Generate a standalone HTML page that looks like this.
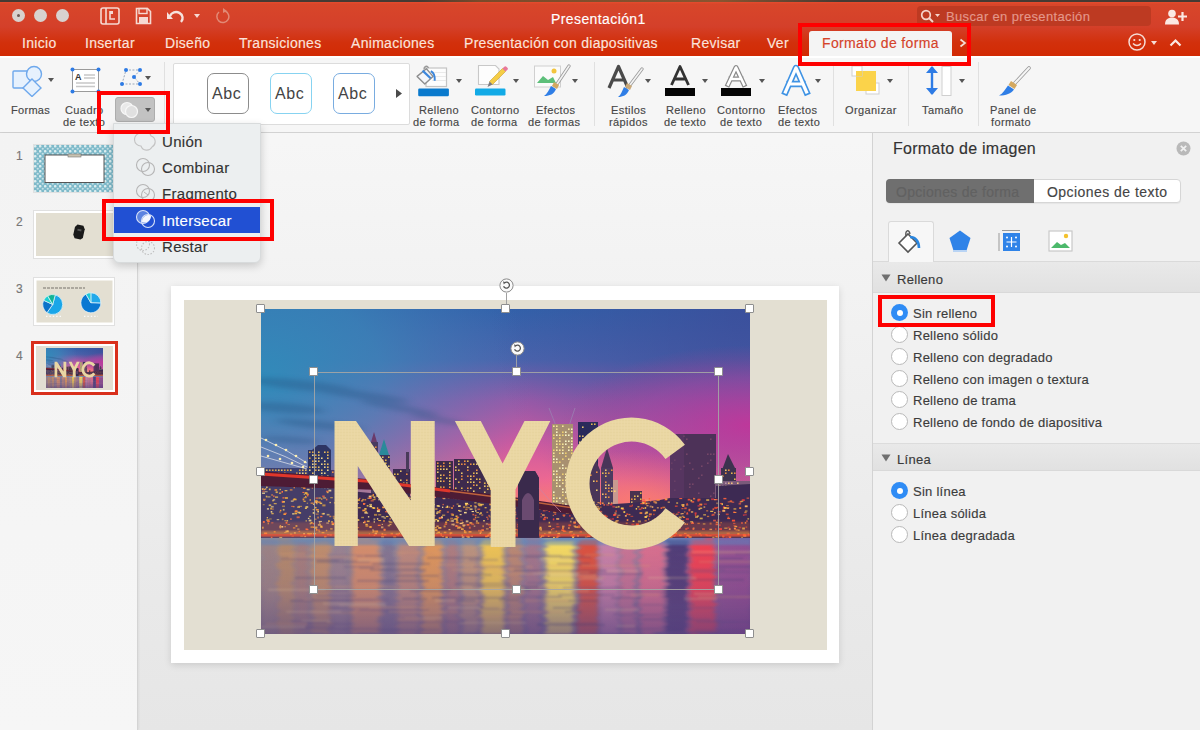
<!DOCTYPE html>
<html><head><meta charset="utf-8">
<style>
*{margin:0;padding:0;box-sizing:border-box}
html,body{width:1200px;height:730px;overflow:hidden;background:linear-gradient(180deg,#f7f7f7 0,#f6f6f6 140px,#f1f1f1 330px,#e9e9e9 600px,#e6e6e6 730px);font-family:"Liberation Sans",sans-serif;color:#333}
.a{position:absolute}
.t{position:absolute;white-space:nowrap;line-height:1;-webkit-text-stroke:0.15px currentColor}
#topstrip{left:0;top:0;width:1200px;height:2px;background:linear-gradient(90deg,#453a33 0,#453a33 35%,#7a4a2a 40%,#8a5430 60%,#453a33 70%,#453a33 100%)}
#title{left:0;top:2px;width:1200px;height:54px;background:linear-gradient(180deg,#e64c2e 0,#d8462a 4%,#d4402a 45%,#d2300c 75%,#d22a04 100%)}
.tab{color:#fbe3dc;font-size:14px;letter-spacing:0.3px;top:36px}
#ribbon{left:0;top:56px;width:1200px;height:77px;background:#f6f6f6;border-top:2px solid #fff;border-bottom:1px solid #d2d2d2}
.rl{font-size:11px;color:#464646;letter-spacing:0.4px;text-align:center}
.sep{position:absolute;top:62px;width:1px;height:64px;background:#e0e0e0}
.arr{position:absolute;width:0;height:0;border-left:3px solid transparent;border-right:3px solid transparent;border-top:4px solid #555}
#left{left:0;top:133px;width:138px;height:597px;background:linear-gradient(180deg,#f3f3f3,#f6f6f6);border-right:1px solid #d4d4d4;box-shadow:1px 0 2px rgba(0,0,0,0.05)}
#right{left:872px;top:133px;width:328px;height:597px;background:#f1f1f1;border-left:1px solid #d3d3d3}
.rad{position:absolute;width:17px;height:17px;border-radius:50%;background:#fff;border:1px solid #b9b9b9}
.rad.on{background:#2f8cf5;border:none}
.rad.on:after{content:"";position:absolute;left:5.5px;top:5.5px;width:6px;height:6px;border-radius:50%;background:#fff}
.rt{font-size:13px;color:#3c3c3c;letter-spacing:0.25px}
.redbox{position:absolute;border:4px solid #fe0000}
.mi{font-size:15px;color:#333;letter-spacing:0.3px}
.h{position:absolute;width:9px;height:9px;background:#fff;border:1px solid #8f8f8f;border-radius:1px}
</style></head><body>
<div id="topstrip" class="a"></div>
<div id="title" class="a"></div>
<!-- traffic lights -->
<div class="a" style="left:12px;top:9px;width:13px;height:13px;border-radius:50%;background:#d8d2cf"></div>
<div class="a" style="left:17px;top:14px;width:3px;height:3px;border-radius:50%;background:#6a5a55"></div>
<div class="a" style="left:34px;top:9px;width:13px;height:13px;border-radius:50%;background:#d8d2cf"></div>
<div class="a" style="left:56px;top:9px;width:13px;height:13px;border-radius:50%;background:#d8d2cf"></div>
<div class="t" style="left:551px;top:12px;font-size:14px;color:#fff;letter-spacing:0.4px">Presentación1</div>

<div class="t tab" style="left:22px">Inicio</div>
<div class="t tab" style="left:85px">Insertar</div>
<div class="t tab" style="left:165px">Diseño</div>
<div class="t tab" style="left:239px">Transiciones</div>
<div class="t tab" style="left:351px">Animaciones</div>
<div class="t tab" style="left:464px">Presentación con diapositivas</div>
<div class="t tab" style="left:691px">Revisar</div>
<div class="t tab" style="left:767px">Ver</div>
<div class="a" style="left:809px;top:31px;width:143px;height:25px;background:#f4f4f4;border-radius:3px 3px 0 0"></div>
<div class="t" style="left:822px;top:36px;font-size:14px;color:#d5432a;letter-spacing:0.35px">Formato de forma</div>


<!-- title icons -->
<svg class="a" style="left:100px;top:7px" width="20" height="18" viewBox="0 0 20 18"><rect x="1" y="1" width="18" height="16" rx="2" fill="none" stroke="#f6d9d2" stroke-width="1.6"/><line x1="6" y1="1" x2="6" y2="17" stroke="#f6d9d2" stroke-width="1.6"/><path d="M10 4v8h5" fill="none" stroke="#f6d9d2" stroke-width="1.6"/><rect x="10" y="4" width="3" height="3" fill="#f6d9d2"/></svg>
<svg class="a" style="left:135px;top:7px" width="17" height="18" viewBox="0 0 17 18"><path d="M1.5 1.5h11l3 3v12h-14z" fill="none" stroke="#f6d9d2" stroke-width="1.6"/><rect x="4" y="1.5" width="8" height="5" fill="none" stroke="#f6d9d2" stroke-width="1.4"/><rect x="4" y="10" width="9" height="6" fill="#f6d9d2"/></svg>
<svg class="a" style="left:167px;top:9px" width="20" height="15" viewBox="0 0 20 15"><path d="M3 7 A6.5 6 0 1 1 14 13" fill="none" stroke="#f6e3de" stroke-width="2.4"/><path d="M0 3l6 7H0z" fill="#f6e3de"/></svg>
<div class="arr" style="left:194px;top:14px;border-top-color:#f6d9d2"></div>
<svg class="a" style="left:215px;top:8px" width="15" height="16" viewBox="0 0 15 16"><path d="M4 4 A6 6 0 1 0 10 3" fill="none" stroke="#e28a76" stroke-width="1.5"/><path d="M8 0l4 3-4 2z" fill="#e28a76"/></svg>
<!-- search -->
<div class="a" style="left:917px;top:6px;width:234px;height:20px;background:#bd3a22;border-radius:4px"></div>
<svg class="a" style="left:920px;top:9px" width="22" height="14" viewBox="0 0 22 14"><circle cx="6" cy="6" r="4.3" fill="none" stroke="#f5d5cc" stroke-width="1.7"/><line x1="9" y1="9" x2="13" y2="13" stroke="#f5d5cc" stroke-width="1.9"/><path d="M15 5h5l-2.5 3z" fill="#f5d5cc"/></svg>
<div class="t" style="left:946px;top:10px;font-size:13px;color:#e4978a;letter-spacing:0.35px">Buscar en presentación</div>
<svg class="a" style="left:1165px;top:9px" width="23" height="16" viewBox="0 0 23 16"><circle cx="7" cy="4.5" r="3.8" fill="#fbe8e3"/><path d="M0 15.5c0-5 3-7 7-7s7 2 7 7z" fill="#fbe8e3"/><path d="M17.5 3v9M13 7.5h9" stroke="#fbe8e3" stroke-width="2.2"/></svg>
<!-- smiley & collapse -->
<svg class="a" style="left:1127px;top:33px" width="22" height="18" viewBox="0 0 22 18"><circle cx="10" cy="9" r="8" fill="none" stroke="#f6dcd5" stroke-width="1.5"/><circle cx="7.3" cy="7" r="1.1" fill="#f6dcd5"/><circle cx="12.7" cy="7" r="1.1" fill="#f6dcd5"/><path d="M6 10.5q4 4 8 0" fill="none" stroke="#f6dcd5" stroke-width="1.4"/></svg>
<div class="arr" style="left:1151px;top:41px;border-top-color:#f6dcd5"></div>
<svg class="a" style="left:1169px;top:38px" width="13" height="9" viewBox="0 0 13 9"><path d="M1.5 7.5l5-5 5 5" fill="none" stroke="#fbe9e5" stroke-width="2.2"/></svg>
<svg class="a" style="left:959px;top:38px" width="13" height="10" viewBox="0 0 13 10"><path d="M1.5 1.5l4.5 3.5-4.5 3.5" fill="none" stroke="#f6dcd5" stroke-width="1.7"/><circle cx="11" cy="5" r="1" fill="#f6dcd5"/></svg>
<div id="ribbon" class="a"></div>

<!-- ribbon content -->
<svg class="a" style="left:12px;top:65px" width="32" height="32" viewBox="0 0 32 32"><rect x="1" y="6" width="17" height="17" rx="1" fill="#e6f1fd" stroke="#6ea8ec" stroke-width="1.4"/><circle cx="22" cy="9" r="7.5" fill="#e6f1fd" stroke="#6ea8ec" stroke-width="1.4"/><path d="M20 14l9 9-9 8.5-9-8.5z" fill="#e6f1fd" stroke="#6ea8ec" stroke-width="1.4"/></svg>
<div class="arr" style="left:48px;top:78px"></div>
<div class="t rl" style="left:11px;top:105px;letter-spacing:0.3px">Formas</div>
<svg class="a" style="left:70px;top:67px" width="32" height="27" viewBox="0 0 32 27"><rect x="2.5" y="2.5" width="26" height="22" fill="#fff" stroke="#9a9a9a" stroke-width="1"/><text x="5" y="13" font-family="Liberation Sans" font-size="9" font-weight="bold" fill="#333">A</text><path d="M14 8h11M14 11h11M6 16h19M6 19.5h19" stroke="#c8c8c8" stroke-width="1.3"/><circle cx="2.5" cy="2.5" r="2" fill="#2d7be5"/><circle cx="28.5" cy="2.5" r="2" fill="#2d7be5"/><circle cx="2.5" cy="24.5" r="2" fill="#2d7be5"/><circle cx="28.5" cy="24.5" r="2" fill="#2d7be5"/></svg>
<div class="t rl" style="left:65px;top:105px">Cuadro</div>
<div class="t rl" style="left:63px;top:117px">de texto</div>
<svg class="a" style="left:118px;top:67px" width="26" height="20" viewBox="0 0 26 20"><path d="M4 17h18M4 17l4-14h14M22 3l-6 7 6 7" fill="none" stroke="#9aa8bb" stroke-width="1" stroke-dasharray="2 1.5"/><circle cx="4" cy="17" r="2" fill="#2d7be5"/><circle cx="8" cy="3" r="2" fill="#2d7be5"/><circle cx="22" cy="3" r="2" fill="#2d7be5"/><circle cx="16" cy="10" r="2" fill="#2d7be5"/><circle cx="22" cy="17" r="2" fill="#2d7be5"/></svg>
<div class="arr" style="left:145px;top:76px"></div>
<!-- merge button -->
<div class="a" style="left:115px;top:97px;width:40px;height:25px;background:#c2c2c2;border:1px solid #adadad;border-radius:3px"></div>
<svg class="a" style="left:119px;top:101px" width="22" height="18" viewBox="0 0 22 18"><circle cx="8" cy="7.5" r="6" fill="#e9e9e9" stroke="#f7f7f7" stroke-width="1.2"/><circle cx="12.5" cy="10.5" r="6" fill="#e0e0e0" stroke="#f7f7f7" stroke-width="1.2"/></svg>
<div class="arr" style="left:145px;top:108px"></div>
<div class="sep" style="left:164px"></div>
<!-- gallery -->
<div class="a" style="left:173px;top:63px;width:237px;height:62px;background:#fff;border:1px solid #dcdcdc;border-radius:2px"></div>
<div class="a" style="left:207px;top:73px;width:42px;height:41px;border:1.3px solid #8c8c8c;border-radius:7px"></div>
<div class="a" style="left:270px;top:73px;width:42px;height:41px;border:1.3px solid #87d3f1;border-radius:7px"></div>
<div class="a" style="left:333px;top:73px;width:42px;height:41px;border:1.3px solid #79ace0;border-radius:7px"></div>
<div class="t" style="left:212px;top:86px;font-size:16px;color:#444;letter-spacing:0.6px;-webkit-text-stroke:0">Abc</div>
<div class="t" style="left:275px;top:86px;font-size:16px;color:#444;letter-spacing:0.6px;-webkit-text-stroke:0">Abc</div>
<div class="t" style="left:338px;top:86px;font-size:16px;color:#444;letter-spacing:0.6px;-webkit-text-stroke:0">Abc</div>
<svg class="a" style="left:395px;top:88px" width="8" height="11" viewBox="0 0 8 11"><path d="M1 1l6 4.5-6 4.5z" fill="#4a4a4a"/></svg>
<!-- relleno de forma -->
<svg class="a" style="left:415px;top:63px" width="34" height="34" viewBox="0 0 34 34"><rect x="11" y="5" width="20.5" height="18.5" fill="#fdfdfd" stroke="#c4c4c4" stroke-width="1.2"/><path d="M17 9.5h14M17 13.5h14M17 17.5h14" stroke="#e4e4e4" stroke-width="0.8"/><path d="M11.4 5.8L18 13.4L9.8 21L2.1 13.4Z" fill="#f4f6fa" stroke="#8e8e8e" stroke-width="1.4" stroke-linejoin="round"/><path d="M7.6 7.6L15.6 15.2" stroke="#3d87dc" stroke-width="2.2"/><path d="M9 6.5c0-3 3-4.5 4.5-1.5" fill="none" stroke="#9a9a9a" stroke-width="1.5"/><path d="M15.8 8.2c2.6 1.2 4.2 4.8 3.9 9.6" fill="none" stroke="#3d87dc" stroke-width="2"/><rect x="3.2" y="25.5" width="30.7" height="7.7" rx="1.2" fill="#0a7acd"/></svg>
<div class="arr" style="left:456px;top:79px"></div>
<div class="t rl" style="left:419px;top:105px">Relleno</div>
<div class="t rl" style="left:413px;top:117px">de forma</div>
<svg class="a" style="left:474px;top:64px" width="34" height="33" viewBox="0 0 34 33"><path d="M4.5 1.5h17l3.5 3.5v15.5h-20.5z" fill="#fdfdfd" stroke="#c8c8c8" stroke-width="1.1"/><path d="M15.5 17.5L28.5 4.5l3 3-13 13z" fill="#f5cd45" stroke="#c9a030" stroke-width="0.6"/><path d="M28.5 4.5l1.8-1.8a1.5 1.5 0 0 1 2.1 0l1 1a1.5 1.5 0 0 1 0 2.1L31.5 7.5z" fill="#e8789a"/><path d="M15.5 17.5l-2 5.5 5-2.5z" fill="#7a7a80"/><rect x="1" y="24.5" width="30.5" height="7" rx="1.2" fill="#12aae6"/></svg>
<div class="arr" style="left:513px;top:79px"></div>
<div class="t rl" style="left:471px;top:105px">Contorno</div>
<div class="t rl" style="left:471px;top:117px">de forma</div>
<svg class="a" style="left:533px;top:64px" width="38" height="34" viewBox="0 0 38 34"><rect x="1.5" y="2" width="26" height="21" fill="#fbfbfb" stroke="#d0d0d0" stroke-width="1"/><path d="M4 19l6-7 5 4 5-3 3 6z" fill="#5dbf7a"/><circle cx="21" cy="7" r="2.5" fill="#f3c53e"/><path d="M36 2l-12 18" stroke="#9a9a9a" stroke-width="3.2" stroke-linecap="round"/><path d="M36 2l-12 18" stroke="#f3f3f3" stroke-width="1.6" stroke-linecap="round"/><path d="M21 18l5 3-2 4-5-3z" fill="#d3a860"/><path d="M18 22l5 3c-2 5-6 7-12 7 3-2 5-6 7-10z" fill="#2f7ee6"/></svg>
<div class="arr" style="left:572px;top:79px"></div>
<div class="t rl" style="left:536px;top:105px">Efectos</div>
<div class="t rl" style="left:528px;top:117px">de formas</div>
<div class="sep" style="left:594px"></div>
<!-- text styles -->
<svg class="a" style="left:606px;top:64px" width="38" height="33" viewBox="0 0 38 33"><path d="M3 24L12.5 2.5L22 24M6.8 16h11.5" fill="none" stroke="#4a4a4a" stroke-width="3.2" stroke-linejoin="round"/><path d="M36 5l-12 16" stroke="#9a9a9a" stroke-width="3.2" stroke-linecap="round"/><path d="M36 5l-12 16" stroke="#f3f3f3" stroke-width="1.6" stroke-linecap="round"/><path d="M21 19l5 3-2 4-5-3z" fill="#c9a878"/><path d="M18 23l5 3c-2 5-6 7-11 7 3-2 4-6 6-10z" fill="#2f7ee6"/></svg>
<div class="arr" style="left:645px;top:79px"></div>
<div class="t rl" style="left:611px;top:105px">Estilos</div>
<div class="t rl" style="left:609px;top:117px">rápidos</div>
<svg class="a" style="left:664px;top:64px" width="32" height="33" viewBox="0 0 32 33"><path d="M7.5 21L16 2.5L24.5 21M10.5 15h11" fill="none" stroke="#333" stroke-width="2.8" stroke-linejoin="round"/><rect x="1" y="24" width="30" height="8" fill="#050505"/></svg>
<div class="arr" style="left:702px;top:79px"></div>
<div class="t rl" style="left:666px;top:105px">Relleno</div>
<div class="t rl" style="left:664px;top:117px">de texto</div>
<svg class="a" style="left:720px;top:64px" width="32" height="33" viewBox="0 0 32 33"><path d="M8 20.5L16 3.5L24 20.5M11 15h10" fill="none" stroke="#8a8a8a" stroke-width="5" stroke-linejoin="round" stroke-linecap="square"/><path d="M8 20.5L16 3.5L24 20.5M11 15h10" fill="none" stroke="#fff" stroke-width="2.6" stroke-linejoin="round" stroke-linecap="square"/><rect x="1" y="24" width="30" height="8" fill="#050505"/></svg>
<div class="arr" style="left:759px;top:79px"></div>
<div class="t rl" style="left:717px;top:105px">Contorno</div>
<div class="t rl" style="left:720px;top:117px">de texto</div>
<svg class="a" style="left:780px;top:63px" width="32" height="34" viewBox="0 0 32 34"><path d="M5.5 29L16 5L26.5 29M9.5 21h13" fill="none" stroke="#3f93e4" stroke-width="6.5" stroke-linejoin="round" stroke-linecap="square"/><path d="M5.5 29L16 5L26.5 29M9.5 21h13" fill="none" stroke="#fff" stroke-width="3.2" stroke-linejoin="round" stroke-linecap="square"/></svg>
<div class="arr" style="left:815px;top:79px"></div>
<div class="t rl" style="left:778px;top:105px">Efectos</div>
<div class="t rl" style="left:778px;top:117px">de texto</div>
<div class="sep" style="left:833px"></div>
<!-- organizar -->
<svg class="a" style="left:850px;top:64px" width="32" height="32" viewBox="0 0 32 32"><rect x="16" y="19" width="13" height="11" fill="#fff" stroke="#cfcfcf" stroke-width="1"/><rect x="6" y="7" width="20" height="20" fill="#fbd34a"/><rect x="2" y="2" width="10" height="10" fill="#fff" stroke="#cfcfcf" stroke-width="1"/><rect x="6" y="7" width="6" height="5" fill="#fbd34a"/></svg>
<div class="arr" style="left:887px;top:79px"></div>
<div class="t rl" style="left:845px;top:105px">Organizar</div>
<div class="sep" style="left:908px"></div>
<svg class="a" style="left:924px;top:65px" width="30" height="32" viewBox="0 0 30 32"><path d="M8 2v27" stroke="#2d7be5" stroke-width="2.4"/><path d="M2 8l6-7 6 7z M2 23l6 7 6-7z" fill="#2d7be5"/><rect x="18" y="1.5" width="9" height="29" fill="#fff" stroke="#cfcfcf" stroke-width="1"/></svg>
<div class="arr" style="left:959px;top:79px"></div>
<div class="t rl" style="left:922px;top:105px">Tamaño</div>
<div class="sep" style="left:978px"></div>
<svg class="a" style="left:996px;top:66px" width="36" height="30" viewBox="0 0 36 30"><path d="M33 2l-14 15" stroke="#9a9a9a" stroke-width="3.6" stroke-linecap="round"/><path d="M33 2l-14 15" stroke="#f5f5f5" stroke-width="2" stroke-linecap="round"/><path d="M15 15l6 4-2.5 4-6-4z" fill="#d3a860"/><path d="M12 19.5l6 4c-3 4-8 6-15 6 4-2 6-6 9-10z" fill="#2f7ee6"/></svg>
<div class="t rl" style="left:990px;top:105px">Panel de</div>
<div class="t rl" style="left:991px;top:117px">formato</div>
<div id="left" class="a"></div>
<div id="right" class="a"></div>



<!-- right panel -->
<div class="t" style="left:893px;top:141px;font-size:16px;color:#333;letter-spacing:0.25px">Formato de imagen</div>
<svg class="a" style="left:1176px;top:141px" width="15" height="15" viewBox="0 0 15 15"><circle cx="7.5" cy="7.5" r="7" fill="#b9b9b9"/><path d="M4.8 4.8l5.4 5.4M10.2 4.8l-5.4 5.4" stroke="#f0f0f0" stroke-width="1.7"/></svg>
<div class="a" style="left:886px;top:179px;width:295px;height:24px;background:#fff;border:1px solid #d6d6d6;border-radius:4px;box-shadow:0 1px 1px rgba(0,0,0,0.05)"></div>
<div class="a" style="left:886px;top:179px;width:148px;height:24px;background:#6f6f6f;border-radius:4px 0 0 4px"></div>
<div class="t" style="left:896px;top:185px;font-size:14px;color:#616161;letter-spacing:0.3px">Opciones de forma</div>
<div class="t" style="left:1047px;top:185px;font-size:14px;color:#444;letter-spacing:0.45px">Opciones de texto</div>
<!-- icon tabs -->
<div class="a" style="left:888px;top:221px;width:46px;height:41px;background:#f7f7f7;border:1px solid #dadada;border-bottom:none;border-radius:3px 3px 0 0"></div>
<div class="a" style="left:873px;top:261px;width:15px;height:1px;background:#dadada"></div>
<div class="a" style="left:934px;top:261px;width:266px;height:1px;background:#dadada"></div>
<svg class="a" style="left:897px;top:228px" width="26" height="26" viewBox="0 0 26 26"><path d="M2 15l9-9 9 9-9 9z" fill="#fff" stroke="#555" stroke-width="1.6"/><path d="M9 8c-1-6 3-7 4-2" fill="none" stroke="#555" stroke-width="1.4"/><path d="M13 9c5 0 9 4 9 11" fill="none" stroke="#2b86de" stroke-width="2.6"/></svg>
<svg class="a" style="left:948px;top:229px" width="24" height="24" viewBox="0 0 24 24"><path d="M12 1.5l10.5 7.5-4 12.5h-13l-4-12.5z" fill="#2f83e8"/><rect x="5" y="21" width="14" height="2" fill="#b9d4f4"/></svg>
<svg class="a" style="left:997px;top:229px" width="25" height="24" viewBox="0 0 25 24"><path d="M2 4v18" stroke="#999" stroke-width="1"/><path d="M5 1.5h18" stroke="#999" stroke-width="1"/><rect x="6" y="4" width="17" height="18" fill="#2f83e8"/><path d="M14.5 8v10M9.5 13h10" stroke="#fff" stroke-width="1.2"/><circle cx="10" cy="8.5" r="1" fill="#fff"/><circle cx="19" cy="8.5" r="1" fill="#fff"/><circle cx="10" cy="17.5" r="1" fill="#fff"/><circle cx="19" cy="17.5" r="1" fill="#fff"/></svg>
<svg class="a" style="left:1048px;top:230px" width="25" height="22" viewBox="0 0 25 22"><rect x="1" y="1" width="23" height="20" fill="#fff" stroke="#c9c9c9" stroke-width="1.2"/><path d="M3 18l6-6 4 3 4-2 5 5z" fill="#4cb96b"/><circle cx="18" cy="6" r="2.2" fill="#f4c22e"/></svg>
<!-- relleno section -->
<div class="a" style="left:873px;top:262px;width:327px;height:31px;background:linear-gradient(180deg,#e9e9e9,#e1e1e1);border-bottom:1px solid #d9d9d9"></div>
<svg class="a" style="left:881px;top:274px" width="10" height="8" viewBox="0 0 10 8"><path d="M0.5 0.5h9l-4.5 7z" fill="#707070"/></svg>
<div class="t" style="left:897px;top:273px;font-size:13px;color:#3a3a3a;letter-spacing:0.3px">Relleno</div>
<div class="rad on" style="left:891px;top:304px"></div>
<div class="rad" style="left:891px;top:326px"></div>
<div class="rad" style="left:891px;top:348px"></div>
<div class="rad" style="left:891px;top:370px"></div>
<div class="rad" style="left:891px;top:391px"></div>
<div class="rad" style="left:891px;top:413px"></div>
<div class="t rt" style="left:913px;top:307px">Sin relleno</div>
<div class="t rt" style="left:913px;top:329px">Relleno sólido</div>
<div class="t rt" style="left:913px;top:351px">Relleno con degradado</div>
<div class="t rt" style="left:913px;top:373px">Relleno con imagen o textura</div>
<div class="t rt" style="left:913px;top:394px">Relleno de trama</div>
<div class="t rt" style="left:913px;top:416px">Relleno de fondo de diapositiva</div>
<div class="a" style="left:873px;top:443px;width:327px;height:1px;background:#dcdcdc"></div>
<div class="a" style="left:873px;top:444px;width:327px;height:27px;background:linear-gradient(180deg,#e9e9e9,#e1e1e1);border-bottom:1px solid #d9d9d9"></div>
<svg class="a" style="left:881px;top:454px" width="10" height="8" viewBox="0 0 10 8"><path d="M0.5 0.5h9l-4.5 7z" fill="#707070"/></svg>
<div class="t" style="left:897px;top:453px;font-size:13px;color:#3a3a3a;letter-spacing:0.3px">Línea</div>
<div class="rad on" style="left:891px;top:482px"></div>
<div class="rad" style="left:891px;top:504px"></div>
<div class="rad" style="left:891px;top:526px"></div>
<div class="t rt" style="left:913px;top:485px">Sin línea</div>
<div class="t rt" style="left:913px;top:507px">Línea sólida</div>
<div class="t rt" style="left:913px;top:529px">Línea degradada</div>
<!-- thumbnails -->
<div class="t" style="left:16px;top:150px;font-size:12px;color:#777">1</div>
<div class="a" style="left:33px;top:144px;width:82px;height:49px;background:#fff;border:1px solid #e0e0e0"></div>
<svg class="a" style="left:34px;top:145px" width="80" height="47" viewBox="0 0 80 47"><defs><pattern id="pt" width="5" height="5" patternUnits="userSpaceOnUse"><rect width="5" height="5" fill="#7db9c9"/><circle cx="1.25" cy="1.25" r="1.3" fill="#dcedf0"/><circle cx="3.75" cy="3.75" r="1.1" fill="#c4e0e6"/></pattern></defs><rect width="80" height="47" fill="url(#pt)"/><rect x="11" y="10" width="59" height="27.5" fill="#fff" stroke="#555" stroke-width="1"/><rect x="34" y="9" width="13" height="3" fill="#c9c2b0" stroke="#777" stroke-width="0.6"/></svg>
<div class="t" style="left:16px;top:216px;font-size:12px;color:#777">2</div>
<div class="a" style="left:33px;top:210px;width:82px;height:49px;background:#fff;border:1px solid #e0e0e0"></div>
<div class="a" style="left:36px;top:213px;width:77px;height:43px;background:#e3dfd2"></div>
<svg class="a" style="left:73px;top:224px" width="12" height="16" viewBox="0 0 12 16"><path d="M3 1h6l2 3v9l-2 2H3l-2-3V4z" fill="#1a1a1a" transform="rotate(12 6 8)"/><rect x="4" y="5" width="4" height="2" fill="#555" transform="rotate(12 6 8)"/></svg>
<div class="t" style="left:16px;top:283px;font-size:12px;color:#777">3</div>
<div class="a" style="left:33px;top:277px;width:82px;height:49px;background:#fff;border:1px solid #e0e0e0"></div>
<svg class="a" style="left:36px;top:280px" width="77" height="43" viewBox="0 0 77 43"><rect x="0.5" y="0.5" width="76" height="42" fill="#e3dfd2"/><path d="M7 8h42" stroke="#6a6660" stroke-width="1.7" stroke-dasharray="3 1" opacity="0.6"/><path d="M16.70 24.50L19.29 14.84A10 10 0 1 1 10.96 32.69Z" fill="#1aa6e8" stroke="#e8f6fb" stroke-width="0.7"/><path d="M16.70 24.50L10.96 32.69A10 10 0 0 1 7.64 20.27Z" fill="#0b72c9" stroke="#e8f6fb" stroke-width="0.7"/><path d="M16.70 24.50L7.64 20.27A10 10 0 0 1 11.70 15.84Z" fill="#1ccfd0" stroke="#e8f6fb" stroke-width="0.7"/><path d="M16.70 24.50L11.70 15.84A10 10 0 0 1 19.29 14.84Z" fill="#12b496" stroke="#e8f6fb" stroke-width="0.7"/><path d="M54.90 22.80L54.90 12.80A10 10 0 0 1 64.89 23.15Z" fill="#22a9ea" stroke="#e8f6fb" stroke-width="0.7"/><path d="M54.90 22.80L64.89 23.15A10 10 0 1 1 49.90 14.14Z" fill="#0a78d2" stroke="#e8f6fb" stroke-width="0.7"/><path d="M54.90 22.80L49.90 14.14A10 10 0 0 1 54.90 12.80Z" fill="#1cc8d8" stroke="#e8f6fb" stroke-width="0.7"/><path d="M10 36.3h16M48 36.3h14" stroke="#fafafa" stroke-width="1.2" stroke-dasharray="1.4 2"/></svg>
<div class="t" style="left:16px;top:350px;font-size:12px;color:#777">4</div>
<div class="a" style="left:31px;top:341px;width:87px;height:54px;border:3px solid #d9301c;background:#fff"></div>
<div class="a" style="left:36px;top:346px;width:77px;height:44px;background:#e3dfd2"></div>
<svg class="a" style="left:46px;top:348px" width="57" height="40" viewBox="261 309 489 325" preserveAspectRatio="none"><use href="#nycimg"/></svg>
<!-- slide frame -->
<div class="a" style="left:171px;top:286px;width:668px;height:377px;background:#fff;box-shadow:0 2px 7px rgba(0,0,0,0.13)"></div>
<div class="a" style="left:184px;top:300px;width:643px;height:350px;background:#e3dfd2"></div>
<svg class="a" style="left:261px;top:309px" width="489" height="325" viewBox="261 309 489 325">
<defs>
<linearGradient id="sky" x1="0" y1="309" x2="0" y2="540" gradientUnits="userSpaceOnUse">
<stop offset="0" stop-color="#3262aa"/><stop offset="0.22" stop-color="#4a64ac"/><stop offset="0.4" stop-color="#9a5aa8"/><stop offset="0.58" stop-color="#cc5aa0"/><stop offset="0.74" stop-color="#ec6892"/><stop offset="0.86" stop-color="#f5806e"/><stop offset="1" stop-color="#f5906a"/>
</linearGradient>
<radialGradient id="skyL" cx="261" cy="380" r="270" gradientTransform="translate(261 380) scale(1 0.75) translate(-261 -380)" gradientUnits="userSpaceOnUse">
<stop offset="0" stop-color="#2e8cba" stop-opacity="0.97"/><stop offset="0.45" stop-color="#3a88ba" stop-opacity="0.7"/><stop offset="1" stop-color="#4a7ab8" stop-opacity="0"/>
</radialGradient>
<radialGradient id="skyTR" cx="750" cy="309" r="260" gradientUnits="userSpaceOnUse">
<stop offset="0" stop-color="#3d4a98" stop-opacity="0.75"/><stop offset="1" stop-color="#3d4a98" stop-opacity="0"/>
</radialGradient>
<radialGradient id="skyMag" cx="750" cy="425" r="190" gradientTransform="translate(750 425) scale(1 0.42) translate(-750 -425)" gradientUnits="userSpaceOnUse">
<stop offset="0" stop-color="#c8339a" stop-opacity="0.85"/><stop offset="0.6" stop-color="#c040a0" stop-opacity="0.4"/><stop offset="1" stop-color="#b83a90" stop-opacity="0"/>
</radialGradient>
<radialGradient id="glow" cx="640" cy="500" r="110" gradientTransform="translate(640 500) scale(1 0.45) translate(-640 -500)" gradientUnits="userSpaceOnUse">
<stop offset="0" stop-color="#ff7a70" stop-opacity="0.85"/><stop offset="1" stop-color="#ff6a8a" stop-opacity="0"/>
</radialGradient>
<linearGradient id="water" x1="0" y1="538" x2="0" y2="634" gradientUnits="userSpaceOnUse">
<stop offset="0" stop-color="#6a90c0"/><stop offset="0.15" stop-color="#8a84a0"/><stop offset="0.6" stop-color="#806e94"/><stop offset="1" stop-color="#6a5a8c"/>
</linearGradient>
<linearGradient id="waterH" x1="261" y1="0" x2="750" y2="0" gradientUnits="userSpaceOnUse">
<stop offset="0" stop-color="#a08a7a" stop-opacity="0.5"/><stop offset="0.5" stop-color="#a08080" stop-opacity="0.2"/><stop offset="0.7" stop-color="#8a5a90" stop-opacity="0"/><stop offset="1" stop-color="#7a2a80" stop-opacity="0.45"/>
</linearGradient>
<linearGradient id="wfade" x1="0" y1="538" x2="0" y2="634" gradientUnits="userSpaceOnUse"><stop offset="0" stop-color="#5a4a88" stop-opacity="0"/><stop offset="0.5" stop-color="#5a4a88" stop-opacity="0.1"/><stop offset="1" stop-color="#4a3a7a" stop-opacity="0.4"/></linearGradient>
<linearGradient id="mgrad" x1="0" y1="538" x2="0" y2="634" gradientUnits="userSpaceOnUse"><stop offset="0" stop-color="#fff"/><stop offset="0.5" stop-color="#ddd"/><stop offset="1" stop-color="#888"/></linearGradient>
<mask id="wm" maskUnits="userSpaceOnUse" x="261" y="538" width="489" height="96"><rect x="261" y="538" width="489" height="96" fill="url(#mgrad)"/></mask>
<pattern id="tex" width="3" height="3" patternUnits="userSpaceOnUse"><rect width="3" height="3" fill="#ead7a3"/><rect width="3" height="0.6" fill="#e6d29d"/><rect width="0.6" height="3" fill="#ecdaa8"/></pattern>
<filter id="bl05" x="-10%" y="-10%" width="120%" height="120%"><feGaussianBlur stdDeviation="0.6"/></filter>
<filter id="bl1" x="-20%" y="-20%" width="140%" height="140%"><feGaussianBlur stdDeviation="1"/></filter>
<filter id="bl2" x="-50%" y="-20%" width="200%" height="140%"><feTurbulence type="fractalNoise" baseFrequency="0.02 0.35" numOctaves="2" seed="3" result="n"/><feDisplacementMap in="SourceGraphic" in2="n" scale="10" xChannelSelector="R" yChannelSelector="G" result="d"/><feGaussianBlur in="d" stdDeviation="2.2 0.8"/></filter>
<filter id="bl3" x="-20%" y="-50%" width="140%" height="200%"><feGaussianBlur stdDeviation="5 2.5"/></filter>
</defs><g id="nycimg">
<rect x="261" y="309" width="489" height="232" fill="url(#sky)"/>
<rect x="261" y="309" width="489" height="232" fill="url(#skyL)"/>
<rect x="261" y="309" width="489" height="232" fill="url(#skyTR)"/>
<rect x="261" y="309" width="489" height="232" fill="url(#skyMag)"/>
<rect x="261" y="309" width="489" height="232" fill="url(#glow)"/>
<g filter="url(#bl3)" opacity="0.32">
<ellipse cx="300" cy="385" rx="55" ry="5" fill="#24507e" transform="rotate(6 300 385)"/>
<ellipse cx="360" cy="395" rx="50" ry="4" fill="#24507e" transform="rotate(8 360 395)"/>
<ellipse cx="285" cy="408" rx="40" ry="5" fill="#24507e" transform="rotate(4 285 408)"/>
<ellipse cx="400" cy="408" rx="40" ry="3" fill="#24507e" transform="rotate(10 400 408)"/>
<ellipse cx="320" cy="425" rx="45" ry="4" fill="#24507e" transform="rotate(6 320 425)"/>
<ellipse cx="290" cy="440" rx="30" ry="3" fill="#24507e" transform="rotate(4 290 440)"/>
<ellipse cx="440" cy="420" rx="30" ry="2.5" fill="#24507e" transform="rotate(10 440 420)"/>
</g>
<g filter="url(#bl05)">
<rect x="262" y="468" width="46" height="72" fill="#3a4070"/><rect x="263.0" y="469.5" width="1.6" height="1.4" fill="#ffd060"/><rect x="266.0" y="469.5" width="1.6" height="1.4" fill="#ffd060"/><rect x="269.0" y="469.5" width="1.6" height="1.4" fill="#f0b040"/><rect x="272.0" y="469.5" width="1.6" height="1.4" fill="#f0b040"/><rect x="275.0" y="469.5" width="1.6" height="1.4" fill="#f0b040"/><rect x="278.0" y="469.5" width="1.6" height="1.4" fill="#ffd060"/><rect x="281.0" y="469.5" width="1.6" height="1.4" fill="#ffd060"/><rect x="284.0" y="469.5" width="1.6" height="1.4" fill="#f0b040"/><rect x="287.0" y="469.5" width="1.6" height="1.4" fill="#f0b040"/><rect x="290.0" y="469.5" width="1.6" height="1.4" fill="#ffd060"/><rect x="299.0" y="469.5" width="1.6" height="1.4" fill="#f0b040"/><rect x="302.0" y="469.5" width="1.6" height="1.4" fill="#ffd060"/><rect x="305.0" y="469.5" width="1.6" height="1.4" fill="#ffd060"/><rect x="263.0" y="472.5" width="1.6" height="1.4" fill="#ffd060"/><rect x="278.0" y="472.5" width="1.6" height="1.4" fill="#f0b040"/><rect x="284.0" y="472.5" width="1.6" height="1.4" fill="#f0b040"/><rect x="296.0" y="472.5" width="1.6" height="1.4" fill="#f0b040"/><rect x="299.0" y="472.5" width="1.6" height="1.4" fill="#ffe890"/><rect x="302.0" y="472.5" width="1.6" height="1.4" fill="#ffe890"/><rect x="305.0" y="472.5" width="1.6" height="1.4" fill="#ffd060"/><rect x="269.0" y="475.5" width="1.6" height="1.4" fill="#f0b040"/><rect x="272.0" y="475.5" width="1.6" height="1.4" fill="#ffe890"/><rect x="281.0" y="475.5" width="1.6" height="1.4" fill="#ffd060"/><rect x="284.0" y="475.5" width="1.6" height="1.4" fill="#ffe890"/><rect x="287.0" y="475.5" width="1.6" height="1.4" fill="#ffe890"/><rect x="290.0" y="475.5" width="1.6" height="1.4" fill="#ffe890"/><rect x="293.0" y="475.5" width="1.6" height="1.4" fill="#f0b040"/><rect x="296.0" y="475.5" width="1.6" height="1.4" fill="#f0b040"/><rect x="305.0" y="475.5" width="1.6" height="1.4" fill="#f0b040"/><rect x="263.0" y="478.5" width="1.6" height="1.4" fill="#ffe890"/><rect x="269.0" y="478.5" width="1.6" height="1.4" fill="#ffd060"/><rect x="275.0" y="478.5" width="1.6" height="1.4" fill="#f0b040"/><rect x="278.0" y="478.5" width="1.6" height="1.4" fill="#f0b040"/><rect x="293.0" y="478.5" width="1.6" height="1.4" fill="#ffe890"/><rect x="299.0" y="478.5" width="1.6" height="1.4" fill="#ffe890"/><rect x="302.0" y="478.5" width="1.6" height="1.4" fill="#f0b040"/><rect x="305.0" y="478.5" width="1.6" height="1.4" fill="#ffd060"/><rect x="263.0" y="481.5" width="1.6" height="1.4" fill="#ffe890"/><rect x="266.0" y="481.5" width="1.6" height="1.4" fill="#ffd060"/><rect x="269.0" y="481.5" width="1.6" height="1.4" fill="#ffe890"/><rect x="272.0" y="481.5" width="1.6" height="1.4" fill="#ffe890"/><rect x="275.0" y="481.5" width="1.6" height="1.4" fill="#ffe890"/><rect x="287.0" y="481.5" width="1.6" height="1.4" fill="#ffe890"/><rect x="296.0" y="481.5" width="1.6" height="1.4" fill="#ffd060"/><rect x="299.0" y="481.5" width="1.6" height="1.4" fill="#ffd060"/><rect x="302.0" y="481.5" width="1.6" height="1.4" fill="#f0b040"/><rect x="305.0" y="481.5" width="1.6" height="1.4" fill="#ffe890"/><rect x="266.0" y="484.5" width="1.6" height="1.4" fill="#ffe890"/><rect x="269.0" y="484.5" width="1.6" height="1.4" fill="#ffe890"/><rect x="278.0" y="484.5" width="1.6" height="1.4" fill="#ffd060"/><rect x="293.0" y="484.5" width="1.6" height="1.4" fill="#f0b040"/><rect x="299.0" y="484.5" width="1.6" height="1.4" fill="#ffe890"/><rect x="302.0" y="484.5" width="1.6" height="1.4" fill="#ffe890"/><rect x="263.0" y="487.5" width="1.6" height="1.4" fill="#ffd060"/><rect x="269.0" y="487.5" width="1.6" height="1.4" fill="#ffd060"/><rect x="272.0" y="487.5" width="1.6" height="1.4" fill="#ffd060"/><rect x="275.0" y="487.5" width="1.6" height="1.4" fill="#f0b040"/><rect x="278.0" y="487.5" width="1.6" height="1.4" fill="#ffd060"/><rect x="287.0" y="487.5" width="1.6" height="1.4" fill="#ffd060"/><rect x="293.0" y="487.5" width="1.6" height="1.4" fill="#ffe890"/><rect x="302.0" y="487.5" width="1.6" height="1.4" fill="#ffd060"/><rect x="266.0" y="490.5" width="1.6" height="1.4" fill="#ffe890"/><rect x="269.0" y="490.5" width="1.6" height="1.4" fill="#ffd060"/><rect x="272.0" y="490.5" width="1.6" height="1.4" fill="#ffe890"/><rect x="278.0" y="490.5" width="1.6" height="1.4" fill="#f0b040"/><rect x="281.0" y="490.5" width="1.6" height="1.4" fill="#ffd060"/><rect x="284.0" y="490.5" width="1.6" height="1.4" fill="#f0b040"/><rect x="287.0" y="490.5" width="1.6" height="1.4" fill="#f0b040"/><rect x="293.0" y="490.5" width="1.6" height="1.4" fill="#f0b040"/><rect x="296.0" y="490.5" width="1.6" height="1.4" fill="#f0b040"/><rect x="305.0" y="490.5" width="1.6" height="1.4" fill="#ffe890"/><rect x="266.0" y="493.5" width="1.6" height="1.4" fill="#ffd060"/><rect x="275.0" y="493.5" width="1.6" height="1.4" fill="#ffd060"/><rect x="287.0" y="493.5" width="1.6" height="1.4" fill="#ffd060"/><rect x="296.0" y="493.5" width="1.6" height="1.4" fill="#f0b040"/><rect x="299.0" y="493.5" width="1.6" height="1.4" fill="#f0b040"/><rect x="302.0" y="493.5" width="1.6" height="1.4" fill="#ffd060"/><rect x="263.0" y="496.5" width="1.6" height="1.4" fill="#ffd060"/><rect x="272.0" y="496.5" width="1.6" height="1.4" fill="#f0b040"/><rect x="281.0" y="496.5" width="1.6" height="1.4" fill="#ffd060"/><rect x="284.0" y="496.5" width="1.6" height="1.4" fill="#ffe890"/><rect x="287.0" y="496.5" width="1.6" height="1.4" fill="#ffd060"/><rect x="290.0" y="496.5" width="1.6" height="1.4" fill="#f0b040"/><rect x="296.0" y="496.5" width="1.6" height="1.4" fill="#f0b040"/><rect x="299.0" y="496.5" width="1.6" height="1.4" fill="#f0b040"/><rect x="302.0" y="496.5" width="1.6" height="1.4" fill="#f0b040"/><rect x="305.0" y="496.5" width="1.6" height="1.4" fill="#ffe890"/><rect x="269.0" y="499.5" width="1.6" height="1.4" fill="#ffd060"/><rect x="272.0" y="499.5" width="1.6" height="1.4" fill="#f0b040"/><rect x="275.0" y="499.5" width="1.6" height="1.4" fill="#f0b040"/><rect x="278.0" y="499.5" width="1.6" height="1.4" fill="#ffe890"/><rect x="284.0" y="499.5" width="1.6" height="1.4" fill="#ffd060"/><rect x="287.0" y="499.5" width="1.6" height="1.4" fill="#ffd060"/><rect x="290.0" y="499.5" width="1.6" height="1.4" fill="#f0b040"/><rect x="299.0" y="499.5" width="1.6" height="1.4" fill="#f0b040"/><rect x="263.0" y="502.5" width="1.6" height="1.4" fill="#f0b040"/><rect x="269.0" y="502.5" width="1.6" height="1.4" fill="#f0b040"/><rect x="281.0" y="502.5" width="1.6" height="1.4" fill="#ffd060"/><rect x="287.0" y="502.5" width="1.6" height="1.4" fill="#ffe890"/><rect x="290.0" y="502.5" width="1.6" height="1.4" fill="#f0b040"/><rect x="293.0" y="502.5" width="1.6" height="1.4" fill="#f0b040"/><rect x="296.0" y="502.5" width="1.6" height="1.4" fill="#f0b040"/><rect x="299.0" y="502.5" width="1.6" height="1.4" fill="#ffd060"/><rect x="302.0" y="502.5" width="1.6" height="1.4" fill="#f0b040"/><rect x="305.0" y="502.5" width="1.6" height="1.4" fill="#ffe890"/><rect x="278.0" y="505.5" width="1.6" height="1.4" fill="#ffd060"/><rect x="284.0" y="505.5" width="1.6" height="1.4" fill="#ffe890"/><rect x="296.0" y="505.5" width="1.6" height="1.4" fill="#ffd060"/><rect x="299.0" y="505.5" width="1.6" height="1.4" fill="#f0b040"/><rect x="302.0" y="505.5" width="1.6" height="1.4" fill="#ffd060"/><rect x="305.0" y="505.5" width="1.6" height="1.4" fill="#f0b040"/><rect x="266.0" y="508.5" width="1.6" height="1.4" fill="#ffd060"/><rect x="272.0" y="508.5" width="1.6" height="1.4" fill="#ffd060"/><rect x="275.0" y="508.5" width="1.6" height="1.4" fill="#ffd060"/><rect x="290.0" y="508.5" width="1.6" height="1.4" fill="#f0b040"/><rect x="299.0" y="508.5" width="1.6" height="1.4" fill="#ffe890"/><rect x="302.0" y="508.5" width="1.6" height="1.4" fill="#f0b040"/><rect x="266.0" y="511.5" width="1.6" height="1.4" fill="#f0b040"/><rect x="275.0" y="511.5" width="1.6" height="1.4" fill="#f0b040"/><rect x="281.0" y="511.5" width="1.6" height="1.4" fill="#ffe890"/><rect x="284.0" y="511.5" width="1.6" height="1.4" fill="#ffd060"/><rect x="287.0" y="511.5" width="1.6" height="1.4" fill="#ffe890"/><rect x="290.0" y="511.5" width="1.6" height="1.4" fill="#ffd060"/><rect x="293.0" y="511.5" width="1.6" height="1.4" fill="#ffd060"/><rect x="305.0" y="511.5" width="1.6" height="1.4" fill="#f0b040"/><rect x="266.0" y="514.5" width="1.6" height="1.4" fill="#ffe890"/><rect x="275.0" y="514.5" width="1.6" height="1.4" fill="#ffd060"/><rect x="278.0" y="514.5" width="1.6" height="1.4" fill="#ffe890"/><rect x="281.0" y="514.5" width="1.6" height="1.4" fill="#f0b040"/><rect x="287.0" y="514.5" width="1.6" height="1.4" fill="#ffe890"/><rect x="293.0" y="514.5" width="1.6" height="1.4" fill="#ffe890"/><rect x="296.0" y="514.5" width="1.6" height="1.4" fill="#ffe890"/><rect x="299.0" y="514.5" width="1.6" height="1.4" fill="#ffe890"/><rect x="302.0" y="514.5" width="1.6" height="1.4" fill="#f0b040"/><rect x="305.0" y="514.5" width="1.6" height="1.4" fill="#f0b040"/><rect x="263.0" y="517.5" width="1.6" height="1.4" fill="#ffe890"/><rect x="269.0" y="517.5" width="1.6" height="1.4" fill="#ffd060"/><rect x="272.0" y="517.5" width="1.6" height="1.4" fill="#ffd060"/><rect x="278.0" y="517.5" width="1.6" height="1.4" fill="#ffe890"/><rect x="281.0" y="517.5" width="1.6" height="1.4" fill="#ffd060"/><rect x="284.0" y="517.5" width="1.6" height="1.4" fill="#ffd060"/><rect x="299.0" y="517.5" width="1.6" height="1.4" fill="#f0b040"/><rect x="266.0" y="520.5" width="1.6" height="1.4" fill="#ffd060"/><rect x="272.0" y="520.5" width="1.6" height="1.4" fill="#ffd060"/><rect x="275.0" y="520.5" width="1.6" height="1.4" fill="#ffd060"/><rect x="284.0" y="520.5" width="1.6" height="1.4" fill="#ffd060"/><rect x="287.0" y="520.5" width="1.6" height="1.4" fill="#ffd060"/><rect x="290.0" y="520.5" width="1.6" height="1.4" fill="#ffe890"/><rect x="296.0" y="520.5" width="1.6" height="1.4" fill="#ffe890"/><rect x="302.0" y="520.5" width="1.6" height="1.4" fill="#f0b040"/><rect x="305.0" y="520.5" width="1.6" height="1.4" fill="#ffd060"/><rect x="266.0" y="523.5" width="1.6" height="1.4" fill="#ffd060"/><rect x="269.0" y="523.5" width="1.6" height="1.4" fill="#ffe890"/><rect x="278.0" y="523.5" width="1.6" height="1.4" fill="#ffe890"/><rect x="284.0" y="523.5" width="1.6" height="1.4" fill="#ffe890"/><rect x="293.0" y="523.5" width="1.6" height="1.4" fill="#ffd060"/><rect x="302.0" y="523.5" width="1.6" height="1.4" fill="#ffe890"/><rect x="305.0" y="523.5" width="1.6" height="1.4" fill="#ffe890"/><rect x="263.0" y="526.5" width="1.6" height="1.4" fill="#f0b040"/><rect x="266.0" y="526.5" width="1.6" height="1.4" fill="#ffe890"/><rect x="278.0" y="526.5" width="1.6" height="1.4" fill="#ffd060"/><rect x="284.0" y="526.5" width="1.6" height="1.4" fill="#f0b040"/><rect x="290.0" y="526.5" width="1.6" height="1.4" fill="#ffe890"/><rect x="299.0" y="526.5" width="1.6" height="1.4" fill="#f0b040"/><rect x="305.0" y="526.5" width="1.6" height="1.4" fill="#ffd060"/><rect x="263.0" y="529.5" width="1.6" height="1.4" fill="#f0b040"/><rect x="275.0" y="529.5" width="1.6" height="1.4" fill="#ffd060"/><rect x="281.0" y="529.5" width="1.6" height="1.4" fill="#ffd060"/><rect x="284.0" y="529.5" width="1.6" height="1.4" fill="#ffe890"/><rect x="287.0" y="529.5" width="1.6" height="1.4" fill="#ffe890"/><rect x="299.0" y="529.5" width="1.6" height="1.4" fill="#ffe890"/><rect x="302.0" y="529.5" width="1.6" height="1.4" fill="#ffd060"/><rect x="305.0" y="529.5" width="1.6" height="1.4" fill="#ffe890"/><rect x="263.0" y="532.5" width="1.6" height="1.4" fill="#ffe890"/><rect x="269.0" y="532.5" width="1.6" height="1.4" fill="#f0b040"/><rect x="275.0" y="532.5" width="1.6" height="1.4" fill="#ffd060"/><rect x="278.0" y="532.5" width="1.6" height="1.4" fill="#f0b040"/><rect x="281.0" y="532.5" width="1.6" height="1.4" fill="#ffd060"/><rect x="284.0" y="532.5" width="1.6" height="1.4" fill="#f0b040"/><rect x="287.0" y="532.5" width="1.6" height="1.4" fill="#f0b040"/><rect x="296.0" y="532.5" width="1.6" height="1.4" fill="#f0b040"/><rect x="266.0" y="535.5" width="1.6" height="1.4" fill="#ffe890"/><rect x="275.0" y="535.5" width="1.6" height="1.4" fill="#f0b040"/><rect x="290.0" y="535.5" width="1.6" height="1.4" fill="#f0b040"/><rect x="302.0" y="535.5" width="1.6" height="1.4" fill="#f0b040"/><rect x="272.0" y="538.5" width="1.6" height="1.4" fill="#ffd060"/><rect x="275.0" y="538.5" width="1.6" height="1.4" fill="#f0b040"/><rect x="278.0" y="538.5" width="1.6" height="1.4" fill="#ffd060"/><rect x="281.0" y="538.5" width="1.6" height="1.4" fill="#ffe890"/><rect x="296.0" y="538.5" width="1.6" height="1.4" fill="#ffd060"/><rect x="299.0" y="538.5" width="1.6" height="1.4" fill="#ffd060"/>
<path d="M312 450l6-5 8 0 5 5z" fill="#2e3464"/><rect x="308" y="450" width="23" height="90" fill="#2e3464"/><rect x="309.0" y="451.5" width="1.6" height="1.4" fill="#f0b040"/><rect x="312.0" y="451.5" width="1.6" height="1.4" fill="#f0b040"/><rect x="318.0" y="451.5" width="1.6" height="1.4" fill="#ffd060"/><rect x="324.0" y="451.5" width="1.6" height="1.4" fill="#ffd060"/><rect x="327.0" y="451.5" width="1.6" height="1.4" fill="#f0b040"/><rect x="312.0" y="454.5" width="1.6" height="1.4" fill="#ffe890"/><rect x="315.0" y="454.5" width="1.6" height="1.4" fill="#f0b040"/><rect x="318.0" y="454.5" width="1.6" height="1.4" fill="#ffd060"/><rect x="327.0" y="454.5" width="1.6" height="1.4" fill="#ffd060"/><rect x="309.0" y="457.5" width="1.6" height="1.4" fill="#f0b040"/><rect x="315.0" y="457.5" width="1.6" height="1.4" fill="#f0b040"/><rect x="318.0" y="457.5" width="1.6" height="1.4" fill="#ffe890"/><rect x="321.0" y="457.5" width="1.6" height="1.4" fill="#ffe890"/><rect x="327.0" y="457.5" width="1.6" height="1.4" fill="#ffd060"/><rect x="312.0" y="460.5" width="1.6" height="1.4" fill="#f0b040"/><rect x="315.0" y="460.5" width="1.6" height="1.4" fill="#ffe890"/><rect x="318.0" y="460.5" width="1.6" height="1.4" fill="#ffd060"/><rect x="324.0" y="460.5" width="1.6" height="1.4" fill="#ffe890"/><rect x="312.0" y="463.5" width="1.6" height="1.4" fill="#ffe890"/><rect x="315.0" y="463.5" width="1.6" height="1.4" fill="#f0b040"/><rect x="321.0" y="463.5" width="1.6" height="1.4" fill="#ffe890"/><rect x="324.0" y="463.5" width="1.6" height="1.4" fill="#ffd060"/><rect x="327.0" y="463.5" width="1.6" height="1.4" fill="#ffd060"/><rect x="309.0" y="466.5" width="1.6" height="1.4" fill="#f0b040"/><rect x="312.0" y="466.5" width="1.6" height="1.4" fill="#ffe890"/><rect x="315.0" y="466.5" width="1.6" height="1.4" fill="#f0b040"/><rect x="318.0" y="466.5" width="1.6" height="1.4" fill="#ffd060"/><rect x="324.0" y="466.5" width="1.6" height="1.4" fill="#ffe890"/><rect x="327.0" y="466.5" width="1.6" height="1.4" fill="#ffd060"/><rect x="309.0" y="469.5" width="1.6" height="1.4" fill="#ffe890"/><rect x="315.0" y="469.5" width="1.6" height="1.4" fill="#f0b040"/><rect x="318.0" y="469.5" width="1.6" height="1.4" fill="#ffe890"/><rect x="321.0" y="469.5" width="1.6" height="1.4" fill="#ffd060"/><rect x="327.0" y="469.5" width="1.6" height="1.4" fill="#ffe890"/><rect x="312.0" y="472.5" width="1.6" height="1.4" fill="#ffd060"/><rect x="321.0" y="472.5" width="1.6" height="1.4" fill="#ffe890"/><rect x="324.0" y="472.5" width="1.6" height="1.4" fill="#ffe890"/><rect x="309.0" y="475.5" width="1.6" height="1.4" fill="#ffe890"/><rect x="321.0" y="475.5" width="1.6" height="1.4" fill="#ffd060"/><rect x="327.0" y="475.5" width="1.6" height="1.4" fill="#ffd060"/><rect x="309.0" y="478.5" width="1.6" height="1.4" fill="#ffe890"/><rect x="312.0" y="478.5" width="1.6" height="1.4" fill="#ffe890"/><rect x="315.0" y="478.5" width="1.6" height="1.4" fill="#ffe890"/><rect x="321.0" y="478.5" width="1.6" height="1.4" fill="#ffd060"/><rect x="315.0" y="481.5" width="1.6" height="1.4" fill="#f0b040"/><rect x="318.0" y="481.5" width="1.6" height="1.4" fill="#f0b040"/><rect x="321.0" y="481.5" width="1.6" height="1.4" fill="#f0b040"/><rect x="309.0" y="484.5" width="1.6" height="1.4" fill="#ffd060"/><rect x="315.0" y="484.5" width="1.6" height="1.4" fill="#ffd060"/><rect x="318.0" y="484.5" width="1.6" height="1.4" fill="#ffe890"/><rect x="321.0" y="484.5" width="1.6" height="1.4" fill="#ffe890"/><rect x="309.0" y="487.5" width="1.6" height="1.4" fill="#f0b040"/><rect x="312.0" y="487.5" width="1.6" height="1.4" fill="#ffe890"/><rect x="315.0" y="487.5" width="1.6" height="1.4" fill="#ffe890"/><rect x="318.0" y="487.5" width="1.6" height="1.4" fill="#f0b040"/><rect x="321.0" y="487.5" width="1.6" height="1.4" fill="#ffd060"/><rect x="324.0" y="487.5" width="1.6" height="1.4" fill="#ffe890"/><rect x="327.0" y="487.5" width="1.6" height="1.4" fill="#ffe890"/><rect x="315.0" y="490.5" width="1.6" height="1.4" fill="#ffd060"/><rect x="318.0" y="490.5" width="1.6" height="1.4" fill="#ffd060"/><rect x="321.0" y="490.5" width="1.6" height="1.4" fill="#ffe890"/><rect x="324.0" y="490.5" width="1.6" height="1.4" fill="#ffe890"/><rect x="327.0" y="490.5" width="1.6" height="1.4" fill="#ffe890"/><rect x="312.0" y="493.5" width="1.6" height="1.4" fill="#ffd060"/><rect x="318.0" y="493.5" width="1.6" height="1.4" fill="#ffe890"/><rect x="324.0" y="493.5" width="1.6" height="1.4" fill="#ffe890"/><rect x="327.0" y="493.5" width="1.6" height="1.4" fill="#ffd060"/><rect x="309.0" y="496.5" width="1.6" height="1.4" fill="#f0b040"/><rect x="315.0" y="496.5" width="1.6" height="1.4" fill="#f0b040"/><rect x="318.0" y="496.5" width="1.6" height="1.4" fill="#ffd060"/><rect x="321.0" y="496.5" width="1.6" height="1.4" fill="#ffd060"/><rect x="324.0" y="496.5" width="1.6" height="1.4" fill="#f0b040"/><rect x="327.0" y="496.5" width="1.6" height="1.4" fill="#ffe890"/><rect x="315.0" y="499.5" width="1.6" height="1.4" fill="#ffd060"/><rect x="318.0" y="499.5" width="1.6" height="1.4" fill="#ffe890"/><rect x="324.0" y="499.5" width="1.6" height="1.4" fill="#ffd060"/><rect x="327.0" y="499.5" width="1.6" height="1.4" fill="#f0b040"/><rect x="315.0" y="502.5" width="1.6" height="1.4" fill="#ffd060"/><rect x="318.0" y="502.5" width="1.6" height="1.4" fill="#ffd060"/><rect x="321.0" y="502.5" width="1.6" height="1.4" fill="#f0b040"/><rect x="324.0" y="502.5" width="1.6" height="1.4" fill="#f0b040"/><rect x="315.0" y="505.5" width="1.6" height="1.4" fill="#ffd060"/><rect x="318.0" y="505.5" width="1.6" height="1.4" fill="#ffd060"/><rect x="321.0" y="505.5" width="1.6" height="1.4" fill="#ffd060"/><rect x="327.0" y="505.5" width="1.6" height="1.4" fill="#ffd060"/><rect x="312.0" y="508.5" width="1.6" height="1.4" fill="#ffe890"/><rect x="318.0" y="508.5" width="1.6" height="1.4" fill="#ffd060"/><rect x="321.0" y="508.5" width="1.6" height="1.4" fill="#f0b040"/><rect x="324.0" y="508.5" width="1.6" height="1.4" fill="#ffe890"/><rect x="327.0" y="508.5" width="1.6" height="1.4" fill="#f0b040"/><rect x="309.0" y="511.5" width="1.6" height="1.4" fill="#f0b040"/><rect x="312.0" y="511.5" width="1.6" height="1.4" fill="#ffe890"/><rect x="315.0" y="511.5" width="1.6" height="1.4" fill="#ffe890"/><rect x="324.0" y="511.5" width="1.6" height="1.4" fill="#ffd060"/><rect x="327.0" y="511.5" width="1.6" height="1.4" fill="#ffd060"/><rect x="315.0" y="514.5" width="1.6" height="1.4" fill="#ffd060"/><rect x="318.0" y="514.5" width="1.6" height="1.4" fill="#f0b040"/><rect x="324.0" y="514.5" width="1.6" height="1.4" fill="#ffd060"/><rect x="312.0" y="517.5" width="1.6" height="1.4" fill="#ffd060"/><rect x="321.0" y="517.5" width="1.6" height="1.4" fill="#ffe890"/><rect x="324.0" y="517.5" width="1.6" height="1.4" fill="#ffe890"/><rect x="309.0" y="520.5" width="1.6" height="1.4" fill="#ffd060"/><rect x="312.0" y="520.5" width="1.6" height="1.4" fill="#ffd060"/><rect x="315.0" y="520.5" width="1.6" height="1.4" fill="#ffd060"/><rect x="318.0" y="520.5" width="1.6" height="1.4" fill="#ffd060"/><rect x="321.0" y="520.5" width="1.6" height="1.4" fill="#ffe890"/><rect x="324.0" y="520.5" width="1.6" height="1.4" fill="#f0b040"/><rect x="327.0" y="520.5" width="1.6" height="1.4" fill="#ffd060"/><rect x="312.0" y="523.5" width="1.6" height="1.4" fill="#f0b040"/><rect x="315.0" y="523.5" width="1.6" height="1.4" fill="#f0b040"/><rect x="318.0" y="523.5" width="1.6" height="1.4" fill="#ffe890"/><rect x="321.0" y="523.5" width="1.6" height="1.4" fill="#ffd060"/><rect x="327.0" y="523.5" width="1.6" height="1.4" fill="#ffd060"/><rect x="312.0" y="526.5" width="1.6" height="1.4" fill="#ffe890"/><rect x="309.0" y="529.5" width="1.6" height="1.4" fill="#ffd060"/><rect x="315.0" y="529.5" width="1.6" height="1.4" fill="#ffe890"/><rect x="318.0" y="529.5" width="1.6" height="1.4" fill="#f0b040"/><rect x="309.0" y="532.5" width="1.6" height="1.4" fill="#ffd060"/><rect x="312.0" y="532.5" width="1.6" height="1.4" fill="#ffe890"/><rect x="315.0" y="532.5" width="1.6" height="1.4" fill="#ffe890"/><rect x="321.0" y="532.5" width="1.6" height="1.4" fill="#ffd060"/><rect x="324.0" y="532.5" width="1.6" height="1.4" fill="#ffe890"/><rect x="309.0" y="535.5" width="1.6" height="1.4" fill="#ffd060"/><rect x="315.0" y="535.5" width="1.6" height="1.4" fill="#f0b040"/><rect x="321.0" y="535.5" width="1.6" height="1.4" fill="#ffe890"/><rect x="327.0" y="535.5" width="1.6" height="1.4" fill="#f0b040"/><rect x="309.0" y="538.5" width="1.6" height="1.4" fill="#f0b040"/><rect x="315.0" y="538.5" width="1.6" height="1.4" fill="#ffd060"/><rect x="318.0" y="538.5" width="1.6" height="1.4" fill="#ffd060"/><rect x="321.0" y="538.5" width="1.6" height="1.4" fill="#f0b040"/><rect x="324.0" y="538.5" width="1.6" height="1.4" fill="#f0b040"/><rect x="327.0" y="538.5" width="1.6" height="1.4" fill="#ffe890"/>
<rect x="331" y="470" width="8" height="70" fill="#4a3a6a"/><rect x="332.0" y="471.5" width="1.6" height="1.4" fill="#ff9a40"/><rect x="335.0" y="471.5" width="1.6" height="1.4" fill="#ff9a40"/><rect x="335.0" y="474.5" width="1.6" height="1.4" fill="#ffd870"/><rect x="332.0" y="477.5" width="1.6" height="1.4" fill="#ff9a40"/><rect x="335.0" y="483.5" width="1.6" height="1.4" fill="#f5c850"/><rect x="332.0" y="486.5" width="1.6" height="1.4" fill="#ff9a40"/><rect x="335.0" y="489.5" width="1.6" height="1.4" fill="#ffd870"/><rect x="332.0" y="495.5" width="1.6" height="1.4" fill="#ffd870"/><rect x="335.0" y="495.5" width="1.6" height="1.4" fill="#ff9a40"/><rect x="332.0" y="498.5" width="1.6" height="1.4" fill="#ff9a40"/><rect x="335.0" y="501.5" width="1.6" height="1.4" fill="#ffd870"/><rect x="332.0" y="510.5" width="1.6" height="1.4" fill="#f5c850"/><rect x="335.0" y="510.5" width="1.6" height="1.4" fill="#f5c850"/><rect x="335.0" y="516.5" width="1.6" height="1.4" fill="#ffd870"/><rect x="332.0" y="522.5" width="1.6" height="1.4" fill="#f5c850"/><rect x="335.0" y="522.5" width="1.6" height="1.4" fill="#ffd870"/><rect x="335.0" y="528.5" width="1.6" height="1.4" fill="#ffd870"/><rect x="332.0" y="534.5" width="1.6" height="1.4" fill="#ff9a40"/><rect x="335.0" y="537.5" width="1.6" height="1.4" fill="#ffd870"/>
<path d="M379 455l5-16 5 16z" fill="#2a8a9a"/>
<rect x="378" y="455" width="12" height="85" fill="#3a3058"/><rect x="379.0" y="456.5" width="1.6" height="1.4" fill="#ff9a40"/><rect x="382.0" y="456.5" width="1.6" height="1.4" fill="#ffd870"/><rect x="388.0" y="456.5" width="1.6" height="1.4" fill="#f5c850"/><rect x="379.0" y="459.5" width="1.6" height="1.4" fill="#f5c850"/><rect x="382.0" y="459.5" width="1.6" height="1.4" fill="#ff9a40"/><rect x="385.0" y="459.5" width="1.6" height="1.4" fill="#f5c850"/><rect x="385.0" y="462.5" width="1.6" height="1.4" fill="#f5c850"/><rect x="382.0" y="465.5" width="1.6" height="1.4" fill="#ffd870"/><rect x="388.0" y="465.5" width="1.6" height="1.4" fill="#ffd870"/><rect x="382.0" y="468.5" width="1.6" height="1.4" fill="#ffd870"/><rect x="385.0" y="468.5" width="1.6" height="1.4" fill="#f5c850"/><rect x="388.0" y="468.5" width="1.6" height="1.4" fill="#ff9a40"/><rect x="379.0" y="471.5" width="1.6" height="1.4" fill="#f5c850"/><rect x="379.0" y="474.5" width="1.6" height="1.4" fill="#ff9a40"/><rect x="385.0" y="474.5" width="1.6" height="1.4" fill="#ff9a40"/><rect x="382.0" y="477.5" width="1.6" height="1.4" fill="#ffd870"/><rect x="385.0" y="477.5" width="1.6" height="1.4" fill="#f5c850"/><rect x="379.0" y="480.5" width="1.6" height="1.4" fill="#ff9a40"/><rect x="385.0" y="480.5" width="1.6" height="1.4" fill="#f5c850"/><rect x="388.0" y="483.5" width="1.6" height="1.4" fill="#f5c850"/><rect x="385.0" y="486.5" width="1.6" height="1.4" fill="#f5c850"/><rect x="382.0" y="489.5" width="1.6" height="1.4" fill="#ff9a40"/><rect x="385.0" y="489.5" width="1.6" height="1.4" fill="#f5c850"/><rect x="379.0" y="492.5" width="1.6" height="1.4" fill="#ffd870"/><rect x="388.0" y="492.5" width="1.6" height="1.4" fill="#ff9a40"/><rect x="385.0" y="498.5" width="1.6" height="1.4" fill="#ff9a40"/><rect x="385.0" y="501.5" width="1.6" height="1.4" fill="#f5c850"/><rect x="388.0" y="504.5" width="1.6" height="1.4" fill="#f5c850"/><rect x="379.0" y="507.5" width="1.6" height="1.4" fill="#f5c850"/><rect x="388.0" y="507.5" width="1.6" height="1.4" fill="#ff9a40"/><rect x="385.0" y="510.5" width="1.6" height="1.4" fill="#ffd870"/><rect x="388.0" y="510.5" width="1.6" height="1.4" fill="#ff9a40"/><rect x="379.0" y="513.5" width="1.6" height="1.4" fill="#f5c850"/><rect x="382.0" y="513.5" width="1.6" height="1.4" fill="#ffd870"/><rect x="388.0" y="516.5" width="1.6" height="1.4" fill="#ffd870"/><rect x="388.0" y="519.5" width="1.6" height="1.4" fill="#ff9a40"/><rect x="385.0" y="522.5" width="1.6" height="1.4" fill="#f5c850"/><rect x="382.0" y="525.5" width="1.6" height="1.4" fill="#ffd870"/><rect x="385.0" y="525.5" width="1.6" height="1.4" fill="#f5c850"/><rect x="388.0" y="525.5" width="1.6" height="1.4" fill="#ff9a40"/><rect x="379.0" y="528.5" width="1.6" height="1.4" fill="#ffd870"/><rect x="382.0" y="528.5" width="1.6" height="1.4" fill="#f5c850"/><rect x="379.0" y="531.5" width="1.6" height="1.4" fill="#ff9a40"/><rect x="388.0" y="537.5" width="1.6" height="1.4" fill="#ffd870"/>
<path d="M371 442l3-10 3 10z" fill="#6a3a6a"/>
<rect x="371" y="442" width="7" height="98" fill="#4a3a60"/><rect x="375.0" y="446.5" width="1.6" height="1.4" fill="#ff9a40"/><rect x="372.0" y="461.5" width="1.6" height="1.4" fill="#ffd870"/><rect x="372.0" y="464.5" width="1.6" height="1.4" fill="#ffd870"/><rect x="375.0" y="467.5" width="1.6" height="1.4" fill="#f5c850"/><rect x="372.0" y="470.5" width="1.6" height="1.4" fill="#ff9a40"/><rect x="375.0" y="473.5" width="1.6" height="1.4" fill="#ff9a40"/><rect x="375.0" y="479.5" width="1.6" height="1.4" fill="#f5c850"/><rect x="375.0" y="485.5" width="1.6" height="1.4" fill="#ffd870"/><rect x="372.0" y="518.5" width="1.6" height="1.4" fill="#ffd870"/><rect x="375.0" y="518.5" width="1.6" height="1.4" fill="#ffd870"/><rect x="372.0" y="524.5" width="1.6" height="1.4" fill="#ffd870"/><rect x="375.0" y="524.5" width="1.6" height="1.4" fill="#ff9a40"/><rect x="372.0" y="527.5" width="1.6" height="1.4" fill="#ffd870"/>
<rect x="393" y="469" width="17" height="71" fill="#3a2a50"/><rect x="400.0" y="470.5" width="1.6" height="1.4" fill="#ffd870"/><rect x="394.0" y="473.5" width="1.6" height="1.4" fill="#f5c850"/><rect x="397.0" y="473.5" width="1.6" height="1.4" fill="#f5c850"/><rect x="406.0" y="473.5" width="1.6" height="1.4" fill="#ff9a40"/><rect x="394.0" y="476.5" width="1.6" height="1.4" fill="#ff9a40"/><rect x="400.0" y="479.5" width="1.6" height="1.4" fill="#ffd870"/><rect x="406.0" y="479.5" width="1.6" height="1.4" fill="#ff9a40"/><rect x="394.0" y="482.5" width="1.6" height="1.4" fill="#f5c850"/><rect x="397.0" y="482.5" width="1.6" height="1.4" fill="#f5c850"/><rect x="403.0" y="482.5" width="1.6" height="1.4" fill="#f5c850"/><rect x="406.0" y="482.5" width="1.6" height="1.4" fill="#ffd870"/><rect x="394.0" y="485.5" width="1.6" height="1.4" fill="#ff9a40"/><rect x="397.0" y="485.5" width="1.6" height="1.4" fill="#f5c850"/><rect x="400.0" y="485.5" width="1.6" height="1.4" fill="#ffd870"/><rect x="406.0" y="485.5" width="1.6" height="1.4" fill="#ff9a40"/><rect x="397.0" y="488.5" width="1.6" height="1.4" fill="#f5c850"/><rect x="403.0" y="488.5" width="1.6" height="1.4" fill="#f5c850"/><rect x="406.0" y="488.5" width="1.6" height="1.4" fill="#f5c850"/><rect x="403.0" y="491.5" width="1.6" height="1.4" fill="#ffd870"/><rect x="394.0" y="494.5" width="1.6" height="1.4" fill="#ff9a40"/><rect x="397.0" y="497.5" width="1.6" height="1.4" fill="#f5c850"/><rect x="403.0" y="497.5" width="1.6" height="1.4" fill="#ff9a40"/><rect x="406.0" y="497.5" width="1.6" height="1.4" fill="#f5c850"/><rect x="394.0" y="500.5" width="1.6" height="1.4" fill="#f5c850"/><rect x="400.0" y="500.5" width="1.6" height="1.4" fill="#ff9a40"/><rect x="394.0" y="503.5" width="1.6" height="1.4" fill="#f5c850"/><rect x="406.0" y="503.5" width="1.6" height="1.4" fill="#ff9a40"/><rect x="394.0" y="506.5" width="1.6" height="1.4" fill="#ffd870"/><rect x="397.0" y="506.5" width="1.6" height="1.4" fill="#ff9a40"/><rect x="400.0" y="506.5" width="1.6" height="1.4" fill="#ff9a40"/><rect x="394.0" y="509.5" width="1.6" height="1.4" fill="#ffd870"/><rect x="400.0" y="509.5" width="1.6" height="1.4" fill="#ff9a40"/><rect x="406.0" y="509.5" width="1.6" height="1.4" fill="#f5c850"/><rect x="394.0" y="512.5" width="1.6" height="1.4" fill="#ff9a40"/><rect x="397.0" y="512.5" width="1.6" height="1.4" fill="#ffd870"/><rect x="394.0" y="515.5" width="1.6" height="1.4" fill="#f5c850"/><rect x="397.0" y="515.5" width="1.6" height="1.4" fill="#ff9a40"/><rect x="397.0" y="518.5" width="1.6" height="1.4" fill="#f5c850"/><rect x="400.0" y="518.5" width="1.6" height="1.4" fill="#ff9a40"/><rect x="403.0" y="518.5" width="1.6" height="1.4" fill="#ffd870"/><rect x="397.0" y="521.5" width="1.6" height="1.4" fill="#f5c850"/><rect x="403.0" y="521.5" width="1.6" height="1.4" fill="#ffd870"/><rect x="406.0" y="521.5" width="1.6" height="1.4" fill="#f5c850"/><rect x="394.0" y="524.5" width="1.6" height="1.4" fill="#ff9a40"/><rect x="394.0" y="527.5" width="1.6" height="1.4" fill="#ff9a40"/><rect x="403.0" y="527.5" width="1.6" height="1.4" fill="#ff9a40"/><rect x="406.0" y="527.5" width="1.6" height="1.4" fill="#ffd870"/><rect x="397.0" y="530.5" width="1.6" height="1.4" fill="#ff9a40"/><rect x="400.0" y="530.5" width="1.6" height="1.4" fill="#f5c850"/><rect x="403.0" y="530.5" width="1.6" height="1.4" fill="#f5c850"/><rect x="406.0" y="530.5" width="1.6" height="1.4" fill="#ff9a40"/><rect x="397.0" y="533.5" width="1.6" height="1.4" fill="#f5c850"/><rect x="403.0" y="533.5" width="1.6" height="1.4" fill="#f5c850"/><rect x="403.0" y="536.5" width="1.6" height="1.4" fill="#ff9a40"/>
<rect x="406" y="452" width="3" height="20" fill="#4a3a5a"/>
<rect x="436" y="461" width="17" height="79" fill="#3a2a48"/><rect x="437.0" y="462.5" width="1.6" height="1.4" fill="#ff9a40"/><rect x="443.0" y="462.5" width="1.6" height="1.4" fill="#ff9a40"/><rect x="449.0" y="462.5" width="1.6" height="1.4" fill="#f5c850"/><rect x="437.0" y="465.5" width="1.6" height="1.4" fill="#f5c850"/><rect x="440.0" y="465.5" width="1.6" height="1.4" fill="#ff9a40"/><rect x="443.0" y="465.5" width="1.6" height="1.4" fill="#ff9a40"/><rect x="449.0" y="465.5" width="1.6" height="1.4" fill="#f5c850"/><rect x="437.0" y="468.5" width="1.6" height="1.4" fill="#ff9a40"/><rect x="440.0" y="468.5" width="1.6" height="1.4" fill="#ffd870"/><rect x="443.0" y="468.5" width="1.6" height="1.4" fill="#ffd870"/><rect x="446.0" y="468.5" width="1.6" height="1.4" fill="#ffd870"/><rect x="437.0" y="471.5" width="1.6" height="1.4" fill="#ffd870"/><rect x="449.0" y="471.5" width="1.6" height="1.4" fill="#ffd870"/><rect x="440.0" y="474.5" width="1.6" height="1.4" fill="#ffd870"/><rect x="443.0" y="474.5" width="1.6" height="1.4" fill="#ff9a40"/><rect x="449.0" y="474.5" width="1.6" height="1.4" fill="#ff9a40"/><rect x="437.0" y="477.5" width="1.6" height="1.4" fill="#ff9a40"/><rect x="440.0" y="477.5" width="1.6" height="1.4" fill="#f5c850"/><rect x="446.0" y="477.5" width="1.6" height="1.4" fill="#ffd870"/><rect x="449.0" y="477.5" width="1.6" height="1.4" fill="#f5c850"/><rect x="437.0" y="480.5" width="1.6" height="1.4" fill="#f5c850"/><rect x="440.0" y="480.5" width="1.6" height="1.4" fill="#ffd870"/><rect x="443.0" y="480.5" width="1.6" height="1.4" fill="#ff9a40"/><rect x="449.0" y="480.5" width="1.6" height="1.4" fill="#ffd870"/><rect x="449.0" y="483.5" width="1.6" height="1.4" fill="#f5c850"/><rect x="440.0" y="486.5" width="1.6" height="1.4" fill="#f5c850"/><rect x="443.0" y="486.5" width="1.6" height="1.4" fill="#ff9a40"/><rect x="449.0" y="486.5" width="1.6" height="1.4" fill="#ff9a40"/><rect x="440.0" y="489.5" width="1.6" height="1.4" fill="#ffd870"/><rect x="443.0" y="489.5" width="1.6" height="1.4" fill="#ffd870"/><rect x="440.0" y="492.5" width="1.6" height="1.4" fill="#ff9a40"/><rect x="443.0" y="492.5" width="1.6" height="1.4" fill="#f5c850"/><rect x="446.0" y="492.5" width="1.6" height="1.4" fill="#ffd870"/><rect x="440.0" y="495.5" width="1.6" height="1.4" fill="#ff9a40"/><rect x="443.0" y="495.5" width="1.6" height="1.4" fill="#ffd870"/><rect x="446.0" y="495.5" width="1.6" height="1.4" fill="#ff9a40"/><rect x="443.0" y="498.5" width="1.6" height="1.4" fill="#ffd870"/><rect x="437.0" y="501.5" width="1.6" height="1.4" fill="#ff9a40"/><rect x="443.0" y="501.5" width="1.6" height="1.4" fill="#ffd870"/><rect x="449.0" y="501.5" width="1.6" height="1.4" fill="#f5c850"/><rect x="437.0" y="504.5" width="1.6" height="1.4" fill="#ffd870"/><rect x="449.0" y="504.5" width="1.6" height="1.4" fill="#ff9a40"/><rect x="440.0" y="510.5" width="1.6" height="1.4" fill="#f5c850"/><rect x="443.0" y="510.5" width="1.6" height="1.4" fill="#f5c850"/><rect x="446.0" y="510.5" width="1.6" height="1.4" fill="#ff9a40"/><rect x="437.0" y="513.5" width="1.6" height="1.4" fill="#ff9a40"/><rect x="440.0" y="513.5" width="1.6" height="1.4" fill="#ffd870"/><rect x="443.0" y="513.5" width="1.6" height="1.4" fill="#f5c850"/><rect x="437.0" y="516.5" width="1.6" height="1.4" fill="#f5c850"/><rect x="440.0" y="516.5" width="1.6" height="1.4" fill="#f5c850"/><rect x="443.0" y="516.5" width="1.6" height="1.4" fill="#ffd870"/><rect x="446.0" y="516.5" width="1.6" height="1.4" fill="#f5c850"/><rect x="449.0" y="516.5" width="1.6" height="1.4" fill="#ffd870"/><rect x="446.0" y="519.5" width="1.6" height="1.4" fill="#f5c850"/><rect x="449.0" y="519.5" width="1.6" height="1.4" fill="#ff9a40"/><rect x="437.0" y="522.5" width="1.6" height="1.4" fill="#ff9a40"/><rect x="440.0" y="522.5" width="1.6" height="1.4" fill="#ffd870"/><rect x="440.0" y="528.5" width="1.6" height="1.4" fill="#f5c850"/><rect x="446.0" y="528.5" width="1.6" height="1.4" fill="#ffd870"/><rect x="449.0" y="528.5" width="1.6" height="1.4" fill="#ff9a40"/><rect x="437.0" y="531.5" width="1.6" height="1.4" fill="#ffd870"/><rect x="440.0" y="531.5" width="1.6" height="1.4" fill="#ffd870"/><rect x="449.0" y="531.5" width="1.6" height="1.4" fill="#ffd870"/><rect x="437.0" y="534.5" width="1.6" height="1.4" fill="#f5c850"/><rect x="443.0" y="534.5" width="1.6" height="1.4" fill="#ff9a40"/><rect x="440.0" y="537.5" width="1.6" height="1.4" fill="#f5c850"/><rect x="443.0" y="537.5" width="1.6" height="1.4" fill="#ffd870"/><rect x="449.0" y="537.5" width="1.6" height="1.4" fill="#ffd870"/>
<rect x="454" y="459" width="29" height="81" fill="#3e2c4e"/><rect x="458.0" y="460.5" width="1.6" height="1.4" fill="#f5c850"/><rect x="464.0" y="460.5" width="1.6" height="1.4" fill="#ff9a40"/><rect x="467.0" y="460.5" width="1.6" height="1.4" fill="#f5c850"/><rect x="458.0" y="463.5" width="1.6" height="1.4" fill="#ffd870"/><rect x="461.0" y="463.5" width="1.6" height="1.4" fill="#ff9a40"/><rect x="464.0" y="463.5" width="1.6" height="1.4" fill="#ff9a40"/><rect x="470.0" y="463.5" width="1.6" height="1.4" fill="#ff9a40"/><rect x="473.0" y="463.5" width="1.6" height="1.4" fill="#f5c850"/><rect x="476.0" y="463.5" width="1.6" height="1.4" fill="#ffd870"/><rect x="479.0" y="463.5" width="1.6" height="1.4" fill="#f5c850"/><rect x="455.0" y="466.5" width="1.6" height="1.4" fill="#ffd870"/><rect x="467.0" y="466.5" width="1.6" height="1.4" fill="#ffd870"/><rect x="479.0" y="466.5" width="1.6" height="1.4" fill="#ffd870"/><rect x="455.0" y="469.5" width="1.6" height="1.4" fill="#f5c850"/><rect x="458.0" y="469.5" width="1.6" height="1.4" fill="#f5c850"/><rect x="467.0" y="469.5" width="1.6" height="1.4" fill="#ff9a40"/><rect x="476.0" y="469.5" width="1.6" height="1.4" fill="#ff9a40"/><rect x="461.0" y="472.5" width="1.6" height="1.4" fill="#ffd870"/><rect x="473.0" y="472.5" width="1.6" height="1.4" fill="#f5c850"/><rect x="476.0" y="472.5" width="1.6" height="1.4" fill="#ffd870"/><rect x="461.0" y="475.5" width="1.6" height="1.4" fill="#ff9a40"/><rect x="467.0" y="475.5" width="1.6" height="1.4" fill="#ff9a40"/><rect x="470.0" y="475.5" width="1.6" height="1.4" fill="#ffd870"/><rect x="473.0" y="475.5" width="1.6" height="1.4" fill="#ff9a40"/><rect x="455.0" y="478.5" width="1.6" height="1.4" fill="#ffd870"/><rect x="461.0" y="478.5" width="1.6" height="1.4" fill="#ff9a40"/><rect x="470.0" y="478.5" width="1.6" height="1.4" fill="#ffd870"/><rect x="476.0" y="478.5" width="1.6" height="1.4" fill="#f5c850"/><rect x="479.0" y="478.5" width="1.6" height="1.4" fill="#f5c850"/><rect x="458.0" y="481.5" width="1.6" height="1.4" fill="#f5c850"/><rect x="467.0" y="481.5" width="1.6" height="1.4" fill="#ffd870"/><rect x="470.0" y="481.5" width="1.6" height="1.4" fill="#f5c850"/><rect x="473.0" y="481.5" width="1.6" height="1.4" fill="#ffd870"/><rect x="479.0" y="481.5" width="1.6" height="1.4" fill="#ff9a40"/><rect x="473.0" y="484.5" width="1.6" height="1.4" fill="#ff9a40"/><rect x="476.0" y="484.5" width="1.6" height="1.4" fill="#f5c850"/><rect x="455.0" y="487.5" width="1.6" height="1.4" fill="#f5c850"/><rect x="461.0" y="487.5" width="1.6" height="1.4" fill="#f5c850"/><rect x="467.0" y="487.5" width="1.6" height="1.4" fill="#ff9a40"/><rect x="470.0" y="487.5" width="1.6" height="1.4" fill="#ffd870"/><rect x="479.0" y="487.5" width="1.6" height="1.4" fill="#f5c850"/><rect x="461.0" y="490.5" width="1.6" height="1.4" fill="#ffd870"/><rect x="464.0" y="490.5" width="1.6" height="1.4" fill="#ff9a40"/><rect x="467.0" y="490.5" width="1.6" height="1.4" fill="#ffd870"/><rect x="473.0" y="490.5" width="1.6" height="1.4" fill="#ffd870"/><rect x="455.0" y="493.5" width="1.6" height="1.4" fill="#ffd870"/><rect x="461.0" y="493.5" width="1.6" height="1.4" fill="#ff9a40"/><rect x="464.0" y="493.5" width="1.6" height="1.4" fill="#ff9a40"/><rect x="470.0" y="493.5" width="1.6" height="1.4" fill="#f5c850"/><rect x="476.0" y="493.5" width="1.6" height="1.4" fill="#f5c850"/><rect x="479.0" y="493.5" width="1.6" height="1.4" fill="#ff9a40"/><rect x="455.0" y="496.5" width="1.6" height="1.4" fill="#f5c850"/><rect x="458.0" y="496.5" width="1.6" height="1.4" fill="#ff9a40"/><rect x="461.0" y="496.5" width="1.6" height="1.4" fill="#ffd870"/><rect x="473.0" y="496.5" width="1.6" height="1.4" fill="#ffd870"/><rect x="476.0" y="496.5" width="1.6" height="1.4" fill="#ff9a40"/><rect x="479.0" y="496.5" width="1.6" height="1.4" fill="#ffd870"/><rect x="455.0" y="499.5" width="1.6" height="1.4" fill="#ffd870"/><rect x="458.0" y="499.5" width="1.6" height="1.4" fill="#ff9a40"/><rect x="467.0" y="499.5" width="1.6" height="1.4" fill="#f5c850"/><rect x="476.0" y="499.5" width="1.6" height="1.4" fill="#ffd870"/><rect x="455.0" y="502.5" width="1.6" height="1.4" fill="#ff9a40"/><rect x="458.0" y="502.5" width="1.6" height="1.4" fill="#f5c850"/><rect x="461.0" y="502.5" width="1.6" height="1.4" fill="#ff9a40"/><rect x="470.0" y="502.5" width="1.6" height="1.4" fill="#ffd870"/><rect x="473.0" y="502.5" width="1.6" height="1.4" fill="#f5c850"/><rect x="476.0" y="502.5" width="1.6" height="1.4" fill="#ffd870"/><rect x="455.0" y="508.5" width="1.6" height="1.4" fill="#ff9a40"/><rect x="464.0" y="508.5" width="1.6" height="1.4" fill="#ff9a40"/><rect x="467.0" y="508.5" width="1.6" height="1.4" fill="#f5c850"/><rect x="470.0" y="508.5" width="1.6" height="1.4" fill="#f5c850"/><rect x="479.0" y="508.5" width="1.6" height="1.4" fill="#f5c850"/><rect x="461.0" y="511.5" width="1.6" height="1.4" fill="#ffd870"/><rect x="464.0" y="511.5" width="1.6" height="1.4" fill="#f5c850"/><rect x="467.0" y="511.5" width="1.6" height="1.4" fill="#ffd870"/><rect x="479.0" y="511.5" width="1.6" height="1.4" fill="#ff9a40"/><rect x="455.0" y="514.5" width="1.6" height="1.4" fill="#f5c850"/><rect x="461.0" y="514.5" width="1.6" height="1.4" fill="#ff9a40"/><rect x="467.0" y="514.5" width="1.6" height="1.4" fill="#f5c850"/><rect x="455.0" y="517.5" width="1.6" height="1.4" fill="#ffd870"/><rect x="461.0" y="517.5" width="1.6" height="1.4" fill="#ffd870"/><rect x="464.0" y="517.5" width="1.6" height="1.4" fill="#f5c850"/><rect x="470.0" y="517.5" width="1.6" height="1.4" fill="#f5c850"/><rect x="476.0" y="517.5" width="1.6" height="1.4" fill="#f5c850"/><rect x="479.0" y="517.5" width="1.6" height="1.4" fill="#f5c850"/><rect x="455.0" y="520.5" width="1.6" height="1.4" fill="#f5c850"/><rect x="458.0" y="520.5" width="1.6" height="1.4" fill="#ff9a40"/><rect x="461.0" y="520.5" width="1.6" height="1.4" fill="#ff9a40"/><rect x="470.0" y="520.5" width="1.6" height="1.4" fill="#ff9a40"/><rect x="455.0" y="523.5" width="1.6" height="1.4" fill="#ff9a40"/><rect x="461.0" y="523.5" width="1.6" height="1.4" fill="#ff9a40"/><rect x="467.0" y="523.5" width="1.6" height="1.4" fill="#f5c850"/><rect x="473.0" y="523.5" width="1.6" height="1.4" fill="#f5c850"/><rect x="458.0" y="526.5" width="1.6" height="1.4" fill="#ffd870"/><rect x="464.0" y="526.5" width="1.6" height="1.4" fill="#ffd870"/><rect x="470.0" y="526.5" width="1.6" height="1.4" fill="#ff9a40"/><rect x="476.0" y="526.5" width="1.6" height="1.4" fill="#f5c850"/><rect x="479.0" y="526.5" width="1.6" height="1.4" fill="#f5c850"/><rect x="455.0" y="529.5" width="1.6" height="1.4" fill="#ff9a40"/><rect x="458.0" y="529.5" width="1.6" height="1.4" fill="#ffd870"/><rect x="461.0" y="529.5" width="1.6" height="1.4" fill="#ffd870"/><rect x="473.0" y="529.5" width="1.6" height="1.4" fill="#f5c850"/><rect x="467.0" y="532.5" width="1.6" height="1.4" fill="#f5c850"/><rect x="473.0" y="532.5" width="1.6" height="1.4" fill="#ffd870"/><rect x="479.0" y="532.5" width="1.6" height="1.4" fill="#ffd870"/><rect x="467.0" y="535.5" width="1.6" height="1.4" fill="#f5c850"/><rect x="470.0" y="535.5" width="1.6" height="1.4" fill="#ffd870"/><rect x="473.0" y="535.5" width="1.6" height="1.4" fill="#ff9a40"/><rect x="458.0" y="538.5" width="1.6" height="1.4" fill="#f5c850"/><rect x="470.0" y="538.5" width="1.6" height="1.4" fill="#ff9a40"/><rect x="479.0" y="538.5" width="1.6" height="1.4" fill="#f5c850"/>
<rect x="483" y="472" width="18" height="68" fill="#44304e"/><rect x="490.0" y="473.5" width="1.6" height="1.4" fill="#ff9a40"/><rect x="496.0" y="473.5" width="1.6" height="1.4" fill="#ff9a40"/><rect x="499.0" y="473.5" width="1.6" height="1.4" fill="#ffd870"/><rect x="487.0" y="476.5" width="1.6" height="1.4" fill="#ffd870"/><rect x="493.0" y="476.5" width="1.6" height="1.4" fill="#ffd870"/><rect x="499.0" y="476.5" width="1.6" height="1.4" fill="#ffd870"/><rect x="487.0" y="479.5" width="1.6" height="1.4" fill="#ff9a40"/><rect x="493.0" y="479.5" width="1.6" height="1.4" fill="#ff9a40"/><rect x="496.0" y="479.5" width="1.6" height="1.4" fill="#ff9a40"/><rect x="484.0" y="482.5" width="1.6" height="1.4" fill="#f5c850"/><rect x="487.0" y="482.5" width="1.6" height="1.4" fill="#ff9a40"/><rect x="490.0" y="482.5" width="1.6" height="1.4" fill="#ff9a40"/><rect x="496.0" y="482.5" width="1.6" height="1.4" fill="#ff9a40"/><rect x="484.0" y="485.5" width="1.6" height="1.4" fill="#ffd870"/><rect x="487.0" y="485.5" width="1.6" height="1.4" fill="#f5c850"/><rect x="490.0" y="485.5" width="1.6" height="1.4" fill="#ffd870"/><rect x="496.0" y="485.5" width="1.6" height="1.4" fill="#ff9a40"/><rect x="499.0" y="485.5" width="1.6" height="1.4" fill="#ffd870"/><rect x="487.0" y="488.5" width="1.6" height="1.4" fill="#f5c850"/><rect x="490.0" y="488.5" width="1.6" height="1.4" fill="#ff9a40"/><rect x="499.0" y="488.5" width="1.6" height="1.4" fill="#ffd870"/><rect x="484.0" y="491.5" width="1.6" height="1.4" fill="#ffd870"/><rect x="496.0" y="491.5" width="1.6" height="1.4" fill="#f5c850"/><rect x="499.0" y="491.5" width="1.6" height="1.4" fill="#f5c850"/><rect x="484.0" y="494.5" width="1.6" height="1.4" fill="#f5c850"/><rect x="487.0" y="494.5" width="1.6" height="1.4" fill="#ff9a40"/><rect x="490.0" y="494.5" width="1.6" height="1.4" fill="#ff9a40"/><rect x="484.0" y="497.5" width="1.6" height="1.4" fill="#ff9a40"/><rect x="496.0" y="497.5" width="1.6" height="1.4" fill="#ffd870"/><rect x="493.0" y="500.5" width="1.6" height="1.4" fill="#ffd870"/><rect x="499.0" y="500.5" width="1.6" height="1.4" fill="#f5c850"/><rect x="487.0" y="503.5" width="1.6" height="1.4" fill="#f5c850"/><rect x="496.0" y="503.5" width="1.6" height="1.4" fill="#ff9a40"/><rect x="487.0" y="506.5" width="1.6" height="1.4" fill="#ff9a40"/><rect x="499.0" y="506.5" width="1.6" height="1.4" fill="#f5c850"/><rect x="484.0" y="509.5" width="1.6" height="1.4" fill="#f5c850"/><rect x="493.0" y="509.5" width="1.6" height="1.4" fill="#ff9a40"/><rect x="496.0" y="509.5" width="1.6" height="1.4" fill="#ff9a40"/><rect x="499.0" y="509.5" width="1.6" height="1.4" fill="#ffd870"/><rect x="484.0" y="512.5" width="1.6" height="1.4" fill="#ffd870"/><rect x="487.0" y="512.5" width="1.6" height="1.4" fill="#ffd870"/><rect x="490.0" y="512.5" width="1.6" height="1.4" fill="#ffd870"/><rect x="493.0" y="512.5" width="1.6" height="1.4" fill="#f5c850"/><rect x="493.0" y="515.5" width="1.6" height="1.4" fill="#f5c850"/><rect x="496.0" y="515.5" width="1.6" height="1.4" fill="#ff9a40"/><rect x="487.0" y="518.5" width="1.6" height="1.4" fill="#ffd870"/><rect x="496.0" y="518.5" width="1.6" height="1.4" fill="#f5c850"/><rect x="487.0" y="521.5" width="1.6" height="1.4" fill="#f5c850"/><rect x="496.0" y="521.5" width="1.6" height="1.4" fill="#f5c850"/><rect x="484.0" y="524.5" width="1.6" height="1.4" fill="#ffd870"/><rect x="490.0" y="524.5" width="1.6" height="1.4" fill="#f5c850"/><rect x="493.0" y="524.5" width="1.6" height="1.4" fill="#ffd870"/><rect x="496.0" y="524.5" width="1.6" height="1.4" fill="#f5c850"/><rect x="499.0" y="524.5" width="1.6" height="1.4" fill="#ffd870"/><rect x="484.0" y="527.5" width="1.6" height="1.4" fill="#f5c850"/><rect x="487.0" y="527.5" width="1.6" height="1.4" fill="#f5c850"/><rect x="490.0" y="527.5" width="1.6" height="1.4" fill="#ffd870"/><rect x="493.0" y="527.5" width="1.6" height="1.4" fill="#ff9a40"/><rect x="496.0" y="527.5" width="1.6" height="1.4" fill="#ff9a40"/><rect x="490.0" y="530.5" width="1.6" height="1.4" fill="#f5c850"/><rect x="496.0" y="530.5" width="1.6" height="1.4" fill="#ffd870"/><rect x="487.0" y="533.5" width="1.6" height="1.4" fill="#ffd870"/><rect x="490.0" y="533.5" width="1.6" height="1.4" fill="#f5c850"/><rect x="493.0" y="533.5" width="1.6" height="1.4" fill="#ff9a40"/><rect x="499.0" y="533.5" width="1.6" height="1.4" fill="#ff9a40"/><rect x="484.0" y="536.5" width="1.6" height="1.4" fill="#ff9a40"/><rect x="487.0" y="536.5" width="1.6" height="1.4" fill="#f5c850"/><rect x="490.0" y="536.5" width="1.6" height="1.4" fill="#ff9a40"/><rect x="493.0" y="536.5" width="1.6" height="1.4" fill="#ffd870"/><rect x="496.0" y="536.5" width="1.6" height="1.4" fill="#ffd870"/><rect x="499.0" y="536.5" width="1.6" height="1.4" fill="#ff9a40"/>
<path d="M556 426l-7-18M569 426l6-18" stroke="#9a7ab0" stroke-width="0.9"/>
<rect x="552" y="424" width="21" height="116" fill="#a89070"/><rect x="553.0" y="425.5" width="1.6" height="1.4" fill="#fff0a0"/><rect x="556.0" y="425.5" width="1.6" height="1.4" fill="#fff0a0"/><rect x="562.0" y="425.5" width="1.6" height="1.4" fill="#fff0a0"/><rect x="556.0" y="428.5" width="1.6" height="1.4" fill="#fff0a0"/><rect x="568.0" y="428.5" width="1.6" height="1.4" fill="#fff0a0"/><rect x="571.0" y="428.5" width="1.6" height="1.4" fill="#ffffd0"/><rect x="556.0" y="431.5" width="1.6" height="1.4" fill="#ffffd0"/><rect x="562.0" y="431.5" width="1.6" height="1.4" fill="#f8d870"/><rect x="565.0" y="431.5" width="1.6" height="1.4" fill="#ffffd0"/><rect x="571.0" y="431.5" width="1.6" height="1.4" fill="#fff0a0"/><rect x="553.0" y="434.5" width="1.6" height="1.4" fill="#f8d870"/><rect x="556.0" y="434.5" width="1.6" height="1.4" fill="#ffffd0"/><rect x="559.0" y="434.5" width="1.6" height="1.4" fill="#fff0a0"/><rect x="562.0" y="434.5" width="1.6" height="1.4" fill="#f8d870"/><rect x="565.0" y="434.5" width="1.6" height="1.4" fill="#ffffd0"/><rect x="568.0" y="434.5" width="1.6" height="1.4" fill="#ffffd0"/><rect x="553.0" y="437.5" width="1.6" height="1.4" fill="#f8d870"/><rect x="559.0" y="437.5" width="1.6" height="1.4" fill="#f8d870"/><rect x="571.0" y="437.5" width="1.6" height="1.4" fill="#ffffd0"/><rect x="556.0" y="440.5" width="1.6" height="1.4" fill="#fff0a0"/><rect x="559.0" y="440.5" width="1.6" height="1.4" fill="#fff0a0"/><rect x="565.0" y="440.5" width="1.6" height="1.4" fill="#ffffd0"/><rect x="568.0" y="440.5" width="1.6" height="1.4" fill="#ffffd0"/><rect x="571.0" y="440.5" width="1.6" height="1.4" fill="#fff0a0"/><rect x="556.0" y="443.5" width="1.6" height="1.4" fill="#fff0a0"/><rect x="559.0" y="443.5" width="1.6" height="1.4" fill="#f8d870"/><rect x="562.0" y="443.5" width="1.6" height="1.4" fill="#fff0a0"/><rect x="565.0" y="443.5" width="1.6" height="1.4" fill="#ffffd0"/><rect x="571.0" y="443.5" width="1.6" height="1.4" fill="#ffffd0"/><rect x="556.0" y="446.5" width="1.6" height="1.4" fill="#fff0a0"/><rect x="562.0" y="446.5" width="1.6" height="1.4" fill="#fff0a0"/><rect x="568.0" y="446.5" width="1.6" height="1.4" fill="#fff0a0"/><rect x="571.0" y="446.5" width="1.6" height="1.4" fill="#ffffd0"/><rect x="553.0" y="449.5" width="1.6" height="1.4" fill="#f8d870"/><rect x="556.0" y="449.5" width="1.6" height="1.4" fill="#fff0a0"/><rect x="559.0" y="449.5" width="1.6" height="1.4" fill="#fff0a0"/><rect x="562.0" y="449.5" width="1.6" height="1.4" fill="#fff0a0"/><rect x="568.0" y="449.5" width="1.6" height="1.4" fill="#ffffd0"/><rect x="571.0" y="449.5" width="1.6" height="1.4" fill="#f8d870"/><rect x="553.0" y="452.5" width="1.6" height="1.4" fill="#fff0a0"/><rect x="559.0" y="452.5" width="1.6" height="1.4" fill="#f8d870"/><rect x="562.0" y="452.5" width="1.6" height="1.4" fill="#ffffd0"/><rect x="565.0" y="452.5" width="1.6" height="1.4" fill="#f8d870"/><rect x="571.0" y="452.5" width="1.6" height="1.4" fill="#f8d870"/><rect x="553.0" y="455.5" width="1.6" height="1.4" fill="#fff0a0"/><rect x="565.0" y="455.5" width="1.6" height="1.4" fill="#f8d870"/><rect x="553.0" y="458.5" width="1.6" height="1.4" fill="#ffffd0"/><rect x="556.0" y="458.5" width="1.6" height="1.4" fill="#ffffd0"/><rect x="562.0" y="458.5" width="1.6" height="1.4" fill="#f8d870"/><rect x="568.0" y="458.5" width="1.6" height="1.4" fill="#fff0a0"/><rect x="571.0" y="458.5" width="1.6" height="1.4" fill="#fff0a0"/><rect x="553.0" y="461.5" width="1.6" height="1.4" fill="#fff0a0"/><rect x="556.0" y="461.5" width="1.6" height="1.4" fill="#fff0a0"/><rect x="559.0" y="461.5" width="1.6" height="1.4" fill="#f8d870"/><rect x="562.0" y="464.5" width="1.6" height="1.4" fill="#ffffd0"/><rect x="559.0" y="467.5" width="1.6" height="1.4" fill="#fff0a0"/><rect x="562.0" y="467.5" width="1.6" height="1.4" fill="#ffffd0"/><rect x="565.0" y="467.5" width="1.6" height="1.4" fill="#fff0a0"/><rect x="571.0" y="467.5" width="1.6" height="1.4" fill="#f8d870"/><rect x="553.0" y="470.5" width="1.6" height="1.4" fill="#fff0a0"/><rect x="556.0" y="470.5" width="1.6" height="1.4" fill="#ffffd0"/><rect x="568.0" y="470.5" width="1.6" height="1.4" fill="#ffffd0"/><rect x="571.0" y="470.5" width="1.6" height="1.4" fill="#fff0a0"/><rect x="553.0" y="473.5" width="1.6" height="1.4" fill="#ffffd0"/><rect x="556.0" y="473.5" width="1.6" height="1.4" fill="#f8d870"/><rect x="562.0" y="473.5" width="1.6" height="1.4" fill="#f8d870"/><rect x="565.0" y="473.5" width="1.6" height="1.4" fill="#fff0a0"/><rect x="571.0" y="473.5" width="1.6" height="1.4" fill="#f8d870"/><rect x="556.0" y="476.5" width="1.6" height="1.4" fill="#ffffd0"/><rect x="559.0" y="476.5" width="1.6" height="1.4" fill="#ffffd0"/><rect x="565.0" y="476.5" width="1.6" height="1.4" fill="#ffffd0"/><rect x="568.0" y="476.5" width="1.6" height="1.4" fill="#f8d870"/><rect x="571.0" y="476.5" width="1.6" height="1.4" fill="#f8d870"/><rect x="553.0" y="479.5" width="1.6" height="1.4" fill="#f8d870"/><rect x="556.0" y="479.5" width="1.6" height="1.4" fill="#ffffd0"/><rect x="559.0" y="479.5" width="1.6" height="1.4" fill="#ffffd0"/><rect x="562.0" y="479.5" width="1.6" height="1.4" fill="#f8d870"/><rect x="565.0" y="479.5" width="1.6" height="1.4" fill="#fff0a0"/><rect x="568.0" y="479.5" width="1.6" height="1.4" fill="#f8d870"/><rect x="571.0" y="479.5" width="1.6" height="1.4" fill="#f8d870"/><rect x="556.0" y="482.5" width="1.6" height="1.4" fill="#fff0a0"/><rect x="562.0" y="482.5" width="1.6" height="1.4" fill="#fff0a0"/><rect x="568.0" y="482.5" width="1.6" height="1.4" fill="#ffffd0"/><rect x="571.0" y="482.5" width="1.6" height="1.4" fill="#f8d870"/><rect x="556.0" y="485.5" width="1.6" height="1.4" fill="#fff0a0"/><rect x="559.0" y="485.5" width="1.6" height="1.4" fill="#ffffd0"/><rect x="565.0" y="485.5" width="1.6" height="1.4" fill="#f8d870"/><rect x="571.0" y="485.5" width="1.6" height="1.4" fill="#fff0a0"/><rect x="562.0" y="488.5" width="1.6" height="1.4" fill="#ffffd0"/><rect x="553.0" y="491.5" width="1.6" height="1.4" fill="#ffffd0"/><rect x="562.0" y="491.5" width="1.6" height="1.4" fill="#fff0a0"/><rect x="565.0" y="491.5" width="1.6" height="1.4" fill="#ffffd0"/><rect x="568.0" y="491.5" width="1.6" height="1.4" fill="#f8d870"/><rect x="571.0" y="491.5" width="1.6" height="1.4" fill="#ffffd0"/><rect x="553.0" y="494.5" width="1.6" height="1.4" fill="#f8d870"/><rect x="562.0" y="494.5" width="1.6" height="1.4" fill="#f8d870"/><rect x="568.0" y="494.5" width="1.6" height="1.4" fill="#f8d870"/><rect x="571.0" y="494.5" width="1.6" height="1.4" fill="#f8d870"/><rect x="553.0" y="497.5" width="1.6" height="1.4" fill="#ffffd0"/><rect x="556.0" y="497.5" width="1.6" height="1.4" fill="#f8d870"/><rect x="559.0" y="497.5" width="1.6" height="1.4" fill="#ffffd0"/><rect x="565.0" y="497.5" width="1.6" height="1.4" fill="#f8d870"/><rect x="568.0" y="497.5" width="1.6" height="1.4" fill="#ffffd0"/><rect x="571.0" y="497.5" width="1.6" height="1.4" fill="#fff0a0"/><rect x="553.0" y="500.5" width="1.6" height="1.4" fill="#f8d870"/><rect x="556.0" y="500.5" width="1.6" height="1.4" fill="#fff0a0"/><rect x="562.0" y="500.5" width="1.6" height="1.4" fill="#ffffd0"/><rect x="571.0" y="500.5" width="1.6" height="1.4" fill="#f8d870"/><rect x="559.0" y="503.5" width="1.6" height="1.4" fill="#f8d870"/><rect x="562.0" y="503.5" width="1.6" height="1.4" fill="#f8d870"/><rect x="565.0" y="503.5" width="1.6" height="1.4" fill="#ffffd0"/><rect x="571.0" y="503.5" width="1.6" height="1.4" fill="#f8d870"/><rect x="553.0" y="506.5" width="1.6" height="1.4" fill="#ffffd0"/><rect x="559.0" y="506.5" width="1.6" height="1.4" fill="#f8d870"/><rect x="562.0" y="506.5" width="1.6" height="1.4" fill="#ffffd0"/><rect x="568.0" y="506.5" width="1.6" height="1.4" fill="#fff0a0"/><rect x="553.0" y="509.5" width="1.6" height="1.4" fill="#fff0a0"/><rect x="556.0" y="509.5" width="1.6" height="1.4" fill="#ffffd0"/><rect x="559.0" y="509.5" width="1.6" height="1.4" fill="#ffffd0"/><rect x="565.0" y="509.5" width="1.6" height="1.4" fill="#fff0a0"/><rect x="571.0" y="509.5" width="1.6" height="1.4" fill="#f8d870"/><rect x="559.0" y="512.5" width="1.6" height="1.4" fill="#ffffd0"/><rect x="562.0" y="512.5" width="1.6" height="1.4" fill="#fff0a0"/><rect x="565.0" y="512.5" width="1.6" height="1.4" fill="#f8d870"/><rect x="568.0" y="512.5" width="1.6" height="1.4" fill="#fff0a0"/><rect x="553.0" y="515.5" width="1.6" height="1.4" fill="#fff0a0"/><rect x="559.0" y="515.5" width="1.6" height="1.4" fill="#f8d870"/><rect x="571.0" y="515.5" width="1.6" height="1.4" fill="#fff0a0"/><rect x="553.0" y="518.5" width="1.6" height="1.4" fill="#ffffd0"/><rect x="556.0" y="518.5" width="1.6" height="1.4" fill="#fff0a0"/><rect x="559.0" y="518.5" width="1.6" height="1.4" fill="#fff0a0"/><rect x="568.0" y="518.5" width="1.6" height="1.4" fill="#ffffd0"/><rect x="553.0" y="521.5" width="1.6" height="1.4" fill="#f8d870"/><rect x="556.0" y="521.5" width="1.6" height="1.4" fill="#fff0a0"/><rect x="559.0" y="521.5" width="1.6" height="1.4" fill="#ffffd0"/><rect x="562.0" y="521.5" width="1.6" height="1.4" fill="#f8d870"/><rect x="565.0" y="521.5" width="1.6" height="1.4" fill="#fff0a0"/><rect x="568.0" y="521.5" width="1.6" height="1.4" fill="#ffffd0"/><rect x="571.0" y="521.5" width="1.6" height="1.4" fill="#fff0a0"/><rect x="553.0" y="524.5" width="1.6" height="1.4" fill="#ffffd0"/><rect x="556.0" y="524.5" width="1.6" height="1.4" fill="#ffffd0"/><rect x="562.0" y="524.5" width="1.6" height="1.4" fill="#fff0a0"/><rect x="565.0" y="524.5" width="1.6" height="1.4" fill="#f8d870"/><rect x="571.0" y="524.5" width="1.6" height="1.4" fill="#ffffd0"/><rect x="556.0" y="527.5" width="1.6" height="1.4" fill="#fff0a0"/><rect x="559.0" y="527.5" width="1.6" height="1.4" fill="#ffffd0"/><rect x="562.0" y="527.5" width="1.6" height="1.4" fill="#f8d870"/><rect x="571.0" y="527.5" width="1.6" height="1.4" fill="#fff0a0"/><rect x="556.0" y="530.5" width="1.6" height="1.4" fill="#fff0a0"/><rect x="562.0" y="530.5" width="1.6" height="1.4" fill="#fff0a0"/><rect x="565.0" y="530.5" width="1.6" height="1.4" fill="#ffffd0"/><rect x="568.0" y="530.5" width="1.6" height="1.4" fill="#ffffd0"/><rect x="571.0" y="530.5" width="1.6" height="1.4" fill="#fff0a0"/><rect x="553.0" y="533.5" width="1.6" height="1.4" fill="#f8d870"/><rect x="556.0" y="533.5" width="1.6" height="1.4" fill="#fff0a0"/><rect x="562.0" y="533.5" width="1.6" height="1.4" fill="#fff0a0"/><rect x="565.0" y="533.5" width="1.6" height="1.4" fill="#ffffd0"/><rect x="568.0" y="533.5" width="1.6" height="1.4" fill="#fff0a0"/><rect x="571.0" y="533.5" width="1.6" height="1.4" fill="#ffffd0"/><rect x="556.0" y="536.5" width="1.6" height="1.4" fill="#f8d870"/><rect x="559.0" y="536.5" width="1.6" height="1.4" fill="#ffffd0"/><rect x="562.0" y="536.5" width="1.6" height="1.4" fill="#f8d870"/><rect x="568.0" y="536.5" width="1.6" height="1.4" fill="#ffffd0"/><rect x="571.0" y="536.5" width="1.6" height="1.4" fill="#ffffd0"/>
<rect x="578" y="422" width="20" height="118" fill="#2c2c5a"/><rect x="591.0" y="423.5" width="1.6" height="1.4" fill="#f5c850"/><rect x="594.0" y="423.5" width="1.6" height="1.4" fill="#f5c850"/><rect x="582.0" y="426.5" width="1.6" height="1.4" fill="#ffd870"/><rect x="594.0" y="432.5" width="1.6" height="1.4" fill="#f5c850"/><rect x="579.0" y="435.5" width="1.6" height="1.4" fill="#f5c850"/><rect x="582.0" y="435.5" width="1.6" height="1.4" fill="#ffd870"/><rect x="582.0" y="438.5" width="1.6" height="1.4" fill="#ffd870"/><rect x="579.0" y="441.5" width="1.6" height="1.4" fill="#ffd870"/><rect x="585.0" y="441.5" width="1.6" height="1.4" fill="#ffd870"/><rect x="579.0" y="447.5" width="1.6" height="1.4" fill="#f5c850"/><rect x="585.0" y="447.5" width="1.6" height="1.4" fill="#ffd870"/><rect x="594.0" y="447.5" width="1.6" height="1.4" fill="#ff9a40"/><rect x="588.0" y="450.5" width="1.6" height="1.4" fill="#f5c850"/><rect x="594.0" y="450.5" width="1.6" height="1.4" fill="#f5c850"/><rect x="582.0" y="453.5" width="1.6" height="1.4" fill="#ff9a40"/><rect x="594.0" y="453.5" width="1.6" height="1.4" fill="#ff9a40"/><rect x="582.0" y="456.5" width="1.6" height="1.4" fill="#f5c850"/><rect x="594.0" y="459.5" width="1.6" height="1.4" fill="#ffd870"/><rect x="579.0" y="465.5" width="1.6" height="1.4" fill="#ffd870"/><rect x="588.0" y="465.5" width="1.6" height="1.4" fill="#f5c850"/><rect x="579.0" y="468.5" width="1.6" height="1.4" fill="#ff9a40"/><rect x="582.0" y="468.5" width="1.6" height="1.4" fill="#f5c850"/><rect x="594.0" y="468.5" width="1.6" height="1.4" fill="#ff9a40"/><rect x="579.0" y="471.5" width="1.6" height="1.4" fill="#ffd870"/><rect x="591.0" y="471.5" width="1.6" height="1.4" fill="#ffd870"/><rect x="591.0" y="474.5" width="1.6" height="1.4" fill="#ff9a40"/><rect x="579.0" y="477.5" width="1.6" height="1.4" fill="#ff9a40"/><rect x="585.0" y="477.5" width="1.6" height="1.4" fill="#f5c850"/><rect x="591.0" y="477.5" width="1.6" height="1.4" fill="#ffd870"/><rect x="594.0" y="477.5" width="1.6" height="1.4" fill="#ffd870"/><rect x="582.0" y="480.5" width="1.6" height="1.4" fill="#ff9a40"/><rect x="594.0" y="480.5" width="1.6" height="1.4" fill="#ff9a40"/><rect x="579.0" y="483.5" width="1.6" height="1.4" fill="#ffd870"/><rect x="588.0" y="486.5" width="1.6" height="1.4" fill="#ff9a40"/><rect x="579.0" y="489.5" width="1.6" height="1.4" fill="#f5c850"/><rect x="582.0" y="489.5" width="1.6" height="1.4" fill="#ff9a40"/><rect x="591.0" y="489.5" width="1.6" height="1.4" fill="#f5c850"/><rect x="585.0" y="492.5" width="1.6" height="1.4" fill="#f5c850"/><rect x="588.0" y="492.5" width="1.6" height="1.4" fill="#ffd870"/><rect x="594.0" y="492.5" width="1.6" height="1.4" fill="#ffd870"/><rect x="579.0" y="495.5" width="1.6" height="1.4" fill="#ff9a40"/><rect x="588.0" y="495.5" width="1.6" height="1.4" fill="#f5c850"/><rect x="591.0" y="495.5" width="1.6" height="1.4" fill="#ff9a40"/><rect x="591.0" y="498.5" width="1.6" height="1.4" fill="#ff9a40"/><rect x="594.0" y="498.5" width="1.6" height="1.4" fill="#ff9a40"/><rect x="588.0" y="501.5" width="1.6" height="1.4" fill="#ff9a40"/><rect x="591.0" y="501.5" width="1.6" height="1.4" fill="#ffd870"/><rect x="582.0" y="504.5" width="1.6" height="1.4" fill="#ff9a40"/><rect x="591.0" y="504.5" width="1.6" height="1.4" fill="#f5c850"/><rect x="582.0" y="507.5" width="1.6" height="1.4" fill="#ffd870"/><rect x="588.0" y="507.5" width="1.6" height="1.4" fill="#ffd870"/><rect x="585.0" y="510.5" width="1.6" height="1.4" fill="#ffd870"/><rect x="594.0" y="510.5" width="1.6" height="1.4" fill="#ff9a40"/><rect x="588.0" y="516.5" width="1.6" height="1.4" fill="#ffd870"/><rect x="585.0" y="519.5" width="1.6" height="1.4" fill="#f5c850"/><rect x="591.0" y="519.5" width="1.6" height="1.4" fill="#ffd870"/><rect x="582.0" y="522.5" width="1.6" height="1.4" fill="#ff9a40"/><rect x="594.0" y="522.5" width="1.6" height="1.4" fill="#ff9a40"/><rect x="588.0" y="525.5" width="1.6" height="1.4" fill="#ffd870"/><rect x="588.0" y="528.5" width="1.6" height="1.4" fill="#f5c850"/><rect x="591.0" y="528.5" width="1.6" height="1.4" fill="#ff9a40"/><rect x="585.0" y="531.5" width="1.6" height="1.4" fill="#f5c850"/><rect x="594.0" y="531.5" width="1.6" height="1.4" fill="#ffd870"/><rect x="585.0" y="534.5" width="1.6" height="1.4" fill="#f5c850"/><rect x="588.0" y="534.5" width="1.6" height="1.4" fill="#ffd870"/><rect x="588.0" y="537.5" width="1.6" height="1.4" fill="#ffd870"/><rect x="591.0" y="537.5" width="1.6" height="1.4" fill="#ff9a40"/>
<path d="M601 468l6-20 6 20z" fill="#4a3558"/><path d="M590 470l5-12 5 12z" fill="#4a3558"/>
<rect x="589" y="470" width="11" height="70" fill="#4a3558"/><rect x="596.0" y="471.5" width="1.6" height="1.4" fill="#ff9a40"/><rect x="590.0" y="474.5" width="1.6" height="1.4" fill="#ff9a40"/><rect x="593.0" y="480.5" width="1.6" height="1.4" fill="#ffd870"/><rect x="596.0" y="480.5" width="1.6" height="1.4" fill="#ff9a40"/><rect x="596.0" y="489.5" width="1.6" height="1.4" fill="#ffd870"/><rect x="590.0" y="495.5" width="1.6" height="1.4" fill="#ff9a40"/><rect x="593.0" y="501.5" width="1.6" height="1.4" fill="#ffd870"/><rect x="596.0" y="504.5" width="1.6" height="1.4" fill="#ff9a40"/><rect x="593.0" y="507.5" width="1.6" height="1.4" fill="#ff9a40"/><rect x="590.0" y="513.5" width="1.6" height="1.4" fill="#ffd870"/><rect x="596.0" y="513.5" width="1.6" height="1.4" fill="#f5c850"/><rect x="593.0" y="516.5" width="1.6" height="1.4" fill="#ff9a40"/><rect x="596.0" y="516.5" width="1.6" height="1.4" fill="#ffd870"/><rect x="593.0" y="519.5" width="1.6" height="1.4" fill="#ff9a40"/><rect x="596.0" y="519.5" width="1.6" height="1.4" fill="#ffd870"/><rect x="590.0" y="522.5" width="1.6" height="1.4" fill="#ffd870"/><rect x="593.0" y="522.5" width="1.6" height="1.4" fill="#ff9a40"/><rect x="590.0" y="531.5" width="1.6" height="1.4" fill="#ff9a40"/><rect x="593.0" y="534.5" width="1.6" height="1.4" fill="#ff9a40"/>
<rect x="601" y="468" width="12" height="72" fill="#4e3a60"/><rect x="605.0" y="469.5" width="1.6" height="1.4" fill="#ffd870"/><rect x="611.0" y="469.5" width="1.6" height="1.4" fill="#ff9a40"/><rect x="602.0" y="472.5" width="1.6" height="1.4" fill="#f5c850"/><rect x="605.0" y="472.5" width="1.6" height="1.4" fill="#f5c850"/><rect x="608.0" y="472.5" width="1.6" height="1.4" fill="#ff9a40"/><rect x="605.0" y="475.5" width="1.6" height="1.4" fill="#f5c850"/><rect x="605.0" y="481.5" width="1.6" height="1.4" fill="#ff9a40"/><rect x="605.0" y="484.5" width="1.6" height="1.4" fill="#ffd870"/><rect x="608.0" y="484.5" width="1.6" height="1.4" fill="#ffd870"/><rect x="605.0" y="487.5" width="1.6" height="1.4" fill="#ffd870"/><rect x="608.0" y="487.5" width="1.6" height="1.4" fill="#ff9a40"/><rect x="611.0" y="487.5" width="1.6" height="1.4" fill="#ffd870"/><rect x="608.0" y="490.5" width="1.6" height="1.4" fill="#ff9a40"/><rect x="611.0" y="490.5" width="1.6" height="1.4" fill="#ffd870"/><rect x="602.0" y="493.5" width="1.6" height="1.4" fill="#ffd870"/><rect x="605.0" y="493.5" width="1.6" height="1.4" fill="#ff9a40"/><rect x="605.0" y="496.5" width="1.6" height="1.4" fill="#ffd870"/><rect x="608.0" y="496.5" width="1.6" height="1.4" fill="#ff9a40"/><rect x="602.0" y="502.5" width="1.6" height="1.4" fill="#ff9a40"/><rect x="608.0" y="502.5" width="1.6" height="1.4" fill="#ffd870"/><rect x="611.0" y="502.5" width="1.6" height="1.4" fill="#ffd870"/><rect x="611.0" y="505.5" width="1.6" height="1.4" fill="#f5c850"/><rect x="602.0" y="508.5" width="1.6" height="1.4" fill="#ff9a40"/><rect x="611.0" y="508.5" width="1.6" height="1.4" fill="#ffd870"/><rect x="611.0" y="511.5" width="1.6" height="1.4" fill="#ff9a40"/><rect x="605.0" y="514.5" width="1.6" height="1.4" fill="#ff9a40"/><rect x="608.0" y="514.5" width="1.6" height="1.4" fill="#f5c850"/><rect x="602.0" y="517.5" width="1.6" height="1.4" fill="#f5c850"/><rect x="611.0" y="517.5" width="1.6" height="1.4" fill="#ffd870"/><rect x="602.0" y="520.5" width="1.6" height="1.4" fill="#ffd870"/><rect x="605.0" y="520.5" width="1.6" height="1.4" fill="#ffd870"/><rect x="611.0" y="520.5" width="1.6" height="1.4" fill="#f5c850"/><rect x="602.0" y="523.5" width="1.6" height="1.4" fill="#ff9a40"/><rect x="605.0" y="523.5" width="1.6" height="1.4" fill="#f5c850"/><rect x="611.0" y="523.5" width="1.6" height="1.4" fill="#ffd870"/><rect x="602.0" y="526.5" width="1.6" height="1.4" fill="#ff9a40"/><rect x="608.0" y="526.5" width="1.6" height="1.4" fill="#ff9a40"/><rect x="608.0" y="529.5" width="1.6" height="1.4" fill="#ff9a40"/><rect x="602.0" y="532.5" width="1.6" height="1.4" fill="#f5c850"/><rect x="602.0" y="535.5" width="1.6" height="1.4" fill="#ffd870"/><rect x="608.0" y="535.5" width="1.6" height="1.4" fill="#f5c850"/><rect x="602.0" y="538.5" width="1.6" height="1.4" fill="#ffd870"/>
<rect x="613" y="480" width="5" height="60" fill="#c89a90"/><rect x="614.0" y="490.5" width="1.6" height="1.4" fill="#ffd870"/><rect x="614.0" y="514.5" width="1.6" height="1.4" fill="#f5c850"/><rect x="614.0" y="517.5" width="1.6" height="1.4" fill="#ff9a40"/><rect x="614.0" y="532.5" width="1.6" height="1.4" fill="#f5c850"/><rect x="614.0" y="535.5" width="1.6" height="1.4" fill="#ff9a40"/>
<rect x="630" y="491" width="12" height="49" fill="#4a3050"/><rect x="640.0" y="492.5" width="1.6" height="1.4" fill="#f5c850"/><rect x="634.0" y="495.5" width="1.6" height="1.4" fill="#f5c850"/><rect x="637.0" y="495.5" width="1.6" height="1.4" fill="#ffd870"/><rect x="631.0" y="498.5" width="1.6" height="1.4" fill="#ff9a40"/><rect x="634.0" y="498.5" width="1.6" height="1.4" fill="#f5c850"/><rect x="640.0" y="498.5" width="1.6" height="1.4" fill="#f5c850"/><rect x="631.0" y="501.5" width="1.6" height="1.4" fill="#ffd870"/><rect x="631.0" y="504.5" width="1.6" height="1.4" fill="#f5c850"/><rect x="634.0" y="504.5" width="1.6" height="1.4" fill="#ffd870"/><rect x="637.0" y="504.5" width="1.6" height="1.4" fill="#ff9a40"/><rect x="640.0" y="504.5" width="1.6" height="1.4" fill="#ff9a40"/><rect x="634.0" y="507.5" width="1.6" height="1.4" fill="#ff9a40"/><rect x="637.0" y="507.5" width="1.6" height="1.4" fill="#f5c850"/><rect x="631.0" y="510.5" width="1.6" height="1.4" fill="#ff9a40"/><rect x="634.0" y="510.5" width="1.6" height="1.4" fill="#f5c850"/><rect x="637.0" y="510.5" width="1.6" height="1.4" fill="#ffd870"/><rect x="640.0" y="513.5" width="1.6" height="1.4" fill="#ffd870"/><rect x="634.0" y="516.5" width="1.6" height="1.4" fill="#ffd870"/><rect x="637.0" y="516.5" width="1.6" height="1.4" fill="#ff9a40"/><rect x="631.0" y="519.5" width="1.6" height="1.4" fill="#ffd870"/><rect x="637.0" y="519.5" width="1.6" height="1.4" fill="#ff9a40"/><rect x="640.0" y="519.5" width="1.6" height="1.4" fill="#ffd870"/><rect x="634.0" y="522.5" width="1.6" height="1.4" fill="#ffd870"/><rect x="640.0" y="522.5" width="1.6" height="1.4" fill="#ffd870"/><rect x="637.0" y="525.5" width="1.6" height="1.4" fill="#ff9a40"/><rect x="634.0" y="528.5" width="1.6" height="1.4" fill="#f5c850"/><rect x="637.0" y="528.5" width="1.6" height="1.4" fill="#f5c850"/><rect x="634.0" y="531.5" width="1.6" height="1.4" fill="#ffd870"/><rect x="637.0" y="531.5" width="1.6" height="1.4" fill="#ff9a40"/><rect x="634.0" y="534.5" width="1.6" height="1.4" fill="#ff9a40"/><rect x="640.0" y="534.5" width="1.6" height="1.4" fill="#ff9a40"/><rect x="631.0" y="537.5" width="1.6" height="1.4" fill="#ff9a40"/><rect x="634.0" y="537.5" width="1.6" height="1.4" fill="#f5c850"/><rect x="640.0" y="537.5" width="1.6" height="1.4" fill="#ff9a40"/>
<rect x="642" y="505" width="28" height="35" fill="#4a2a48"/><rect x="646.0" y="506.5" width="1.6" height="1.4" fill="#ffd060"/><rect x="649.0" y="506.5" width="1.6" height="1.4" fill="#ff5030"/><rect x="655.0" y="506.5" width="1.6" height="1.4" fill="#ff9040"/><rect x="661.0" y="506.5" width="1.6" height="1.4" fill="#ffd060"/><rect x="664.0" y="506.5" width="1.6" height="1.4" fill="#ff5030"/><rect x="667.0" y="506.5" width="1.6" height="1.4" fill="#ff9040"/><rect x="649.0" y="509.5" width="1.6" height="1.4" fill="#ff5030"/><rect x="658.0" y="509.5" width="1.6" height="1.4" fill="#ff5030"/><rect x="661.0" y="509.5" width="1.6" height="1.4" fill="#ff9040"/><rect x="652.0" y="512.5" width="1.6" height="1.4" fill="#ff5030"/><rect x="655.0" y="512.5" width="1.6" height="1.4" fill="#ffd060"/><rect x="658.0" y="512.5" width="1.6" height="1.4" fill="#ffd060"/><rect x="664.0" y="512.5" width="1.6" height="1.4" fill="#ff9040"/><rect x="667.0" y="512.5" width="1.6" height="1.4" fill="#ff9040"/><rect x="643.0" y="515.5" width="1.6" height="1.4" fill="#ff5030"/><rect x="646.0" y="515.5" width="1.6" height="1.4" fill="#ff5030"/><rect x="655.0" y="515.5" width="1.6" height="1.4" fill="#ff9040"/><rect x="661.0" y="515.5" width="1.6" height="1.4" fill="#ffd060"/><rect x="643.0" y="518.5" width="1.6" height="1.4" fill="#ffd060"/><rect x="646.0" y="518.5" width="1.6" height="1.4" fill="#ff5030"/><rect x="649.0" y="518.5" width="1.6" height="1.4" fill="#ff9040"/><rect x="652.0" y="518.5" width="1.6" height="1.4" fill="#ffd060"/><rect x="661.0" y="518.5" width="1.6" height="1.4" fill="#ffd060"/><rect x="664.0" y="518.5" width="1.6" height="1.4" fill="#ff5030"/><rect x="643.0" y="521.5" width="1.6" height="1.4" fill="#ffd060"/><rect x="649.0" y="521.5" width="1.6" height="1.4" fill="#ffd060"/><rect x="652.0" y="521.5" width="1.6" height="1.4" fill="#ffd060"/><rect x="655.0" y="521.5" width="1.6" height="1.4" fill="#ff9040"/><rect x="658.0" y="521.5" width="1.6" height="1.4" fill="#ff5030"/><rect x="667.0" y="521.5" width="1.6" height="1.4" fill="#ff9040"/><rect x="646.0" y="524.5" width="1.6" height="1.4" fill="#ff5030"/><rect x="649.0" y="524.5" width="1.6" height="1.4" fill="#ffd060"/><rect x="652.0" y="524.5" width="1.6" height="1.4" fill="#ff9040"/><rect x="658.0" y="524.5" width="1.6" height="1.4" fill="#ff9040"/><rect x="664.0" y="524.5" width="1.6" height="1.4" fill="#ff9040"/><rect x="667.0" y="524.5" width="1.6" height="1.4" fill="#ffd060"/><rect x="643.0" y="527.5" width="1.6" height="1.4" fill="#ff5030"/><rect x="646.0" y="527.5" width="1.6" height="1.4" fill="#ff9040"/><rect x="649.0" y="527.5" width="1.6" height="1.4" fill="#ffd060"/><rect x="652.0" y="527.5" width="1.6" height="1.4" fill="#ffd060"/><rect x="661.0" y="527.5" width="1.6" height="1.4" fill="#ffd060"/><rect x="667.0" y="527.5" width="1.6" height="1.4" fill="#ff9040"/><rect x="643.0" y="530.5" width="1.6" height="1.4" fill="#ff5030"/><rect x="649.0" y="530.5" width="1.6" height="1.4" fill="#ff5030"/><rect x="664.0" y="530.5" width="1.6" height="1.4" fill="#ffd060"/><rect x="667.0" y="530.5" width="1.6" height="1.4" fill="#ff9040"/><rect x="643.0" y="533.5" width="1.6" height="1.4" fill="#ffd060"/><rect x="652.0" y="533.5" width="1.6" height="1.4" fill="#ff9040"/><rect x="658.0" y="533.5" width="1.6" height="1.4" fill="#ff5030"/><rect x="649.0" y="536.5" width="1.6" height="1.4" fill="#ff9040"/><rect x="658.0" y="536.5" width="1.6" height="1.4" fill="#ff9040"/><rect x="661.0" y="536.5" width="1.6" height="1.4" fill="#ff9040"/><rect x="664.0" y="536.5" width="1.6" height="1.4" fill="#ffd060"/><rect x="667.0" y="536.5" width="1.6" height="1.4" fill="#ff9040"/>
<rect x="670" y="434" width="46" height="106" fill="#4e3058"/><rect x="674.0" y="435.5" width="1.6" height="1.4" fill="#7a4a6a"/><rect x="683.0" y="435.5" width="1.6" height="1.4" fill="#7a4a6a"/><rect x="686.0" y="438.5" width="1.6" height="1.4" fill="#7a4a6a"/><rect x="710.0" y="438.5" width="1.6" height="1.4" fill="#7a4a6a"/><rect x="674.0" y="444.5" width="1.6" height="1.4" fill="#7a4a6a"/><rect x="671.0" y="450.5" width="1.6" height="1.4" fill="#7a4a6a"/><rect x="686.0" y="453.5" width="1.6" height="1.4" fill="#7a4a6a"/><rect x="707.0" y="453.5" width="1.6" height="1.4" fill="#7a4a6a"/><rect x="710.0" y="453.5" width="1.6" height="1.4" fill="#7a4a6a"/><rect x="713.0" y="453.5" width="1.6" height="1.4" fill="#7a4a6a"/><rect x="674.0" y="459.5" width="1.6" height="1.4" fill="#7a4a6a"/><rect x="710.0" y="459.5" width="1.6" height="1.4" fill="#7a4a6a"/><rect x="671.0" y="462.5" width="1.6" height="1.4" fill="#7a4a6a"/><rect x="689.0" y="462.5" width="1.6" height="1.4" fill="#7a4a6a"/><rect x="707.0" y="462.5" width="1.6" height="1.4" fill="#7a4a6a"/><rect x="683.0" y="465.5" width="1.6" height="1.4" fill="#7a4a6a"/><rect x="701.0" y="465.5" width="1.6" height="1.4" fill="#7a4a6a"/><rect x="671.0" y="468.5" width="1.6" height="1.4" fill="#7a4a6a"/><rect x="680.0" y="468.5" width="1.6" height="1.4" fill="#7a4a6a"/><rect x="692.0" y="468.5" width="1.6" height="1.4" fill="#7a4a6a"/><rect x="701.0" y="474.5" width="1.6" height="1.4" fill="#7a4a6a"/><rect x="698.0" y="477.5" width="1.6" height="1.4" fill="#7a4a6a"/><rect x="674.0" y="480.5" width="1.6" height="1.4" fill="#7a4a6a"/><rect x="689.0" y="483.5" width="1.6" height="1.4" fill="#7a4a6a"/><rect x="692.0" y="483.5" width="1.6" height="1.4" fill="#7a4a6a"/><rect x="689.0" y="486.5" width="1.6" height="1.4" fill="#7a4a6a"/><rect x="674.0" y="489.5" width="1.6" height="1.4" fill="#7a4a6a"/><rect x="698.0" y="492.5" width="1.6" height="1.4" fill="#7a4a6a"/><rect x="713.0" y="492.5" width="1.6" height="1.4" fill="#7a4a6a"/><rect x="710.0" y="495.5" width="1.6" height="1.4" fill="#7a4a6a"/><rect x="683.0" y="504.5" width="1.6" height="1.4" fill="#7a4a6a"/><rect x="710.0" y="504.5" width="1.6" height="1.4" fill="#7a4a6a"/><rect x="701.0" y="507.5" width="1.6" height="1.4" fill="#7a4a6a"/><rect x="707.0" y="507.5" width="1.6" height="1.4" fill="#7a4a6a"/><rect x="680.0" y="510.5" width="1.6" height="1.4" fill="#7a4a6a"/><rect x="686.0" y="510.5" width="1.6" height="1.4" fill="#7a4a6a"/><rect x="671.0" y="513.5" width="1.6" height="1.4" fill="#7a4a6a"/><rect x="677.0" y="525.5" width="1.6" height="1.4" fill="#7a4a6a"/><rect x="713.0" y="525.5" width="1.6" height="1.4" fill="#7a4a6a"/><rect x="695.0" y="528.5" width="1.6" height="1.4" fill="#7a4a6a"/><rect x="701.0" y="531.5" width="1.6" height="1.4" fill="#7a4a6a"/><rect x="683.0" y="537.5" width="1.6" height="1.4" fill="#7a4a6a"/><rect x="692.0" y="537.5" width="1.6" height="1.4" fill="#7a4a6a"/><rect x="713.0" y="537.5" width="1.6" height="1.4" fill="#7a4a6a"/>
<rect x="670" y="434" width="14" height="106" fill="#5e3a66" opacity="0.6"/>
<path d="M722 470l6-16 8 16z" fill="#3e3050"/>
<rect x="721" y="468" width="15" height="72" fill="#3e3050"/><rect x="725.0" y="469.5" width="1.6" height="1.4" fill="#ffd870"/><rect x="728.0" y="469.5" width="1.6" height="1.4" fill="#ff9a40"/><rect x="725.0" y="472.5" width="1.6" height="1.4" fill="#ff9a40"/><rect x="731.0" y="472.5" width="1.6" height="1.4" fill="#f5c850"/><rect x="734.0" y="472.5" width="1.6" height="1.4" fill="#ff9a40"/><rect x="722.0" y="475.5" width="1.6" height="1.4" fill="#ff9a40"/><rect x="734.0" y="478.5" width="1.6" height="1.4" fill="#f5c850"/><rect x="728.0" y="481.5" width="1.6" height="1.4" fill="#ff9a40"/><rect x="731.0" y="481.5" width="1.6" height="1.4" fill="#f5c850"/><rect x="734.0" y="481.5" width="1.6" height="1.4" fill="#f5c850"/><rect x="722.0" y="484.5" width="1.6" height="1.4" fill="#ff9a40"/><rect x="734.0" y="487.5" width="1.6" height="1.4" fill="#ffd870"/><rect x="722.0" y="490.5" width="1.6" height="1.4" fill="#ffd870"/><rect x="722.0" y="493.5" width="1.6" height="1.4" fill="#ffd870"/><rect x="725.0" y="493.5" width="1.6" height="1.4" fill="#f5c850"/><rect x="725.0" y="496.5" width="1.6" height="1.4" fill="#ffd870"/><rect x="728.0" y="496.5" width="1.6" height="1.4" fill="#ffd870"/><rect x="731.0" y="499.5" width="1.6" height="1.4" fill="#ffd870"/><rect x="731.0" y="502.5" width="1.6" height="1.4" fill="#ffd870"/><rect x="722.0" y="505.5" width="1.6" height="1.4" fill="#ff9a40"/><rect x="734.0" y="505.5" width="1.6" height="1.4" fill="#f5c850"/><rect x="728.0" y="508.5" width="1.6" height="1.4" fill="#ff9a40"/><rect x="725.0" y="511.5" width="1.6" height="1.4" fill="#ffd870"/><rect x="728.0" y="511.5" width="1.6" height="1.4" fill="#f5c850"/><rect x="722.0" y="517.5" width="1.6" height="1.4" fill="#ffd870"/><rect x="728.0" y="517.5" width="1.6" height="1.4" fill="#f5c850"/><rect x="734.0" y="517.5" width="1.6" height="1.4" fill="#ff9a40"/><rect x="731.0" y="520.5" width="1.6" height="1.4" fill="#ffd870"/><rect x="725.0" y="523.5" width="1.6" height="1.4" fill="#f5c850"/><rect x="728.0" y="526.5" width="1.6" height="1.4" fill="#ff9a40"/><rect x="722.0" y="529.5" width="1.6" height="1.4" fill="#ff9a40"/><rect x="728.0" y="529.5" width="1.6" height="1.4" fill="#f5c850"/><rect x="734.0" y="532.5" width="1.6" height="1.4" fill="#ff9a40"/><rect x="734.0" y="538.5" width="1.6" height="1.4" fill="#ffd870"/>
<rect x="715" y="481" width="35" height="22" fill="#7a5a7a"/><rect x="725.0" y="482.5" width="1.6" height="1.4" fill="#c0a0b0"/><rect x="728.0" y="482.5" width="1.6" height="1.4" fill="#ffd080"/><rect x="731.0" y="482.5" width="1.6" height="1.4" fill="#ffd080"/><rect x="737.0" y="482.5" width="1.6" height="1.4" fill="#ffd080"/><rect x="719.0" y="485.5" width="1.6" height="1.4" fill="#ffd080"/><rect x="722.0" y="485.5" width="1.6" height="1.4" fill="#c0a0b0"/><rect x="725.0" y="485.5" width="1.6" height="1.4" fill="#ffd080"/><rect x="734.0" y="485.5" width="1.6" height="1.4" fill="#c0a0b0"/><rect x="737.0" y="485.5" width="1.6" height="1.4" fill="#c0a0b0"/><rect x="740.0" y="485.5" width="1.6" height="1.4" fill="#c0a0b0"/><rect x="743.0" y="485.5" width="1.6" height="1.4" fill="#ffd080"/><rect x="716.0" y="488.5" width="1.6" height="1.4" fill="#ffd080"/><rect x="734.0" y="488.5" width="1.6" height="1.4" fill="#c0a0b0"/><rect x="743.0" y="488.5" width="1.6" height="1.4" fill="#ffd080"/><rect x="746.0" y="488.5" width="1.6" height="1.4" fill="#ffd080"/><rect x="731.0" y="491.5" width="1.6" height="1.4" fill="#c0a0b0"/><rect x="734.0" y="491.5" width="1.6" height="1.4" fill="#c0a0b0"/><rect x="737.0" y="491.5" width="1.6" height="1.4" fill="#c0a0b0"/><rect x="740.0" y="491.5" width="1.6" height="1.4" fill="#c0a0b0"/><rect x="746.0" y="491.5" width="1.6" height="1.4" fill="#c0a0b0"/><rect x="719.0" y="494.5" width="1.6" height="1.4" fill="#ffd080"/><rect x="737.0" y="494.5" width="1.6" height="1.4" fill="#c0a0b0"/><rect x="731.0" y="497.5" width="1.6" height="1.4" fill="#ffd080"/><rect x="734.0" y="497.5" width="1.6" height="1.4" fill="#c0a0b0"/><rect x="746.0" y="497.5" width="1.6" height="1.4" fill="#ffd080"/><rect x="719.0" y="500.5" width="1.6" height="1.4" fill="#c0a0b0"/><rect x="722.0" y="500.5" width="1.6" height="1.4" fill="#ffd080"/><rect x="728.0" y="500.5" width="1.6" height="1.4" fill="#ffd080"/><rect x="740.0" y="500.5" width="1.6" height="1.4" fill="#c0a0b0"/><rect x="746.0" y="500.5" width="1.6" height="1.4" fill="#ffd080"/>
<rect x="715" y="503" width="35" height="37" fill="#4a3a58"/><rect x="716.0" y="504.5" width="1.6" height="1.4" fill="#ffd870"/><rect x="725.0" y="504.5" width="1.6" height="1.4" fill="#ffd870"/><rect x="734.0" y="504.5" width="1.6" height="1.4" fill="#ff9a40"/><rect x="740.0" y="504.5" width="1.6" height="1.4" fill="#ffd870"/><rect x="743.0" y="504.5" width="1.6" height="1.4" fill="#f5c850"/><rect x="746.0" y="504.5" width="1.6" height="1.4" fill="#ff9a40"/><rect x="719.0" y="507.5" width="1.6" height="1.4" fill="#f5c850"/><rect x="728.0" y="507.5" width="1.6" height="1.4" fill="#f5c850"/><rect x="731.0" y="507.5" width="1.6" height="1.4" fill="#ff9a40"/><rect x="737.0" y="507.5" width="1.6" height="1.4" fill="#ffd870"/><rect x="740.0" y="507.5" width="1.6" height="1.4" fill="#ff9a40"/><rect x="719.0" y="510.5" width="1.6" height="1.4" fill="#f5c850"/><rect x="722.0" y="510.5" width="1.6" height="1.4" fill="#ffd870"/><rect x="725.0" y="510.5" width="1.6" height="1.4" fill="#f5c850"/><rect x="728.0" y="510.5" width="1.6" height="1.4" fill="#f5c850"/><rect x="734.0" y="510.5" width="1.6" height="1.4" fill="#ff9a40"/><rect x="746.0" y="510.5" width="1.6" height="1.4" fill="#f5c850"/><rect x="725.0" y="513.5" width="1.6" height="1.4" fill="#ff9a40"/><rect x="734.0" y="513.5" width="1.6" height="1.4" fill="#ff9a40"/><rect x="746.0" y="513.5" width="1.6" height="1.4" fill="#ffd870"/><rect x="719.0" y="516.5" width="1.6" height="1.4" fill="#f5c850"/><rect x="728.0" y="516.5" width="1.6" height="1.4" fill="#ff9a40"/><rect x="743.0" y="516.5" width="1.6" height="1.4" fill="#f5c850"/><rect x="716.0" y="519.5" width="1.6" height="1.4" fill="#f5c850"/><rect x="719.0" y="519.5" width="1.6" height="1.4" fill="#f5c850"/><rect x="722.0" y="519.5" width="1.6" height="1.4" fill="#f5c850"/><rect x="728.0" y="519.5" width="1.6" height="1.4" fill="#ff9a40"/><rect x="737.0" y="519.5" width="1.6" height="1.4" fill="#f5c850"/><rect x="722.0" y="522.5" width="1.6" height="1.4" fill="#f5c850"/><rect x="728.0" y="522.5" width="1.6" height="1.4" fill="#ff9a40"/><rect x="731.0" y="522.5" width="1.6" height="1.4" fill="#ff9a40"/><rect x="743.0" y="522.5" width="1.6" height="1.4" fill="#f5c850"/><rect x="731.0" y="525.5" width="1.6" height="1.4" fill="#f5c850"/><rect x="716.0" y="528.5" width="1.6" height="1.4" fill="#f5c850"/><rect x="728.0" y="528.5" width="1.6" height="1.4" fill="#ff9a40"/><rect x="743.0" y="528.5" width="1.6" height="1.4" fill="#ff9a40"/><rect x="746.0" y="528.5" width="1.6" height="1.4" fill="#f5c850"/><rect x="716.0" y="531.5" width="1.6" height="1.4" fill="#f5c850"/><rect x="725.0" y="531.5" width="1.6" height="1.4" fill="#ffd870"/><rect x="728.0" y="531.5" width="1.6" height="1.4" fill="#ffd870"/><rect x="734.0" y="531.5" width="1.6" height="1.4" fill="#ff9a40"/><rect x="740.0" y="531.5" width="1.6" height="1.4" fill="#f5c850"/><rect x="743.0" y="531.5" width="1.6" height="1.4" fill="#f5c850"/><rect x="746.0" y="531.5" width="1.6" height="1.4" fill="#ff9a40"/><rect x="728.0" y="534.5" width="1.6" height="1.4" fill="#ff9a40"/><rect x="734.0" y="534.5" width="1.6" height="1.4" fill="#ff9a40"/><rect x="740.0" y="534.5" width="1.6" height="1.4" fill="#f5c850"/><rect x="716.0" y="537.5" width="1.6" height="1.4" fill="#ff9a40"/><rect x="719.0" y="537.5" width="1.6" height="1.4" fill="#ffd870"/><rect x="725.0" y="537.5" width="1.6" height="1.4" fill="#ff9a40"/><rect x="731.0" y="537.5" width="1.6" height="1.4" fill="#ff9a40"/><rect x="734.0" y="537.5" width="1.6" height="1.4" fill="#ffd870"/><rect x="740.0" y="537.5" width="1.6" height="1.4" fill="#ffd870"/><rect x="743.0" y="537.5" width="1.6" height="1.4" fill="#ffd870"/><rect x="746.0" y="537.5" width="1.6" height="1.4" fill="#ff9a40"/>
</g>
<g stroke="#d8dce8" stroke-width="1" opacity="0.8" fill="none"><path d="M261 438q25 11 46 25"/><path d="M261 447q25 9 46 20"/><path d="M261 456q25 7 46 13"/></g>
<g fill="#fff0b0">
<circle cx="266" cy="440" r="1.3"/>
<circle cx="276" cy="445" r="1.3"/>
<circle cx="286" cy="450" r="1.3"/>
<circle cx="296" cy="456" r="1.3"/>
<circle cx="305" cy="462" r="1.3"/>
<circle cx="268" cy="456" r="1.3"/>
<circle cx="280" cy="459" r="1.3"/>
<circle cx="292" cy="463" r="1.3"/>
<circle cx="303" cy="467" r="1.3"/>
</g>
<g filter="url(#bl05)">
<path d="M261 540V484L300 486L340 490L380 494L420 497L470 500L520 503L560 506L600 505L630 503L660 500L670 498L716 498L716 486L750 484V540Z" fill="#3c2c52"/>
<rect x="261" y="484" width="75" height="56" fill="#4a4a78" opacity="0.6"/>
<rect x="580.4" y="518.6" width="2.9" height="2.0" fill="#ff6040" opacity="0.89"/>
<rect x="394.5" y="504.7" width="2.3" height="1.3" fill="#ffe090" opacity="0.79"/>
<rect x="434.8" y="529.1" width="2.7" height="1.8" fill="#ffc850" opacity="0.95"/>
<rect x="648.0" y="518.3" width="1.3" height="1.9" fill="#ff8a3a" opacity="0.74"/>
<rect x="425.1" y="496.8" width="3.1" height="1.2" fill="#ffc850" opacity="0.79"/>
<rect x="577.5" y="520.8" width="3.1" height="1.5" fill="#e83a40" opacity="0.90"/>
<rect x="568.5" y="524.7" width="1.8" height="1.9" fill="#ff5030" opacity="0.56"/>
<rect x="387.7" y="524.8" width="2.4" height="1.6" fill="#ffd870" opacity="0.62"/>
<rect x="722.7" y="508.4" width="1.7" height="1.3" fill="#e83a40" opacity="0.56"/>
<rect x="597.6" y="509.3" width="2.4" height="1.7" fill="#ffc850" opacity="0.88"/>
<rect x="330.2" y="497.0" width="2.6" height="1.3" fill="#ffc850" opacity="0.58"/>
<rect x="293.6" y="486.7" width="1.3" height="1.6" fill="#ff9a3a" opacity="0.88"/>
<rect x="576.8" y="519.9" width="3.0" height="1.5" fill="#ffc850" opacity="0.95"/>
<rect x="385.2" y="511.0" width="2.6" height="1.4" fill="#ff7040" opacity="0.88"/>
<rect x="307.2" y="533.5" width="1.8" height="1.2" fill="#ff9a3a" opacity="0.72"/>
<rect x="643.1" y="501.3" width="2.8" height="1.7" fill="#ff5030" opacity="0.67"/>
<rect x="265.8" y="495.7" width="1.5" height="1.7" fill="#ffc850" opacity="0.81"/>
<rect x="583.0" y="508.3" width="2.2" height="1.8" fill="#ff5030" opacity="0.58"/>
<rect x="384.7" y="497.8" width="1.6" height="1.1" fill="#f0b040" opacity="0.56"/>
<rect x="676.2" y="502.2" width="1.9" height="1.7" fill="#ffc850" opacity="0.61"/>
<rect x="644.7" y="507.1" width="1.5" height="1.7" fill="#ffc850" opacity="0.94"/>
<rect x="703.8" y="503.6" width="3.1" height="1.0" fill="#e83a40" opacity="0.84"/>
<rect x="692.8" y="527.5" width="1.7" height="1.9" fill="#ffc850" opacity="0.67"/>
<rect x="264.7" y="491.1" width="2.9" height="1.2" fill="#ffe090" opacity="0.56"/>
<rect x="474.5" y="506.1" width="2.3" height="1.5" fill="#ffe090" opacity="0.73"/>
<rect x="497.2" y="534.3" width="2.1" height="1.1" fill="#ffd870" opacity="0.64"/>
<rect x="390.6" y="513.1" width="3.1" height="1.6" fill="#ffd870" opacity="0.58"/>
<rect x="369.3" y="526.0" width="2.4" height="2.0" fill="#f0b040" opacity="0.97"/>
<rect x="444.2" y="496.6" width="2.2" height="1.2" fill="#ffe090" opacity="0.63"/>
<rect x="682.1" y="505.5" width="2.2" height="1.5" fill="#ff8a3a" opacity="0.98"/>
<rect x="643.3" y="502.3" width="2.5" height="1.1" fill="#e83a40" opacity="0.68"/>
<rect x="645.3" y="499.7" width="3.2" height="1.5" fill="#ffb060" opacity="0.63"/>
<rect x="266.3" y="519.3" width="3.0" height="1.6" fill="#f0b040" opacity="0.86"/>
<rect x="276.7" y="519.1" width="2.5" height="1.1" fill="#ffe090" opacity="0.71"/>
<rect x="449.6" y="532.1" width="2.7" height="1.9" fill="#ff9a3a" opacity="0.72"/>
<rect x="700.6" y="504.3" width="1.2" height="1.5" fill="#ff5030" opacity="0.88"/>
<rect x="479.8" y="531.8" width="2.1" height="1.1" fill="#ff9a3a" opacity="0.64"/>
<rect x="625.7" y="522.4" width="2.0" height="1.7" fill="#ff8a3a" opacity="0.56"/>
<rect x="722.9" y="506.3" width="1.9" height="1.9" fill="#e83a40" opacity="0.88"/>
<rect x="588.6" y="509.4" width="1.6" height="1.5" fill="#ff5030" opacity="0.69"/>
<rect x="643.0" y="507.8" width="1.3" height="1.2" fill="#ffc850" opacity="0.74"/>
<rect x="606.2" y="521.9" width="1.7" height="1.8" fill="#ff5030" opacity="0.62"/>
<rect x="656.3" y="521.3" width="2.3" height="1.7" fill="#e83a40" opacity="0.61"/>
<rect x="378.1" y="499.2" width="1.5" height="1.1" fill="#ffe090" opacity="0.78"/>
<rect x="544.1" y="533.0" width="1.5" height="1.4" fill="#ff8a3a" opacity="0.59"/>
<rect x="660.1" y="528.6" width="3.0" height="1.7" fill="#ffc850" opacity="0.94"/>
<rect x="727.0" y="507.8" width="2.0" height="1.1" fill="#ffb060" opacity="0.96"/>
<rect x="311.7" y="486.9" width="1.3" height="1.8" fill="#ff9a3a" opacity="0.63"/>
<rect x="328.4" y="489.7" width="2.9" height="1.8" fill="#ffe090" opacity="0.84"/>
<rect x="510.7" y="506.1" width="2.2" height="1.5" fill="#ff5030" opacity="0.86"/>
<rect x="441.0" y="516.4" width="1.6" height="1.1" fill="#f0b040" opacity="0.95"/>
<rect x="538.7" y="508.4" width="3.1" height="1.6" fill="#ffb060" opacity="0.74"/>
<rect x="726.7" y="507.3" width="2.6" height="1.1" fill="#ff8a3a" opacity="0.86"/>
<rect x="364.4" y="508.1" width="2.1" height="1.3" fill="#ffc850" opacity="0.89"/>
<rect x="726.6" y="532.6" width="3.1" height="1.8" fill="#e83a40" opacity="0.65"/>
<rect x="470.7" y="535.5" width="2.3" height="1.4" fill="#ffd870" opacity="0.61"/>
<rect x="624.9" y="515.0" width="1.9" height="1.7" fill="#ffb060" opacity="0.90"/>
<rect x="323.1" y="497.4" width="3.0" height="1.1" fill="#ffd870" opacity="0.78"/>
<rect x="691.8" y="521.6" width="1.4" height="1.6" fill="#ffb060" opacity="0.97"/>
<rect x="542.0" y="514.4" width="2.7" height="1.3" fill="#ffb060" opacity="0.92"/>
<rect x="598.5" y="525.7" width="2.0" height="1.1" fill="#ff5030" opacity="0.83"/>
<rect x="403.3" y="517.7" width="2.5" height="1.7" fill="#ffd870" opacity="0.98"/>
<rect x="356.6" y="526.9" width="2.5" height="1.2" fill="#ff9a3a" opacity="0.58"/>
<rect x="482.5" y="525.3" width="1.3" height="1.9" fill="#f0b040" opacity="0.82"/>
<rect x="461.8" y="521.6" width="1.3" height="1.0" fill="#ffc850" opacity="0.63"/>
<rect x="599.9" y="502.1" width="1.5" height="1.9" fill="#ff5030" opacity="0.90"/>
<rect x="376.1" y="495.0" width="3.1" height="2.0" fill="#ffc850" opacity="0.62"/>
<rect x="424.3" y="516.5" width="1.8" height="1.7" fill="#ff9a3a" opacity="0.94"/>
<rect x="423.2" y="533.9" width="1.5" height="1.1" fill="#ff9a3a" opacity="0.83"/>
<rect x="600.3" y="511.2" width="1.9" height="1.5" fill="#ffb060" opacity="0.61"/>
<rect x="555.7" y="536.6" width="2.7" height="1.8" fill="#ff8a3a" opacity="0.74"/>
<rect x="404.7" y="494.7" width="2.8" height="1.8" fill="#ff9a3a" opacity="0.59"/>
<rect x="546.5" y="508.7" width="2.1" height="1.5" fill="#ffb060" opacity="0.92"/>
<rect x="564.1" y="530.9" width="2.3" height="1.1" fill="#e83a40" opacity="0.64"/>
<rect x="544.7" y="505.8" width="2.1" height="1.8" fill="#ffb060" opacity="0.78"/>
<rect x="515.1" y="513.6" width="1.3" height="1.7" fill="#ff8a3a" opacity="0.65"/>
<rect x="402.6" y="521.5" width="2.1" height="1.2" fill="#ff7040" opacity="0.63"/>
<rect x="741.3" y="536.8" width="1.5" height="1.1" fill="#ffc850" opacity="0.76"/>
<rect x="426.0" y="524.3" width="3.1" height="1.8" fill="#ff7040" opacity="0.69"/>
<rect x="414.6" y="525.0" width="2.7" height="1.3" fill="#ffc850" opacity="0.68"/>
<rect x="419.3" y="504.2" width="3.1" height="1.9" fill="#ffd870" opacity="0.76"/>
<rect x="357.3" y="499.1" width="2.6" height="1.9" fill="#f0b040" opacity="0.86"/>
<rect x="493.0" y="512.9" width="1.4" height="1.1" fill="#ffc850" opacity="0.72"/>
<rect x="496.5" y="510.8" width="2.2" height="1.4" fill="#ff7040" opacity="0.93"/>
<rect x="717.8" y="513.7" width="1.9" height="1.4" fill="#ffb060" opacity="0.97"/>
<rect x="715.8" y="521.7" width="2.7" height="1.1" fill="#ff8a3a" opacity="0.97"/>
<rect x="325.8" y="529.8" width="1.5" height="1.5" fill="#f0b040" opacity="0.83"/>
<rect x="407.1" y="496.9" width="2.7" height="1.4" fill="#ff7040" opacity="0.59"/>
<rect x="452.8" y="505.3" width="1.3" height="1.3" fill="#ff7040" opacity="0.90"/>
<rect x="326.8" y="491.4" width="1.8" height="1.8" fill="#ffc850" opacity="0.82"/>
<rect x="458.9" y="510.4" width="2.7" height="1.4" fill="#ffe090" opacity="0.70"/>
<rect x="321.0" y="498.4" width="1.4" height="1.3" fill="#f0b040" opacity="0.88"/>
<rect x="695.3" y="533.2" width="1.7" height="1.2" fill="#e83a40" opacity="0.91"/>
<rect x="630.5" y="515.8" width="2.7" height="1.1" fill="#ff5030" opacity="0.64"/>
<rect x="727.7" y="501.3" width="1.9" height="1.2" fill="#ff6040" opacity="0.66"/>
<rect x="489.5" y="536.7" width="3.2" height="1.6" fill="#ffd870" opacity="0.69"/>
<rect x="616.2" y="531.7" width="1.6" height="1.4" fill="#ffb060" opacity="0.92"/>
<rect x="681.3" y="520.0" width="2.8" height="1.3" fill="#ff8a3a" opacity="0.57"/>
<rect x="279.3" y="536.9" width="2.9" height="1.8" fill="#ffd870" opacity="0.67"/>
<rect x="439.2" y="510.1" width="2.0" height="1.3" fill="#ff9a3a" opacity="0.97"/>
<rect x="267.1" y="520.5" width="2.7" height="1.6" fill="#ff7040" opacity="0.96"/>
<rect x="658.9" y="522.8" width="3.2" height="1.7" fill="#ff8a3a" opacity="0.89"/>
<rect x="656.9" y="507.1" width="1.9" height="1.4" fill="#ffb060" opacity="0.69"/>
<rect x="377.8" y="524.7" width="2.8" height="1.3" fill="#ff7040" opacity="0.93"/>
<rect x="673.9" y="532.2" width="2.9" height="2.0" fill="#ff5030" opacity="0.94"/>
<rect x="525.2" y="533.9" width="3.2" height="1.9" fill="#ff6040" opacity="0.76"/>
<rect x="485.9" y="528.2" width="2.7" height="1.4" fill="#ffd870" opacity="0.58"/>
<rect x="318.6" y="531.2" width="1.7" height="1.1" fill="#ffc850" opacity="0.58"/>
<rect x="621.9" y="508.9" width="2.5" height="1.3" fill="#e83a40" opacity="0.76"/>
<rect x="445.1" y="521.5" width="2.1" height="1.9" fill="#f0b040" opacity="0.88"/>
<rect x="412.7" y="531.6" width="3.0" height="1.6" fill="#f0b040" opacity="1.00"/>
<rect x="697.4" y="499.7" width="2.0" height="1.9" fill="#e83a40" opacity="0.85"/>
<rect x="362.3" y="509.6" width="3.1" height="1.7" fill="#ff9a3a" opacity="0.94"/>
<rect x="579.9" y="521.9" width="2.4" height="1.4" fill="#e83a40" opacity="0.87"/>
<rect x="470.1" y="505.2" width="1.8" height="1.5" fill="#f0b040" opacity="0.89"/>
<rect x="310.5" y="526.5" width="2.8" height="1.2" fill="#f0b040" opacity="0.95"/>
<rect x="744.3" y="514.3" width="2.5" height="1.1" fill="#e83a40" opacity="0.74"/>
<rect x="420.4" y="536.6" width="2.7" height="1.2" fill="#f0b040" opacity="0.80"/>
<rect x="504.7" y="525.4" width="2.4" height="1.4" fill="#ff5030" opacity="0.92"/>
<rect x="699.3" y="503.6" width="3.0" height="1.6" fill="#ff8a3a" opacity="0.89"/>
<rect x="683.9" y="511.5" width="1.6" height="1.0" fill="#ff8a3a" opacity="0.78"/>
<rect x="698.6" y="533.0" width="2.2" height="1.9" fill="#ff5030" opacity="0.80"/>
<rect x="331.0" y="521.1" width="2.0" height="1.6" fill="#ffc850" opacity="0.67"/>
<rect x="395.4" y="512.1" width="2.5" height="1.1" fill="#f0b040" opacity="0.90"/>
<rect x="651.9" y="533.1" width="2.7" height="1.2" fill="#ff5030" opacity="0.67"/>
<rect x="512.6" y="508.1" width="1.5" height="1.9" fill="#ff6040" opacity="0.99"/>
<rect x="612.4" y="505.8" width="2.6" height="1.7" fill="#e83a40" opacity="0.67"/>
<rect x="669.3" y="534.0" width="2.2" height="1.0" fill="#ff8a3a" opacity="0.94"/>
<rect x="684.0" y="532.9" width="2.6" height="1.1" fill="#ff6040" opacity="0.76"/>
<rect x="572.1" y="536.9" width="2.0" height="1.7" fill="#ffc850" opacity="1.00"/>
<rect x="371.9" y="531.4" width="2.4" height="1.3" fill="#ff9a3a" opacity="0.62"/>
<rect x="367.4" y="497.7" width="2.4" height="1.1" fill="#ffd870" opacity="0.68"/>
<rect x="464.4" y="531.4" width="2.2" height="1.9" fill="#f0b040" opacity="0.76"/>
<rect x="357.4" y="519.5" width="2.2" height="1.2" fill="#ffd870" opacity="0.71"/>
<rect x="447.7" y="497.0" width="1.9" height="1.4" fill="#ffc850" opacity="0.71"/>
<rect x="597.4" y="515.7" width="2.1" height="1.8" fill="#ff5030" opacity="0.80"/>
<rect x="281.3" y="526.0" width="1.9" height="1.6" fill="#ffe090" opacity="0.96"/>
<rect x="456.6" y="517.1" width="1.5" height="1.7" fill="#ff9a3a" opacity="0.89"/>
<rect x="262.9" y="521.0" width="1.9" height="1.9" fill="#ff7040" opacity="0.91"/>
<rect x="548.3" y="525.7" width="2.8" height="1.2" fill="#ffc850" opacity="0.80"/>
<rect x="578.0" y="512.0" width="3.0" height="1.8" fill="#ff5030" opacity="0.56"/>
<rect x="418.4" y="514.6" width="1.7" height="1.5" fill="#ffe090" opacity="0.56"/>
<rect x="528.4" y="529.7" width="2.5" height="1.5" fill="#ffc850" opacity="0.70"/>
<rect x="449.5" y="520.2" width="1.2" height="1.8" fill="#ff9a3a" opacity="0.58"/>
<rect x="655.7" y="522.1" width="1.8" height="1.3" fill="#ff8a3a" opacity="0.92"/>
<rect x="339.0" y="523.7" width="1.4" height="1.2" fill="#ffc850" opacity="0.88"/>
<rect x="329.5" y="501.9" width="1.3" height="1.3" fill="#ffd870" opacity="0.88"/>
<rect x="611.7" y="533.9" width="2.3" height="1.9" fill="#ff5030" opacity="0.59"/>
<rect x="711.5" y="514.4" width="1.3" height="1.5" fill="#ff5030" opacity="0.88"/>
<rect x="466.6" y="524.0" width="2.7" height="1.6" fill="#ff7040" opacity="0.99"/>
<rect x="279.6" y="488.9" width="1.3" height="1.3" fill="#ffc850" opacity="0.86"/>
<rect x="343.0" y="513.9" width="1.6" height="1.6" fill="#ffc850" opacity="0.85"/>
<rect x="733.2" y="511.4" width="1.9" height="1.4" fill="#e83a40" opacity="0.75"/>
<rect x="496.3" y="502.9" width="2.6" height="1.2" fill="#ff7040" opacity="0.63"/>
<rect x="335.1" y="509.1" width="2.5" height="1.4" fill="#ff7040" opacity="0.83"/>
<rect x="702.0" y="528.3" width="2.8" height="1.6" fill="#ff6040" opacity="0.75"/>
<rect x="690.2" y="521.0" width="2.5" height="1.5" fill="#ffc850" opacity="0.62"/>
<rect x="284.4" y="526.1" width="1.5" height="1.2" fill="#f0b040" opacity="0.72"/>
<rect x="597.4" y="502.2" width="2.2" height="1.0" fill="#ffb060" opacity="0.91"/>
<rect x="462.7" y="525.4" width="2.0" height="1.7" fill="#f0b040" opacity="0.70"/>
<rect x="494.5" y="522.3" width="1.5" height="1.9" fill="#f0b040" opacity="0.64"/>
<rect x="744.8" y="505.4" width="2.8" height="1.8" fill="#ffb060" opacity="1.00"/>
<rect x="596.1" y="513.1" width="1.7" height="1.6" fill="#ff6040" opacity="0.62"/>
<rect x="678.7" y="516.5" width="2.9" height="2.0" fill="#ffc850" opacity="0.77"/>
<rect x="664.5" y="498.9" width="2.7" height="1.6" fill="#e83a40" opacity="0.96"/>
<rect x="546.6" y="517.0" width="1.4" height="1.8" fill="#ff8a3a" opacity="0.60"/>
<rect x="395.7" y="498.9" width="2.1" height="1.7" fill="#ffe090" opacity="0.67"/>
<rect x="616.7" y="524.7" width="1.3" height="1.8" fill="#ff8a3a" opacity="0.68"/>
<rect x="292.7" y="499.2" width="1.6" height="1.5" fill="#ff9a3a" opacity="0.78"/>
<rect x="517.7" y="528.9" width="2.8" height="1.8" fill="#ffb060" opacity="0.76"/>
<rect x="681.6" y="513.1" width="2.1" height="1.1" fill="#ffb060" opacity="0.89"/>
<rect x="331.6" y="523.2" width="2.4" height="1.9" fill="#ffc850" opacity="0.88"/>
<rect x="717.6" y="511.1" width="2.9" height="1.3" fill="#e83a40" opacity="0.78"/>
<rect x="477.6" y="502.9" width="2.9" height="1.9" fill="#ffc850" opacity="0.57"/>
<rect x="487.2" y="518.4" width="1.4" height="1.3" fill="#ff7040" opacity="0.93"/>
<rect x="557.5" y="535.5" width="2.8" height="1.1" fill="#ffb060" opacity="0.63"/>
<rect x="504.6" y="513.8" width="3.0" height="1.2" fill="#ff5030" opacity="0.94"/>
<rect x="370.0" y="505.2" width="1.6" height="1.9" fill="#ffc850" opacity="0.83"/>
<rect x="733.9" y="527.8" width="2.0" height="1.6" fill="#ffb060" opacity="0.99"/>
<rect x="364.4" y="511.9" width="2.8" height="1.7" fill="#ffe090" opacity="0.89"/>
<rect x="374.0" y="513.9" width="3.1" height="1.9" fill="#f0b040" opacity="0.62"/>
<rect x="594.0" y="521.4" width="3.0" height="1.9" fill="#e83a40" opacity="0.95"/>
<rect x="489.7" y="534.7" width="1.9" height="1.6" fill="#f0b040" opacity="0.89"/>
<rect x="548.0" y="507.7" width="1.9" height="2.0" fill="#ff8a3a" opacity="0.99"/>
<rect x="329.3" y="515.7" width="2.0" height="1.5" fill="#ff9a3a" opacity="0.69"/>
<rect x="275.0" y="496.4" width="3.1" height="1.5" fill="#ffc850" opacity="0.72"/>
<rect x="639.9" y="534.8" width="1.9" height="1.9" fill="#ffb060" opacity="0.84"/>
<rect x="525.6" y="532.2" width="1.5" height="1.2" fill="#ffb060" opacity="0.64"/>
<rect x="403.7" y="524.5" width="3.1" height="1.1" fill="#ff7040" opacity="0.55"/>
<rect x="530.4" y="509.2" width="2.5" height="1.8" fill="#ff6040" opacity="0.66"/>
<rect x="314.7" y="500.6" width="3.2" height="1.7" fill="#ffc850" opacity="0.87"/>
<rect x="261.9" y="488.5" width="1.4" height="1.3" fill="#ffe090" opacity="0.95"/>
<rect x="598.6" y="520.0" width="3.0" height="1.6" fill="#ffc850" opacity="0.92"/>
<rect x="267.4" y="496.3" width="3.0" height="1.2" fill="#ffd870" opacity="0.64"/>
<rect x="320.2" y="515.9" width="2.2" height="1.3" fill="#ff7040" opacity="0.98"/>
<rect x="458.3" y="526.4" width="2.4" height="1.7" fill="#ffc850" opacity="0.74"/>
<rect x="665.0" y="532.7" width="1.5" height="1.4" fill="#ff6040" opacity="0.85"/>
<rect x="725.4" y="536.8" width="2.4" height="1.7" fill="#e83a40" opacity="0.62"/>
<rect x="614.6" y="521.3" width="3.0" height="1.4" fill="#ffc850" opacity="0.79"/>
<rect x="340.2" y="500.5" width="2.4" height="1.8" fill="#ffc850" opacity="0.62"/>
<rect x="505.9" y="522.1" width="2.2" height="1.5" fill="#ff6040" opacity="0.89"/>
<rect x="615.3" y="510.3" width="1.7" height="1.8" fill="#ff5030" opacity="0.66"/>
<rect x="662.3" y="506.7" width="2.9" height="1.6" fill="#ff8a3a" opacity="0.74"/>
<rect x="493.0" y="503.5" width="3.2" height="1.0" fill="#ff7040" opacity="0.99"/>
<rect x="377.3" y="495.6" width="1.6" height="1.3" fill="#ffd870" opacity="0.90"/>
<rect x="628.4" y="513.9" width="2.0" height="1.3" fill="#ff8a3a" opacity="0.78"/>
<rect x="717.1" y="506.8" width="1.5" height="1.4" fill="#ff5030" opacity="0.97"/>
<rect x="312.7" y="512.2" width="2.4" height="1.5" fill="#ffd870" opacity="1.00"/>
<rect x="618.9" y="528.0" width="2.8" height="1.3" fill="#ffb060" opacity="0.57"/>
<rect x="284.3" y="512.6" width="2.6" height="1.5" fill="#ff7040" opacity="0.63"/>
<rect x="587.1" y="517.2" width="2.1" height="1.2" fill="#ffb060" opacity="0.76"/>
<rect x="602.7" y="525.2" width="1.6" height="1.1" fill="#ff8a3a" opacity="0.86"/>
<rect x="745.0" y="510.4" width="2.5" height="1.3" fill="#ffc850" opacity="0.57"/>
<rect x="463.9" y="531.6" width="1.5" height="1.1" fill="#ffc850" opacity="0.79"/>
<rect x="743.4" y="533.8" width="2.0" height="1.7" fill="#ff8a3a" opacity="0.66"/>
<rect x="309.3" y="533.2" width="2.8" height="1.3" fill="#f0b040" opacity="0.97"/>
<rect x="657.7" y="515.9" width="1.3" height="1.4" fill="#ff5030" opacity="0.85"/>
<rect x="273.2" y="495.4" width="1.3" height="1.7" fill="#ff7040" opacity="0.91"/>
<rect x="316.0" y="502.4" width="1.6" height="1.9" fill="#ffc850" opacity="0.67"/>
<rect x="344.1" y="529.7" width="2.6" height="1.3" fill="#ffe090" opacity="0.99"/>
<rect x="474.3" y="502.1" width="2.3" height="1.4" fill="#ffc850" opacity="0.66"/>
<rect x="702.8" y="523.4" width="2.6" height="1.1" fill="#ffc850" opacity="0.72"/>
<rect x="588.0" y="502.1" width="2.9" height="1.1" fill="#ff8a3a" opacity="0.69"/>
<rect x="548.4" y="531.6" width="2.8" height="1.9" fill="#ffb060" opacity="0.81"/>
<rect x="733.1" y="522.8" width="2.3" height="1.3" fill="#ff6040" opacity="0.64"/>
<rect x="615.3" y="506.4" width="2.2" height="1.6" fill="#ffc850" opacity="0.65"/>
<rect x="396.1" y="515.6" width="1.2" height="1.4" fill="#f0b040" opacity="0.82"/>
<rect x="282.2" y="501.0" width="2.7" height="1.7" fill="#ffc850" opacity="0.90"/>
<rect x="513.0" y="510.7" width="2.3" height="1.5" fill="#ff6040" opacity="0.68"/>
<rect x="665.2" y="498.3" width="2.2" height="1.7" fill="#ffc850" opacity="0.65"/>
<rect x="481.1" y="514.5" width="2.1" height="1.1" fill="#ff9a3a" opacity="0.71"/>
<rect x="579.6" y="530.9" width="2.5" height="1.7" fill="#e83a40" opacity="0.84"/>
<rect x="598.7" y="511.5" width="1.9" height="1.4" fill="#ff8a3a" opacity="0.75"/>
<rect x="557.3" y="533.1" width="2.8" height="1.2" fill="#ffc850" opacity="0.70"/>
<rect x="313.9" y="526.6" width="1.6" height="1.1" fill="#ff7040" opacity="0.64"/>
<rect x="697.5" y="498.7" width="3.0" height="1.8" fill="#ff5030" opacity="0.94"/>
<rect x="474.9" y="516.7" width="1.5" height="1.6" fill="#ff9a3a" opacity="0.87"/>
<rect x="432.5" y="496.6" width="2.9" height="1.3" fill="#ff7040" opacity="0.93"/>
<rect x="694.8" y="514.1" width="1.5" height="1.8" fill="#ff5030" opacity="0.78"/>
<rect x="315.2" y="499.9" width="2.0" height="1.6" fill="#f0b040" opacity="0.66"/>
<rect x="270.9" y="505.9" width="2.8" height="1.7" fill="#ffe090" opacity="0.60"/>
<rect x="417.4" y="499.4" width="2.4" height="1.2" fill="#ffc850" opacity="0.56"/>
<rect x="589.4" y="523.4" width="1.4" height="1.7" fill="#ffc850" opacity="0.93"/>
<rect x="378.2" y="514.3" width="3.0" height="1.1" fill="#f0b040" opacity="0.81"/>
<rect x="512.3" y="531.8" width="2.2" height="1.1" fill="#ff8a3a" opacity="0.65"/>
<rect x="412.6" y="511.9" width="1.2" height="1.2" fill="#ff9a3a" opacity="0.70"/>
<rect x="455.5" y="524.9" width="1.7" height="1.6" fill="#ffe090" opacity="0.72"/>
<rect x="279.5" y="526.6" width="1.7" height="1.8" fill="#ff9a3a" opacity="0.77"/>
<rect x="741.7" y="499.2" width="2.1" height="1.6" fill="#e83a40" opacity="0.63"/>
<rect x="552.8" y="518.4" width="1.5" height="2.0" fill="#e83a40" opacity="0.99"/>
<rect x="630.5" y="528.2" width="1.8" height="1.9" fill="#ff8a3a" opacity="0.86"/>
<rect x="293.9" y="532.2" width="1.9" height="1.4" fill="#ffd870" opacity="0.78"/>
<rect x="401.9" y="524.2" width="1.9" height="1.7" fill="#f0b040" opacity="0.60"/>
<rect x="518.1" y="506.0" width="2.9" height="1.2" fill="#ffc850" opacity="0.94"/>
<rect x="435.2" y="508.4" width="2.3" height="1.3" fill="#f0b040" opacity="0.89"/>
<rect x="562.0" y="527.1" width="1.9" height="2.0" fill="#ff8a3a" opacity="0.84"/>
<rect x="328.0" y="520.4" width="1.9" height="1.4" fill="#ffc850" opacity="0.98"/>
<rect x="436.7" y="511.3" width="3.2" height="1.2" fill="#ffd870" opacity="0.79"/>
<rect x="436.7" y="505.1" width="2.8" height="1.5" fill="#ffd870" opacity="0.92"/>
<rect x="443.6" y="525.5" width="2.0" height="1.9" fill="#ffc850" opacity="0.69"/>
<rect x="456.5" y="503.5" width="2.1" height="1.2" fill="#f0b040" opacity="0.63"/>
<rect x="575.2" y="526.3" width="2.8" height="1.5" fill="#ffc850" opacity="0.87"/>
<rect x="636.2" y="525.1" width="1.8" height="1.5" fill="#ffc850" opacity="0.87"/>
<rect x="617.8" y="505.9" width="1.8" height="1.7" fill="#ffc850" opacity="0.80"/>
<rect x="561.3" y="529.3" width="2.9" height="1.7" fill="#ff6040" opacity="0.88"/>
<rect x="416.7" y="499.4" width="2.2" height="1.5" fill="#ff9a3a" opacity="0.62"/>
<rect x="289.9" y="533.7" width="2.4" height="1.0" fill="#ffc850" opacity="0.97"/>
<rect x="734.4" y="526.1" width="2.8" height="1.1" fill="#ffc850" opacity="0.96"/>
<rect x="723.4" y="497.9" width="3.0" height="1.4" fill="#ff6040" opacity="0.92"/>
<rect x="596.3" y="520.6" width="1.6" height="1.9" fill="#ff5030" opacity="0.70"/>
<rect x="273.7" y="503.2" width="3.0" height="1.0" fill="#ffc850" opacity="0.87"/>
<rect x="285.6" y="521.8" width="1.8" height="1.9" fill="#ff7040" opacity="0.96"/>
<rect x="684.7" y="536.6" width="2.4" height="2.0" fill="#e83a40" opacity="0.80"/>
<rect x="263.7" y="489.0" width="1.7" height="1.1" fill="#ff9a3a" opacity="0.97"/>
<rect x="529.9" y="523.4" width="2.0" height="1.5" fill="#ff5030" opacity="0.72"/>
<rect x="653.7" y="530.2" width="1.8" height="1.7" fill="#ff5030" opacity="0.92"/>
<rect x="381.7" y="523.9" width="1.3" height="1.1" fill="#ffe090" opacity="0.75"/>
<rect x="646.1" y="515.5" width="2.2" height="1.0" fill="#ffc850" opacity="0.89"/>
<rect x="623.9" y="532.7" width="2.0" height="1.2" fill="#ffc850" opacity="0.77"/>
<rect x="705.3" y="534.3" width="2.2" height="1.2" fill="#ff5030" opacity="0.96"/>
<rect x="490.8" y="519.7" width="2.5" height="1.2" fill="#ffd870" opacity="0.81"/>
<rect x="699.7" y="507.5" width="2.5" height="1.5" fill="#ffc850" opacity="0.72"/>
<rect x="542.8" y="509.6" width="2.8" height="1.9" fill="#e83a40" opacity="0.69"/>
<rect x="647.3" y="502.5" width="2.4" height="1.6" fill="#ff6040" opacity="0.61"/>
<rect x="639.5" y="512.2" width="2.8" height="1.7" fill="#ff8a3a" opacity="0.92"/>
<rect x="473.7" y="525.6" width="1.6" height="1.1" fill="#ffe090" opacity="0.74"/>
<rect x="509.2" y="507.2" width="2.5" height="1.4" fill="#ff5030" opacity="0.67"/>
<rect x="309.6" y="522.8" width="1.5" height="1.6" fill="#ffd870" opacity="0.64"/>
<rect x="575.5" y="519.0" width="1.2" height="1.9" fill="#ff8a3a" opacity="0.64"/>
<rect x="279.7" y="525.1" width="1.4" height="1.4" fill="#f0b040" opacity="0.93"/>
<rect x="741.1" y="522.2" width="1.7" height="1.6" fill="#ff6040" opacity="0.84"/>
<rect x="442.0" y="514.6" width="3.2" height="1.2" fill="#ffc850" opacity="0.69"/>
<rect x="384.0" y="528.9" width="1.3" height="1.6" fill="#ffc850" opacity="0.95"/>
<rect x="357.1" y="502.9" width="1.7" height="1.1" fill="#ff9a3a" opacity="0.77"/>
<rect x="382.9" y="506.9" width="1.6" height="1.2" fill="#ffe090" opacity="0.95"/>
<rect x="462.4" y="528.4" width="1.4" height="1.7" fill="#ffc850" opacity="0.75"/>
<rect x="499.8" y="502.8" width="1.6" height="1.0" fill="#ffd870" opacity="0.89"/>
<rect x="461.5" y="534.6" width="1.6" height="1.4" fill="#ffe090" opacity="0.83"/>
<rect x="654.5" y="526.9" width="2.1" height="1.8" fill="#ffb060" opacity="0.92"/>
<rect x="492.8" y="508.2" width="3.0" height="1.8" fill="#ffe090" opacity="0.64"/>
<rect x="284.9" y="497.0" width="3.0" height="2.0" fill="#f0b040" opacity="0.78"/>
<rect x="318.7" y="520.9" width="3.2" height="1.0" fill="#ffe090" opacity="0.83"/>
<rect x="568.8" y="531.5" width="2.8" height="1.9" fill="#e83a40" opacity="0.75"/>
<rect x="570.5" y="534.7" width="2.5" height="1.7" fill="#ff5030" opacity="0.85"/>
<rect x="271.7" y="508.5" width="2.2" height="1.2" fill="#ff9a3a" opacity="0.58"/>
<rect x="284.6" y="490.0" width="2.8" height="1.3" fill="#ffc850" opacity="0.80"/>
<rect x="654.6" y="501.6" width="2.5" height="2.0" fill="#ffb060" opacity="0.68"/>
<rect x="640.5" y="533.7" width="1.6" height="1.4" fill="#ffb060" opacity="0.78"/>
<rect x="463.1" y="506.3" width="2.1" height="1.5" fill="#f0b040" opacity="0.75"/>
<rect x="313.0" y="533.2" width="3.1" height="1.3" fill="#ffe090" opacity="0.84"/>
<rect x="666.5" y="512.7" width="1.8" height="1.1" fill="#ff6040" opacity="0.57"/>
<rect x="479.6" y="532.6" width="1.5" height="1.4" fill="#ffd870" opacity="0.82"/>
<rect x="437.0" y="519.9" width="2.1" height="1.9" fill="#ffd870" opacity="0.95"/>
<rect x="376.9" y="518.1" width="1.4" height="1.6" fill="#ffe090" opacity="0.85"/>
<rect x="645.6" y="533.4" width="2.6" height="1.1" fill="#e83a40" opacity="0.97"/>
<rect x="314.2" y="501.4" width="2.8" height="1.8" fill="#ff7040" opacity="0.71"/>
<rect x="649.8" y="500.5" width="1.5" height="1.2" fill="#ff8a3a" opacity="0.59"/>
<rect x="305.1" y="495.9" width="1.3" height="1.3" fill="#f0b040" opacity="0.99"/>
<rect x="475.8" y="522.5" width="2.9" height="1.0" fill="#ff9a3a" opacity="0.88"/>
<rect x="308.5" y="534.2" width="1.8" height="1.1" fill="#ffe090" opacity="0.60"/>
<rect x="469.4" y="522.0" width="2.4" height="1.7" fill="#ffd870" opacity="0.68"/>
<rect x="503.0" y="508.5" width="1.2" height="1.5" fill="#e83a40" opacity="0.70"/>
<rect x="529.1" y="524.3" width="1.4" height="1.8" fill="#ff6040" opacity="0.77"/>
<rect x="372.5" y="498.9" width="2.9" height="1.3" fill="#f0b040" opacity="0.69"/>
<rect x="381.5" y="533.3" width="1.7" height="2.0" fill="#f0b040" opacity="0.95"/>
<rect x="743.2" y="534.7" width="3.1" height="1.9" fill="#ffc850" opacity="0.91"/>
<rect x="326.7" y="513.9" width="2.8" height="1.6" fill="#ffd870" opacity="0.59"/>
<rect x="681.4" y="504.0" width="2.6" height="1.9" fill="#ffc850" opacity="0.73"/>
<rect x="345.7" y="522.0" width="2.5" height="1.1" fill="#ff9a3a" opacity="0.76"/>
<rect x="577.3" y="526.1" width="3.0" height="2.0" fill="#ff8a3a" opacity="0.73"/>
<rect x="594.7" y="508.8" width="2.6" height="1.7" fill="#ffb060" opacity="0.84"/>
<rect x="456.9" y="521.9" width="2.0" height="1.4" fill="#f0b040" opacity="0.61"/>
<rect x="510.5" y="513.8" width="2.1" height="1.8" fill="#ff6040" opacity="0.66"/>
<rect x="622.7" y="527.0" width="2.9" height="1.9" fill="#ff5030" opacity="0.67"/>
<rect x="644.5" y="516.0" width="2.4" height="2.0" fill="#ffc850" opacity="0.95"/>
<rect x="350.6" y="517.5" width="1.5" height="1.2" fill="#ffd870" opacity="0.81"/>
<rect x="364.3" y="508.5" width="2.2" height="1.1" fill="#ffc850" opacity="0.80"/>
<rect x="737.9" y="529.5" width="1.8" height="1.3" fill="#ffc850" opacity="0.73"/>
<rect x="266.9" y="508.2" width="2.1" height="1.4" fill="#ffe090" opacity="0.83"/>
<rect x="644.0" y="500.8" width="2.0" height="1.2" fill="#ff5030" opacity="0.82"/>
<rect x="486.0" y="516.7" width="2.2" height="1.2" fill="#ff7040" opacity="0.68"/>
<rect x="733.4" y="511.9" width="3.0" height="1.1" fill="#ff8a3a" opacity="0.93"/>
<rect x="271.2" y="522.3" width="2.2" height="1.1" fill="#ff7040" opacity="0.73"/>
<rect x="696.9" y="515.5" width="2.0" height="1.2" fill="#ffc850" opacity="0.87"/>
<rect x="540.1" y="529.3" width="1.9" height="1.4" fill="#ffb060" opacity="0.64"/>
<rect x="402.1" y="523.4" width="3.1" height="1.4" fill="#ffc850" opacity="0.60"/>
<rect x="423.3" y="524.4" width="1.7" height="1.3" fill="#ff7040" opacity="0.74"/>
<rect x="516.1" y="517.7" width="2.7" height="1.3" fill="#e83a40" opacity="0.60"/>
<rect x="562.8" y="530.3" width="2.7" height="1.7" fill="#ff5030" opacity="0.87"/>
<rect x="363.0" y="503.0" width="1.9" height="1.9" fill="#ff7040" opacity="1.00"/>
<rect x="478.0" y="529.8" width="2.9" height="1.8" fill="#ff7040" opacity="0.58"/>
<rect x="478.2" y="504.4" width="1.2" height="1.5" fill="#ffc850" opacity="0.74"/>
<rect x="725.8" y="513.5" width="2.8" height="1.6" fill="#ff5030" opacity="0.66"/>
<rect x="409.5" y="515.1" width="1.3" height="1.9" fill="#ffe090" opacity="0.55"/>
<rect x="279.2" y="526.2" width="1.6" height="1.3" fill="#ffe090" opacity="0.56"/>
<rect x="306.7" y="488.8" width="2.9" height="1.5" fill="#ffe090" opacity="0.77"/>
<rect x="443.0" y="498.2" width="2.4" height="1.0" fill="#ffe090" opacity="0.72"/>
<rect x="388.4" y="520.7" width="2.2" height="1.5" fill="#ffc850" opacity="0.60"/>
<rect x="308.7" y="519.6" width="2.7" height="1.8" fill="#ffe090" opacity="0.82"/>
<rect x="317.4" y="516.6" width="1.3" height="1.9" fill="#ff9a3a" opacity="0.85"/>
<rect x="395.7" y="533.6" width="3.0" height="1.2" fill="#ffe090" opacity="0.81"/>
<rect x="445.5" y="506.7" width="2.4" height="1.3" fill="#f0b040" opacity="0.79"/>
<rect x="713.1" y="519.7" width="2.8" height="1.7" fill="#ff6040" opacity="0.74"/>
<rect x="690.9" y="522.4" width="3.1" height="1.6" fill="#ff6040" opacity="0.77"/>
<rect x="569.9" y="520.7" width="1.8" height="1.7" fill="#ffb060" opacity="0.62"/>
<rect x="606.6" y="526.5" width="1.3" height="1.6" fill="#ff5030" opacity="0.91"/>
<rect x="377.0" y="510.4" width="2.7" height="1.7" fill="#ffd870" opacity="0.99"/>
<rect x="635.8" y="523.5" width="3.1" height="1.8" fill="#ff5030" opacity="0.98"/>
<rect x="381.4" y="516.2" width="3.1" height="1.2" fill="#ffe090" opacity="0.75"/>
<rect x="672.1" y="535.5" width="3.1" height="1.0" fill="#ffc850" opacity="0.67"/>
<rect x="501.1" y="534.8" width="2.9" height="1.0" fill="#ff5030" opacity="0.93"/>
<rect x="592.9" y="528.1" width="1.9" height="1.2" fill="#ffc850" opacity="0.61"/>
<rect x="408.9" y="524.1" width="3.0" height="1.9" fill="#f0b040" opacity="0.76"/>
<rect x="626.7" y="519.1" width="1.6" height="1.9" fill="#ff8a3a" opacity="0.91"/>
<rect x="372.6" y="494.0" width="1.4" height="1.8" fill="#ff9a3a" opacity="0.90"/>
<rect x="569.6" y="531.1" width="3.2" height="1.1" fill="#ffc850" opacity="0.63"/>
<rect x="604.9" y="515.7" width="2.9" height="1.6" fill="#ff5030" opacity="0.67"/>
<rect x="383.6" y="517.3" width="2.4" height="1.4" fill="#ffd870" opacity="0.62"/>
<rect x="599.3" y="502.7" width="1.6" height="1.3" fill="#ff8a3a" opacity="0.55"/>
<rect x="418.3" y="525.9" width="2.1" height="1.8" fill="#ff7040" opacity="0.62"/>
<rect x="312.9" y="503.8" width="1.5" height="1.1" fill="#ffd870" opacity="0.89"/>
<rect x="305.5" y="520.1" width="1.5" height="1.5" fill="#ffc850" opacity="0.57"/>
<rect x="720.5" y="522.0" width="1.3" height="1.3" fill="#ff8a3a" opacity="0.66"/>
<rect x="645.1" y="525.6" width="2.3" height="1.7" fill="#e83a40" opacity="0.61"/>
<rect x="448.5" y="506.6" width="1.8" height="1.1" fill="#ff9a3a" opacity="0.75"/>
<rect x="477.4" y="508.6" width="2.8" height="1.3" fill="#ff7040" opacity="0.83"/>
<rect x="304.6" y="492.1" width="2.3" height="1.9" fill="#ffc850" opacity="0.67"/>
<rect x="387.0" y="498.4" width="2.6" height="1.6" fill="#f0b040" opacity="0.78"/>
<rect x="353.9" y="494.3" width="2.9" height="2.0" fill="#ffe090" opacity="0.70"/>
<rect x="573.3" y="521.5" width="2.7" height="1.9" fill="#ffb060" opacity="0.85"/>
<rect x="410.9" y="516.1" width="1.8" height="1.8" fill="#ff9a3a" opacity="0.68"/>
<rect x="685.2" y="528.0" width="2.2" height="2.0" fill="#ff6040" opacity="0.61"/>
<rect x="709.6" y="522.6" width="2.0" height="2.0" fill="#ff8a3a" opacity="0.56"/>
<rect x="673.9" y="529.8" width="3.0" height="1.9" fill="#ffc850" opacity="0.74"/>
<rect x="270.8" y="536.8" width="1.6" height="1.8" fill="#ff7040" opacity="0.88"/>
<rect x="304.3" y="535.9" width="1.8" height="1.2" fill="#ffd870" opacity="0.72"/>
<rect x="583.4" y="526.0" width="2.5" height="1.4" fill="#e83a40" opacity="0.60"/>
<rect x="294.5" y="512.5" width="2.7" height="1.8" fill="#f0b040" opacity="0.97"/>
<rect x="583.0" y="522.0" width="1.5" height="1.9" fill="#ffb060" opacity="0.82"/>
<rect x="525.3" y="516.9" width="2.0" height="2.0" fill="#ffc850" opacity="0.88"/>
<rect x="279.1" y="511.5" width="1.6" height="1.1" fill="#f0b040" opacity="0.62"/>
<rect x="429.4" y="527.6" width="1.7" height="1.8" fill="#ffd870" opacity="0.75"/>
<rect x="522.8" y="520.7" width="2.7" height="1.2" fill="#ff8a3a" opacity="0.64"/>
<rect x="306.0" y="493.8" width="2.8" height="1.3" fill="#f0b040" opacity="0.58"/>
<rect x="530.5" y="524.9" width="1.4" height="1.1" fill="#ff5030" opacity="0.70"/>
<rect x="680.4" y="513.1" width="1.8" height="1.4" fill="#ffb060" opacity="0.65"/>
<rect x="351.5" y="501.8" width="3.1" height="1.9" fill="#ffe090" opacity="0.89"/>
<rect x="326.3" y="522.5" width="2.7" height="1.1" fill="#ffe090" opacity="0.69"/>
<rect x="437.6" y="505.8" width="2.5" height="1.1" fill="#ffd870" opacity="0.70"/>
<rect x="373.3" y="530.3" width="1.2" height="1.7" fill="#ffc850" opacity="0.74"/>
<rect x="569.0" y="515.0" width="1.7" height="1.7" fill="#e83a40" opacity="0.68"/>
<rect x="613.1" y="514.2" width="2.3" height="1.8" fill="#e83a40" opacity="0.99"/>
<rect x="445.4" y="536.4" width="2.4" height="1.8" fill="#ffc850" opacity="0.82"/>
<rect x="598.3" y="524.1" width="1.8" height="1.2" fill="#ffb060" opacity="0.90"/>
<rect x="529.0" y="528.4" width="3.2" height="1.5" fill="#e83a40" opacity="0.95"/>
<rect x="419.9" y="527.4" width="1.7" height="1.7" fill="#ff7040" opacity="0.89"/>
<rect x="570.9" y="517.5" width="2.4" height="1.8" fill="#ffb060" opacity="0.68"/>
<rect x="500.5" y="508.4" width="3.2" height="1.4" fill="#ff5030" opacity="0.56"/>
<rect x="405.5" y="533.4" width="2.4" height="1.2" fill="#ffd870" opacity="0.88"/>
<rect x="317.9" y="524.3" width="3.1" height="1.3" fill="#ffd870" opacity="0.89"/>
<rect x="462.4" y="524.5" width="3.1" height="1.3" fill="#ffe090" opacity="0.89"/>
<rect x="599.8" y="521.6" width="2.5" height="2.0" fill="#ffc850" opacity="0.88"/>
<rect x="369.2" y="503.9" width="2.8" height="1.3" fill="#ffd870" opacity="0.70"/>
<rect x="616.3" y="524.7" width="1.2" height="1.9" fill="#ffc850" opacity="0.67"/>
<rect x="364.3" y="499.0" width="1.9" height="1.5" fill="#ff9a3a" opacity="0.74"/>
<rect x="303.2" y="533.2" width="1.8" height="1.5" fill="#ffe090" opacity="0.90"/>
<rect x="613.6" y="514.0" width="2.8" height="1.6" fill="#ff6040" opacity="0.76"/>
<rect x="421.5" y="499.8" width="2.4" height="1.1" fill="#ff9a3a" opacity="0.97"/>
<rect x="693.0" y="498.3" width="2.2" height="1.1" fill="#ffb060" opacity="0.86"/>
<rect x="501.7" y="532.1" width="2.5" height="1.2" fill="#ffc850" opacity="0.83"/>
<rect x="468.1" y="536.4" width="1.3" height="1.3" fill="#ffd870" opacity="0.59"/>
<rect x="431.1" y="514.9" width="2.3" height="1.2" fill="#f0b040" opacity="0.91"/>
<rect x="307.9" y="517.8" width="1.5" height="1.2" fill="#ffe090" opacity="0.89"/>
<rect x="490.0" y="534.6" width="2.8" height="1.2" fill="#ff9a3a" opacity="0.90"/>
<rect x="270.7" y="511.1" width="1.6" height="1.5" fill="#ffe090" opacity="0.97"/>
<rect x="318.2" y="529.3" width="1.6" height="1.8" fill="#ff7040" opacity="0.70"/>
<rect x="333.9" y="502.2" width="2.6" height="1.3" fill="#f0b040" opacity="0.86"/>
<rect x="461.0" y="528.3" width="1.8" height="1.6" fill="#ffc850" opacity="0.91"/>
<rect x="486.4" y="511.5" width="1.8" height="1.5" fill="#ff9a3a" opacity="0.56"/>
<rect x="499.3" y="504.8" width="2.6" height="1.4" fill="#ff9a3a" opacity="0.99"/>
<rect x="722.1" y="535.3" width="2.3" height="1.8" fill="#ff8a3a" opacity="0.57"/>
<rect x="322.6" y="512.9" width="2.1" height="1.6" fill="#ffe090" opacity="0.92"/>
<rect x="395.0" y="495.3" width="1.7" height="1.0" fill="#f0b040" opacity="0.61"/>
<rect x="745.5" y="526.6" width="1.7" height="1.0" fill="#ff5030" opacity="0.84"/>
<rect x="589.6" y="511.4" width="2.0" height="1.9" fill="#e83a40" opacity="0.55"/>
<rect x="465.1" y="504.0" width="2.2" height="1.6" fill="#ffc850" opacity="0.93"/>
<rect x="686.1" y="513.2" width="2.2" height="1.5" fill="#ff5030" opacity="0.62"/>
<rect x="510.5" y="530.1" width="2.2" height="1.9" fill="#ff5030" opacity="0.68"/>
<rect x="302.4" y="491.9" width="1.9" height="1.1" fill="#ff7040" opacity="0.93"/>
<rect x="521.5" y="508.4" width="1.6" height="1.0" fill="#ff6040" opacity="0.70"/>
<rect x="413.5" y="499.3" width="1.6" height="1.1" fill="#ffe090" opacity="0.76"/>
<rect x="684.4" y="523.3" width="1.6" height="1.4" fill="#ffb060" opacity="0.89"/>
<rect x="569.3" y="507.0" width="2.4" height="1.8" fill="#ffb060" opacity="0.63"/>
<rect x="428.6" y="529.4" width="3.2" height="1.1" fill="#ff9a3a" opacity="0.64"/>
<rect x="312.9" y="522.9" width="1.9" height="1.5" fill="#ff7040" opacity="0.97"/>
<rect x="542.8" y="507.2" width="2.5" height="1.7" fill="#ffb060" opacity="0.81"/>
<rect x="501.5" y="528.5" width="1.3" height="1.3" fill="#ff6040" opacity="0.83"/>
<rect x="293.6" y="498.2" width="1.9" height="1.4" fill="#f0b040" opacity="0.74"/>
<rect x="441.9" y="535.8" width="2.1" height="1.3" fill="#ffc850" opacity="0.60"/>
<rect x="502.4" y="508.1" width="1.9" height="1.2" fill="#ff8a3a" opacity="0.56"/>
<rect x="686.5" y="534.6" width="2.9" height="1.7" fill="#ffc850" opacity="0.96"/>
<rect x="703.5" y="506.4" width="1.7" height="1.3" fill="#ffb060" opacity="0.86"/>
<rect x="649.0" y="515.8" width="1.4" height="1.2" fill="#e83a40" opacity="0.91"/>
<rect x="645.5" y="511.6" width="2.4" height="2.0" fill="#ffc850" opacity="0.87"/>
<rect x="484.6" y="507.1" width="2.0" height="1.2" fill="#ffc850" opacity="0.88"/>
<rect x="477.8" y="522.3" width="1.5" height="1.7" fill="#f0b040" opacity="0.55"/>
<rect x="460.1" y="519.6" width="2.7" height="1.1" fill="#ff7040" opacity="0.65"/>
<rect x="427.9" y="518.6" width="1.4" height="1.6" fill="#ff9a3a" opacity="0.93"/>
<rect x="615.6" y="520.1" width="3.1" height="1.3" fill="#ffb060" opacity="0.82"/>
<rect x="315.0" y="506.9" width="1.6" height="1.5" fill="#f0b040" opacity="0.93"/>
<rect x="479.1" y="513.3" width="1.5" height="1.3" fill="#ffd870" opacity="0.83"/>
<rect x="699.7" y="517.6" width="3.0" height="1.7" fill="#ffc850" opacity="0.75"/>
<rect x="614.4" y="512.3" width="2.1" height="1.9" fill="#ffb060" opacity="0.62"/>
<rect x="354.7" y="499.7" width="2.7" height="1.2" fill="#ffd870" opacity="0.92"/>
<rect x="409.5" y="530.7" width="1.5" height="1.4" fill="#ffe090" opacity="0.57"/>
<rect x="663.4" y="522.8" width="3.2" height="1.5" fill="#ff5030" opacity="0.86"/>
<rect x="446.7" y="505.7" width="1.5" height="1.9" fill="#ffd870" opacity="1.00"/>
<rect x="659.8" y="517.5" width="1.6" height="1.2" fill="#ff6040" opacity="0.70"/>
<rect x="592.9" y="521.0" width="2.5" height="1.7" fill="#ff8a3a" opacity="0.63"/>
<rect x="729.5" y="500.7" width="2.8" height="1.6" fill="#ff8a3a" opacity="0.70"/>
<rect x="382.1" y="506.5" width="2.8" height="1.7" fill="#ff9a3a" opacity="0.86"/>
<rect x="287.5" y="524.0" width="2.5" height="1.1" fill="#f0b040" opacity="0.57"/>
<rect x="341.0" y="505.1" width="1.4" height="1.6" fill="#f0b040" opacity="0.94"/>
<rect x="354.8" y="515.0" width="2.7" height="1.3" fill="#f0b040" opacity="0.57"/>
<rect x="739.2" y="507.2" width="2.0" height="1.8" fill="#ff8a3a" opacity="0.90"/>
<rect x="530.3" y="526.8" width="1.6" height="1.8" fill="#ffb060" opacity="0.99"/>
<rect x="574.1" y="525.9" width="1.7" height="1.6" fill="#ffc850" opacity="0.66"/>
<rect x="640.3" y="500.4" width="1.9" height="1.2" fill="#e83a40" opacity="0.75"/>
<rect x="714.3" y="506.9" width="2.9" height="2.0" fill="#ff5030" opacity="0.78"/>
<rect x="404.8" y="518.8" width="2.3" height="1.0" fill="#ffc850" opacity="0.72"/>
<rect x="511.4" y="506.8" width="2.0" height="1.6" fill="#ffb060" opacity="0.62"/>
<rect x="442.3" y="497.7" width="1.8" height="1.1" fill="#ff7040" opacity="0.82"/>
<rect x="641.8" y="502.2" width="2.8" height="1.9" fill="#ffc850" opacity="0.98"/>
<rect x="507.7" y="507.5" width="2.5" height="1.5" fill="#e83a40" opacity="0.68"/>
<rect x="346.5" y="513.3" width="2.0" height="1.1" fill="#ffe090" opacity="0.72"/>
<rect x="529.5" y="521.3" width="1.9" height="1.8" fill="#e83a40" opacity="0.79"/>
<rect x="556.2" y="518.0" width="3.0" height="1.8" fill="#ffb060" opacity="0.79"/>
<rect x="644.5" y="519.9" width="2.3" height="1.6" fill="#ff8a3a" opacity="0.62"/>
<rect x="420.9" y="531.2" width="2.3" height="1.1" fill="#ffc850" opacity="0.87"/>
<rect x="648.4" y="528.8" width="1.8" height="1.1" fill="#ffc850" opacity="0.89"/>
<rect x="598.6" y="515.0" width="2.5" height="1.9" fill="#ffc850" opacity="0.76"/>
<rect x="578.8" y="503.5" width="1.8" height="1.5" fill="#ffc850" opacity="0.89"/>
<rect x="690.9" y="511.1" width="2.3" height="1.7" fill="#ffb060" opacity="0.71"/>
<rect x="530.8" y="522.7" width="1.7" height="1.9" fill="#e83a40" opacity="0.91"/>
<rect x="409.6" y="497.6" width="2.5" height="1.4" fill="#ffd870" opacity="0.57"/>
<rect x="712.5" y="508.3" width="1.6" height="1.9" fill="#ff6040" opacity="0.79"/>
<rect x="325.9" y="498.7" width="1.5" height="1.7" fill="#ff7040" opacity="0.84"/>
<rect x="653.9" y="524.7" width="1.3" height="1.0" fill="#ff5030" opacity="0.66"/>
<rect x="640.3" y="503.1" width="3.0" height="1.1" fill="#ff6040" opacity="0.93"/>
<rect x="678.9" y="527.4" width="2.0" height="1.5" fill="#ff6040" opacity="0.68"/>
<rect x="728.8" y="528.3" width="1.8" height="1.6" fill="#ffb060" opacity="0.90"/>
<rect x="711.1" y="498.4" width="3.0" height="1.7" fill="#e83a40" opacity="0.75"/>
<rect x="535.1" y="530.2" width="1.9" height="1.7" fill="#ff6040" opacity="0.87"/>
<rect x="733.5" y="525.2" width="2.9" height="1.1" fill="#ff6040" opacity="0.70"/>
<rect x="608.7" y="530.8" width="2.3" height="1.0" fill="#ffc850" opacity="0.77"/>
<rect x="706.9" y="515.8" width="2.3" height="1.3" fill="#ff8a3a" opacity="0.67"/>
<rect x="479.0" y="504.7" width="2.9" height="1.6" fill="#f0b040" opacity="0.75"/>
<rect x="411.2" y="519.9" width="2.2" height="1.8" fill="#ff9a3a" opacity="0.99"/>
<rect x="366.8" y="512.5" width="1.4" height="1.3" fill="#ffe090" opacity="0.61"/>
<rect x="466.8" y="536.5" width="3.1" height="1.2" fill="#ffd870" opacity="0.65"/>
<rect x="272.4" y="500.0" width="1.2" height="1.4" fill="#ffc850" opacity="0.96"/>
<rect x="644.7" y="512.6" width="1.8" height="1.7" fill="#ffb060" opacity="0.86"/>
<rect x="608.9" y="518.5" width="2.9" height="1.4" fill="#e83a40" opacity="0.59"/>
<rect x="722.3" y="509.9" width="2.9" height="1.9" fill="#ffb060" opacity="0.93"/>
<rect x="658.4" y="516.5" width="1.7" height="1.4" fill="#ff5030" opacity="0.83"/>
<rect x="554.3" y="513.5" width="1.9" height="1.3" fill="#ff6040" opacity="0.82"/>
<rect x="315.7" y="529.0" width="1.9" height="1.7" fill="#ff9a3a" opacity="0.92"/>
<rect x="330.2" y="528.0" width="2.4" height="1.8" fill="#ffc850" opacity="0.58"/>
<rect x="525.4" y="527.7" width="3.1" height="1.1" fill="#ff5030" opacity="0.72"/>
<rect x="747.4" y="518.4" width="1.7" height="1.0" fill="#ffc850" opacity="0.98"/>
<rect x="389.5" y="518.1" width="1.3" height="1.6" fill="#ff9a3a" opacity="0.87"/>
<rect x="447.3" y="518.8" width="1.9" height="1.0" fill="#ffc850" opacity="0.68"/>
<rect x="268.9" y="488.5" width="1.7" height="1.7" fill="#ffc850" opacity="0.84"/>
<rect x="307.3" y="532.9" width="2.3" height="1.3" fill="#ffc850" opacity="0.59"/>
<rect x="727.6" y="526.7" width="2.1" height="1.2" fill="#e83a40" opacity="0.63"/>
<rect x="609.4" y="530.3" width="1.9" height="1.8" fill="#ff6040" opacity="0.76"/>
<rect x="641.0" y="507.0" width="2.3" height="1.8" fill="#ff6040" opacity="0.64"/>
<rect x="679.3" y="498.0" width="2.9" height="1.1" fill="#ff6040" opacity="0.91"/>
<rect x="663.7" y="510.7" width="2.0" height="1.6" fill="#e83a40" opacity="0.74"/>
<rect x="262.4" y="490.7" width="2.3" height="1.1" fill="#ff7040" opacity="0.75"/>
<rect x="549.5" y="525.8" width="1.5" height="1.0" fill="#ffb060" opacity="0.89"/>
<rect x="552.7" y="514.8" width="1.3" height="1.3" fill="#ff8a3a" opacity="0.66"/>
<rect x="312.6" y="509.0" width="2.5" height="1.2" fill="#ffc850" opacity="0.65"/>
<rect x="309.1" y="515.8" width="1.8" height="1.3" fill="#ffc850" opacity="0.76"/>
<rect x="340.1" y="511.3" width="1.5" height="1.4" fill="#ff7040" opacity="0.75"/>
<rect x="521.7" y="525.8" width="2.1" height="1.9" fill="#ff8a3a" opacity="0.60"/>
<rect x="624.4" y="525.4" width="2.9" height="1.1" fill="#ffc850" opacity="0.85"/>
<rect x="461.8" y="536.2" width="2.6" height="1.6" fill="#ffe090" opacity="0.74"/>
<rect x="351.6" y="513.9" width="1.4" height="1.6" fill="#f0b040" opacity="0.95"/>
<rect x="338.8" y="510.0" width="2.5" height="1.7" fill="#f0b040" opacity="0.66"/>
<rect x="597.2" y="537.0" width="2.2" height="1.5" fill="#e83a40" opacity="0.79"/>
<rect x="644.8" y="502.7" width="1.9" height="2.0" fill="#ff5030" opacity="0.58"/>
<rect x="410.1" y="514.5" width="2.1" height="2.0" fill="#ff7040" opacity="0.95"/>
<rect x="489.2" y="516.1" width="1.3" height="1.4" fill="#f0b040" opacity="0.56"/>
<rect x="517.2" y="524.1" width="2.7" height="1.3" fill="#ff5030" opacity="0.70"/>
<rect x="363.0" y="521.9" width="2.3" height="1.3" fill="#ffd870" opacity="0.90"/>
<rect x="263.0" y="498.7" width="2.7" height="1.8" fill="#ff9a3a" opacity="0.58"/>
<rect x="585.4" y="502.5" width="2.8" height="1.1" fill="#ffb060" opacity="0.90"/>
<rect x="451.2" y="520.3" width="2.7" height="1.4" fill="#ffe090" opacity="0.93"/>
<rect x="269.1" y="518.4" width="2.6" height="1.1" fill="#f0b040" opacity="0.57"/>
<rect x="665.6" y="523.9" width="2.1" height="1.6" fill="#ffb060" opacity="0.89"/>
<rect x="681.8" y="515.7" width="1.9" height="1.3" fill="#ffc850" opacity="0.58"/>
<rect x="737.3" y="533.1" width="2.2" height="1.9" fill="#ff8a3a" opacity="0.91"/>
<rect x="494.5" y="531.3" width="2.8" height="1.1" fill="#ffc850" opacity="0.56"/>
<rect x="306.2" y="529.0" width="2.2" height="1.2" fill="#ff7040" opacity="0.94"/>
<rect x="319.6" y="502.6" width="2.6" height="1.5" fill="#ffc850" opacity="0.86"/>
<rect x="731.9" y="519.7" width="3.2" height="1.8" fill="#ff5030" opacity="0.97"/>
<rect x="730.2" y="500.3" width="1.7" height="1.3" fill="#ff5030" opacity="0.70"/>
<rect x="742.4" y="499.4" width="2.5" height="1.5" fill="#e83a40" opacity="0.92"/>
<rect x="358.0" y="507.1" width="2.7" height="1.3" fill="#ffc850" opacity="0.74"/>
<rect x="623.5" y="526.6" width="1.8" height="1.8" fill="#ff5030" opacity="0.88"/>
<rect x="540.2" y="516.3" width="2.0" height="1.1" fill="#ff6040" opacity="0.60"/>
<rect x="524.7" y="519.0" width="1.4" height="1.7" fill="#ffb060" opacity="0.56"/>
<rect x="278.9" y="492.4" width="2.3" height="1.6" fill="#f0b040" opacity="0.74"/>
<rect x="377.4" y="508.9" width="2.9" height="1.6" fill="#ff7040" opacity="0.97"/>
<rect x="344.8" y="505.4" width="2.1" height="1.9" fill="#f0b040" opacity="0.65"/>
<rect x="371.8" y="507.0" width="2.5" height="1.6" fill="#f0b040" opacity="0.91"/>
<rect x="530.1" y="524.7" width="3.2" height="1.8" fill="#ffb060" opacity="0.61"/>
<rect x="315.5" y="497.3" width="2.5" height="1.8" fill="#ff7040" opacity="0.62"/>
<rect x="339.1" y="517.3" width="2.0" height="1.2" fill="#ff9a3a" opacity="0.55"/>
<rect x="387.6" y="504.5" width="1.5" height="1.3" fill="#ff9a3a" opacity="0.70"/>
<rect x="332.6" y="515.7" width="2.7" height="1.5" fill="#ff9a3a" opacity="0.55"/>
<rect x="374.6" y="532.7" width="2.5" height="1.8" fill="#ffe090" opacity="0.77"/>
<rect x="327.1" y="534.1" width="2.3" height="1.1" fill="#ffe090" opacity="0.69"/>
<rect x="562.1" y="525.6" width="2.4" height="1.8" fill="#ffb060" opacity="0.79"/>
<rect x="581.4" y="508.8" width="2.9" height="1.9" fill="#ff6040" opacity="0.58"/>
<rect x="635.7" y="508.0" width="1.4" height="1.6" fill="#ffc850" opacity="0.99"/>
<rect x="715.4" y="536.1" width="3.1" height="1.3" fill="#ffc850" opacity="0.81"/>
<rect x="588.9" y="510.2" width="2.0" height="1.4" fill="#e83a40" opacity="0.79"/>
<rect x="340.3" y="531.1" width="2.5" height="1.6" fill="#ffd870" opacity="0.79"/>
<rect x="676.7" y="527.1" width="2.2" height="2.0" fill="#ff5030" opacity="0.64"/>
<rect x="351.0" y="510.8" width="1.9" height="1.9" fill="#ffe090" opacity="0.85"/>
<rect x="303.7" y="497.2" width="3.1" height="1.0" fill="#f0b040" opacity="0.85"/>
<rect x="540.8" y="535.6" width="1.4" height="1.4" fill="#ff8a3a" opacity="0.97"/>
<rect x="466.1" y="535.7" width="3.1" height="1.4" fill="#ff9a3a" opacity="0.74"/>
<rect x="524.1" y="531.4" width="2.7" height="1.5" fill="#ff5030" opacity="0.87"/>
<rect x="571.8" y="535.6" width="2.7" height="1.2" fill="#ffc850" opacity="0.81"/>
<rect x="475.0" y="510.1" width="1.6" height="1.7" fill="#ffe090" opacity="0.77"/>
<rect x="468.9" y="526.7" width="1.8" height="2.0" fill="#ff7040" opacity="0.75"/>
<rect x="620.5" y="526.9" width="2.6" height="1.0" fill="#e83a40" opacity="0.77"/>
<rect x="504.7" y="524.9" width="2.3" height="1.3" fill="#ff5030" opacity="0.60"/>
<rect x="496.7" y="504.5" width="2.1" height="2.0" fill="#ffd870" opacity="0.77"/>
<rect x="395.9" y="508.5" width="1.5" height="1.0" fill="#f0b040" opacity="0.80"/>
<rect x="733.5" y="508.3" width="2.8" height="1.3" fill="#ffc850" opacity="0.74"/>
<rect x="555.6" y="530.7" width="1.5" height="1.2" fill="#ff5030" opacity="0.72"/>
<rect x="455.5" y="515.5" width="2.1" height="1.6" fill="#f0b040" opacity="0.98"/>
<rect x="573.6" y="522.8" width="1.9" height="1.0" fill="#ff5030" opacity="0.98"/>
<rect x="521.2" y="522.4" width="3.0" height="1.3" fill="#ff8a3a" opacity="0.74"/>
<rect x="499.6" y="515.2" width="1.9" height="1.3" fill="#f0b040" opacity="0.95"/>
<rect x="369.4" y="505.7" width="2.7" height="1.5" fill="#ffe090" opacity="0.98"/>
<rect x="489.5" y="532.3" width="2.2" height="1.7" fill="#ffe090" opacity="0.67"/>
<rect x="295.5" y="525.1" width="1.9" height="1.8" fill="#ffc850" opacity="0.76"/>
<rect x="695.1" y="516.1" width="2.9" height="1.9" fill="#ffc850" opacity="0.61"/>
<rect x="665.4" y="524.9" width="2.3" height="1.9" fill="#ff5030" opacity="0.62"/>
<rect x="494.9" y="518.4" width="2.0" height="1.7" fill="#ffc850" opacity="0.88"/>
<rect x="375.2" y="530.5" width="2.9" height="2.0" fill="#ff9a3a" opacity="0.82"/>
<rect x="285.5" y="530.5" width="3.0" height="1.6" fill="#ffd870" opacity="0.83"/>
<rect x="706.4" y="535.1" width="2.1" height="1.1" fill="#ff5030" opacity="0.87"/>
<rect x="522.8" y="512.8" width="3.0" height="2.0" fill="#ff8a3a" opacity="0.58"/>
<rect x="450.2" y="517.7" width="2.8" height="1.9" fill="#ff9a3a" opacity="0.60"/>
<rect x="381.1" y="535.9" width="3.0" height="1.5" fill="#ffd870" opacity="0.60"/>
<rect x="483.2" y="520.1" width="1.6" height="1.3" fill="#ffd870" opacity="0.99"/>
<rect x="266.7" y="517.2" width="1.3" height="1.1" fill="#ffc850" opacity="1.00"/>
<rect x="339.0" y="525.8" width="1.7" height="1.0" fill="#ffc850" opacity="0.59"/>
<rect x="298.1" y="505.8" width="1.9" height="1.7" fill="#f0b040" opacity="0.57"/>
<rect x="512.2" y="520.9" width="2.1" height="1.7" fill="#ff8a3a" opacity="0.93"/>
<rect x="306.7" y="502.7" width="1.4" height="1.1" fill="#ffc850" opacity="0.57"/>
<rect x="389.3" y="521.4" width="3.1" height="1.9" fill="#ffc850" opacity="0.61"/>
<rect x="646.7" y="527.5" width="3.1" height="1.2" fill="#e83a40" opacity="0.77"/>
<rect x="365.4" y="523.8" width="2.4" height="1.6" fill="#ffc850" opacity="0.94"/>
<rect x="266.0" y="486.5" width="1.7" height="1.3" fill="#ffd870" opacity="0.94"/>
<rect x="315.2" y="526.4" width="2.3" height="1.6" fill="#ffd870" opacity="0.55"/>
<rect x="556.4" y="523.5" width="2.2" height="1.1" fill="#ff6040" opacity="0.65"/>
<rect x="579.0" y="504.8" width="1.8" height="1.7" fill="#ff8a3a" opacity="0.72"/>
<rect x="455.3" y="518.7" width="2.4" height="1.2" fill="#ffc850" opacity="0.80"/>
<rect x="677.6" y="511.7" width="2.1" height="1.4" fill="#e83a40" opacity="0.82"/>
<rect x="466.9" y="503.8" width="2.4" height="1.0" fill="#ff9a3a" opacity="0.62"/>
<rect x="684.3" y="507.4" width="2.4" height="1.8" fill="#ff6040" opacity="0.76"/>
<rect x="567.7" y="512.1" width="1.5" height="1.0" fill="#ffc850" opacity="0.94"/>
<rect x="448.5" y="529.0" width="1.9" height="1.3" fill="#ffd870" opacity="0.93"/>
<rect x="700.3" y="534.5" width="1.8" height="1.6" fill="#ff5030" opacity="0.83"/>
<rect x="273.7" y="531.1" width="1.9" height="1.4" fill="#ff9a3a" opacity="0.86"/>
<rect x="339.0" y="509.7" width="2.6" height="1.6" fill="#ffc850" opacity="0.60"/>
<rect x="366.7" y="505.0" width="1.8" height="1.6" fill="#ffc850" opacity="0.77"/>
<rect x="497.1" y="526.5" width="2.1" height="1.5" fill="#ffe090" opacity="0.68"/>
<rect x="487.1" y="534.8" width="2.0" height="1.3" fill="#ffe090" opacity="0.98"/>
<rect x="303.1" y="487.0" width="2.2" height="1.9" fill="#f0b040" opacity="0.89"/>
<rect x="303.5" y="487.6" width="2.0" height="1.1" fill="#ff7040" opacity="0.83"/>
<rect x="282.1" y="505.5" width="2.9" height="1.6" fill="#f0b040" opacity="0.57"/>
<rect x="321.6" y="532.1" width="2.8" height="1.2" fill="#f0b040" opacity="0.93"/>
<rect x="747.7" y="533.5" width="1.7" height="2.0" fill="#ff8a3a" opacity="0.74"/>
<rect x="589.4" y="508.4" width="2.6" height="1.0" fill="#ff6040" opacity="0.58"/>
<rect x="532.4" y="535.4" width="2.1" height="1.9" fill="#ff6040" opacity="0.82"/>
<rect x="420.6" y="526.4" width="3.0" height="1.7" fill="#ffd870" opacity="0.95"/>
<rect x="674.9" y="505.6" width="2.7" height="1.1" fill="#ff5030" opacity="0.94"/>
<rect x="525.4" y="534.8" width="3.2" height="1.3" fill="#e83a40" opacity="0.96"/>
<rect x="644.7" y="530.4" width="3.0" height="1.5" fill="#ffb060" opacity="0.70"/>
<rect x="583.5" y="526.8" width="2.3" height="1.9" fill="#e83a40" opacity="0.69"/>
<rect x="523.6" y="507.6" width="2.2" height="1.7" fill="#ffc850" opacity="0.58"/>
<rect x="393.2" y="535.8" width="3.0" height="1.6" fill="#ff9a3a" opacity="0.60"/>
<rect x="307.2" y="493.6" width="1.3" height="1.7" fill="#ff9a3a" opacity="0.83"/>
<rect x="495.9" y="525.3" width="2.4" height="1.1" fill="#f0b040" opacity="0.76"/>
<rect x="583.9" y="512.2" width="2.3" height="1.5" fill="#ff8a3a" opacity="0.87"/>
<rect x="500.8" y="515.4" width="2.5" height="1.7" fill="#ff6040" opacity="0.72"/>
<rect x="385.9" y="515.9" width="2.5" height="1.2" fill="#ffc850" opacity="0.93"/>
<rect x="398.8" y="528.6" width="1.5" height="2.0" fill="#ff7040" opacity="0.84"/>
<rect x="404.6" y="528.9" width="1.7" height="1.4" fill="#ffd870" opacity="0.71"/>
<rect x="298.5" y="530.7" width="1.7" height="1.4" fill="#ff7040" opacity="0.78"/>
<rect x="479.8" y="503.9" width="2.6" height="1.5" fill="#ffc850" opacity="0.77"/>
<rect x="387.0" y="503.6" width="1.3" height="1.0" fill="#ff7040" opacity="0.83"/>
<rect x="601.1" y="513.9" width="2.2" height="1.1" fill="#ff6040" opacity="0.71"/>
<rect x="297.3" y="511.6" width="2.7" height="1.4" fill="#ffe090" opacity="0.67"/>
<rect x="714.6" y="499.1" width="2.9" height="1.1" fill="#ff6040" opacity="0.98"/>
<rect x="575.7" y="515.6" width="1.8" height="1.4" fill="#e83a40" opacity="0.90"/>
<rect x="438.7" y="517.4" width="1.2" height="1.8" fill="#ffd870" opacity="0.84"/>
<rect x="580.0" y="504.6" width="1.6" height="1.7" fill="#ff8a3a" opacity="0.78"/>
<rect x="746.6" y="497.6" width="2.5" height="1.1" fill="#ff6040" opacity="0.80"/>
<rect x="620.8" y="507.5" width="2.9" height="1.8" fill="#ffc850" opacity="0.98"/>
<rect x="610.0" y="521.2" width="2.8" height="1.6" fill="#ffb060" opacity="0.94"/>
<rect x="294.6" y="510.6" width="2.8" height="1.3" fill="#ff7040" opacity="1.00"/>
<rect x="289.8" y="489.1" width="2.7" height="1.6" fill="#ff9a3a" opacity="0.63"/>
<rect x="744.3" y="511.6" width="2.3" height="1.6" fill="#ff8a3a" opacity="0.75"/>
<rect x="485.1" y="535.5" width="2.5" height="1.7" fill="#ff9a3a" opacity="1.00"/>
<rect x="361.2" y="516.8" width="2.8" height="1.4" fill="#ffc850" opacity="0.58"/>
<rect x="716.4" y="502.5" width="1.3" height="1.6" fill="#ffb060" opacity="0.62"/>
<rect x="387.8" y="512.1" width="2.1" height="1.4" fill="#ffe090" opacity="0.73"/>
<rect x="514.6" y="511.8" width="1.6" height="1.1" fill="#ff6040" opacity="0.80"/>
<rect x="432.1" y="525.0" width="1.9" height="1.8" fill="#ffc850" opacity="0.63"/>
<rect x="717.9" y="533.7" width="1.8" height="1.5" fill="#ff5030" opacity="0.68"/>
<rect x="587.1" y="516.4" width="1.9" height="1.2" fill="#ffb060" opacity="0.81"/>
<rect x="433.4" y="520.5" width="2.0" height="1.3" fill="#ffe090" opacity="0.77"/>
<rect x="431.1" y="520.4" width="2.7" height="1.2" fill="#ff7040" opacity="0.93"/>
<rect x="650.5" y="530.4" width="1.5" height="1.7" fill="#e83a40" opacity="0.81"/>
<rect x="383.4" y="528.8" width="2.2" height="1.9" fill="#ff7040" opacity="0.89"/>
<rect x="525.9" y="527.9" width="2.2" height="1.9" fill="#ffc850" opacity="0.60"/>
<rect x="297.1" y="506.4" width="2.9" height="1.4" fill="#ffc850" opacity="0.72"/>
<rect x="510.8" y="510.8" width="2.9" height="1.1" fill="#ff5030" opacity="0.95"/>
<rect x="376.8" y="510.1" width="3.1" height="1.8" fill="#ffe090" opacity="0.56"/>
<rect x="324.1" y="535.8" width="2.4" height="1.6" fill="#ff9a3a" opacity="0.75"/>
<rect x="467.9" y="507.1" width="2.2" height="1.2" fill="#f0b040" opacity="0.68"/>
<rect x="469.7" y="522.4" width="2.9" height="1.7" fill="#ff9a3a" opacity="0.57"/>
<rect x="297.2" y="528.5" width="2.3" height="1.3" fill="#ffd870" opacity="0.59"/>
<rect x="498.0" y="520.3" width="1.6" height="1.2" fill="#ff7040" opacity="0.69"/>
<rect x="651.8" y="506.3" width="1.5" height="1.5" fill="#ffb060" opacity="0.99"/>
<rect x="525.3" y="514.6" width="2.1" height="1.9" fill="#ff6040" opacity="0.73"/>
<rect x="532.3" y="516.7" width="2.3" height="1.4" fill="#ff6040" opacity="0.87"/>
<rect x="687.7" y="498.8" width="2.7" height="1.7" fill="#ff5030" opacity="0.89"/>
<rect x="714.0" y="499.2" width="1.6" height="1.0" fill="#ffb060" opacity="0.88"/>
<rect x="340.2" y="518.3" width="2.0" height="1.8" fill="#ffc850" opacity="0.65"/>
<rect x="731.7" y="501.5" width="2.5" height="1.5" fill="#ff6040" opacity="0.56"/>
<rect x="727.6" y="516.6" width="1.6" height="1.9" fill="#ff8a3a" opacity="0.59"/>
<rect x="320.4" y="526.5" width="2.4" height="1.2" fill="#f0b040" opacity="0.87"/>
<rect x="345.6" y="523.7" width="1.4" height="1.4" fill="#f0b040" opacity="0.81"/>
<rect x="489.3" y="503.5" width="3.0" height="1.8" fill="#ff9a3a" opacity="0.89"/>
<rect x="553.2" y="511.2" width="3.1" height="1.9" fill="#ff8a3a" opacity="0.70"/>
<rect x="661.3" y="524.2" width="2.8" height="1.5" fill="#ff6040" opacity="0.73"/>
<rect x="648.5" y="523.2" width="2.4" height="1.2" fill="#ff6040" opacity="0.99"/>
<rect x="378.2" y="520.0" width="2.9" height="1.1" fill="#f0b040" opacity="0.95"/>
<rect x="370.6" y="499.8" width="3.1" height="1.8" fill="#ff7040" opacity="0.56"/>
<rect x="436.4" y="525.5" width="2.3" height="1.5" fill="#ffc850" opacity="0.74"/>
<rect x="597.0" y="505.9" width="2.1" height="1.6" fill="#ffb060" opacity="0.59"/>
<rect x="496.8" y="515.0" width="1.4" height="1.5" fill="#f0b040" opacity="0.95"/>
<rect x="682.8" y="504.3" width="2.1" height="1.2" fill="#ffb060" opacity="0.62"/>
<rect x="489.6" y="509.2" width="2.2" height="1.7" fill="#f0b040" opacity="0.75"/>
<rect x="408.2" y="531.3" width="1.2" height="1.4" fill="#ffe090" opacity="0.94"/>
<rect x="472.9" y="518.5" width="2.7" height="1.8" fill="#ff7040" opacity="0.65"/>
<rect x="430.7" y="527.8" width="3.1" height="1.2" fill="#ff9a3a" opacity="0.58"/>
<rect x="361.0" y="500.6" width="2.2" height="1.0" fill="#ffc850" opacity="0.67"/>
<rect x="509.9" y="508.1" width="1.6" height="2.0" fill="#ffc850" opacity="0.80"/>
<rect x="667.7" y="501.4" width="2.2" height="1.6" fill="#ffb060" opacity="0.59"/>
<rect x="528.1" y="512.8" width="3.0" height="1.2" fill="#ffb060" opacity="0.90"/>
<rect x="518.3" y="516.4" width="2.6" height="1.8" fill="#ff8a3a" opacity="0.58"/>
<rect x="464.0" y="511.9" width="2.7" height="1.5" fill="#ffe090" opacity="0.95"/>
<rect x="271.3" y="512.9" width="2.4" height="1.4" fill="#ffc850" opacity="0.76"/>
<rect x="519.4" y="525.3" width="2.2" height="1.8" fill="#ff5030" opacity="0.56"/>
<rect x="616.1" y="527.3" width="1.9" height="2.0" fill="#ffb060" opacity="0.57"/>
<rect x="726.2" y="505.0" width="2.6" height="1.1" fill="#ff8a3a" opacity="0.64"/>
<rect x="389.5" y="524.0" width="1.9" height="1.1" fill="#ffd870" opacity="0.76"/>
<rect x="429.5" y="525.8" width="2.8" height="1.5" fill="#ffe090" opacity="0.58"/>
<rect x="501.8" y="504.3" width="2.3" height="1.5" fill="#ff5030" opacity="0.63"/>
<rect x="417.3" y="503.5" width="1.9" height="1.0" fill="#ffd870" opacity="0.58"/>
<rect x="440.7" y="534.3" width="1.4" height="1.8" fill="#ff9a3a" opacity="0.78"/>
<rect x="568.8" y="510.3" width="3.1" height="1.6" fill="#ffb060" opacity="0.98"/>
<rect x="388.6" y="503.7" width="1.5" height="1.8" fill="#ffc850" opacity="0.67"/>
<rect x="301.1" y="486.3" width="2.2" height="1.7" fill="#f0b040" opacity="0.58"/>
<rect x="509.5" y="511.1" width="2.6" height="1.5" fill="#ff6040" opacity="0.62"/>
<rect x="488.0" y="523.7" width="3.0" height="1.7" fill="#ff7040" opacity="0.67"/>
<rect x="530.8" y="502.3" width="2.5" height="1.1" fill="#ffb060" opacity="0.78"/>
<rect x="502.1" y="525.5" width="2.2" height="1.6" fill="#ffc850" opacity="0.75"/>
<rect x="343.9" y="515.4" width="1.8" height="1.7" fill="#ffd870" opacity="0.94"/>
<rect x="690.5" y="499.8" width="1.7" height="1.8" fill="#ffc850" opacity="0.86"/>
<rect x="487.8" y="533.6" width="2.3" height="1.7" fill="#ff9a3a" opacity="0.85"/>
<rect x="455.9" y="519.5" width="2.3" height="2.0" fill="#f0b040" opacity="0.77"/>
<rect x="338.1" y="508.6" width="2.6" height="1.5" fill="#ff9a3a" opacity="0.81"/>
<rect x="585.6" y="502.3" width="1.8" height="1.4" fill="#e83a40" opacity="0.71"/>
<rect x="290.8" y="500.6" width="2.8" height="1.0" fill="#ffe090" opacity="0.91"/>
<rect x="649.6" y="531.7" width="2.2" height="1.4" fill="#ffc850" opacity="0.79"/>
<rect x="584.9" y="536.4" width="2.6" height="1.1" fill="#ffc850" opacity="0.55"/>
<rect x="389.9" y="498.5" width="2.3" height="1.6" fill="#ffd870" opacity="0.90"/>
<rect x="628.0" y="526.9" width="3.0" height="1.7" fill="#ff6040" opacity="0.57"/>
<rect x="302.6" y="498.5" width="1.7" height="1.9" fill="#ff9a3a" opacity="0.91"/>
<rect x="474.6" y="508.2" width="1.7" height="1.5" fill="#ffc850" opacity="0.56"/>
<rect x="282.8" y="508.9" width="1.7" height="1.7" fill="#ffd870" opacity="0.70"/>
<rect x="622.4" y="531.9" width="2.4" height="1.1" fill="#ff6040" opacity="0.79"/>
<rect x="510.2" y="523.1" width="3.1" height="1.3" fill="#ffc850" opacity="0.74"/>
<rect x="414.7" y="522.0" width="1.4" height="1.7" fill="#ff7040" opacity="0.97"/>
<rect x="547.8" y="535.6" width="1.8" height="1.4" fill="#ff8a3a" opacity="0.88"/>
<rect x="434.6" y="527.1" width="2.2" height="1.3" fill="#ffc850" opacity="0.82"/>
<rect x="454.3" y="518.0" width="2.8" height="1.7" fill="#f0b040" opacity="0.75"/>
<rect x="398.6" y="532.7" width="1.4" height="1.8" fill="#ff7040" opacity="0.96"/>
<rect x="322.3" y="504.4" width="3.2" height="2.0" fill="#f0b040" opacity="0.69"/>
<rect x="293.4" y="498.7" width="3.2" height="1.6" fill="#f0b040" opacity="0.93"/>
<rect x="535.8" y="528.7" width="2.2" height="1.9" fill="#ff8a3a" opacity="0.61"/>
<rect x="601.4" y="532.5" width="1.3" height="1.8" fill="#ff6040" opacity="0.93"/>
<rect x="578.0" y="512.5" width="1.4" height="1.0" fill="#e83a40" opacity="0.98"/>
<rect x="368.8" y="533.4" width="1.3" height="1.1" fill="#ff7040" opacity="0.84"/>
<rect x="332.1" y="522.6" width="2.2" height="1.4" fill="#ff7040" opacity="0.98"/>
<rect x="449.2" y="536.6" width="2.6" height="1.6" fill="#ff7040" opacity="0.58"/>
<rect x="692.5" y="528.2" width="1.6" height="1.6" fill="#ff6040" opacity="0.88"/>
<rect x="529.6" y="511.3" width="2.2" height="1.2" fill="#ff5030" opacity="0.55"/>
<rect x="514.6" y="532.5" width="1.5" height="1.5" fill="#ffb060" opacity="0.87"/>
<rect x="606.3" y="504.2" width="3.1" height="1.5" fill="#ff6040" opacity="0.55"/>
<rect x="265.1" y="488.2" width="1.4" height="1.3" fill="#ffe090" opacity="0.69"/>
<rect x="433.5" y="515.1" width="2.1" height="1.2" fill="#ff9a3a" opacity="0.69"/>
<rect x="521.6" y="519.5" width="1.5" height="1.6" fill="#ffc850" opacity="0.98"/>
<rect x="443.8" y="531.7" width="2.6" height="1.5" fill="#ff9a3a" opacity="0.82"/>
<rect x="474.6" y="514.7" width="2.0" height="1.4" fill="#ff7040" opacity="0.78"/>
<rect x="436.3" y="532.7" width="1.2" height="1.2" fill="#ffd870" opacity="0.70"/>
<rect x="347.3" y="514.5" width="2.6" height="1.7" fill="#ffd870" opacity="0.65"/>
<rect x="416.0" y="494.3" width="1.2" height="1.8" fill="#ff9a3a" opacity="0.89"/>
<rect x="688.7" y="508.8" width="1.7" height="1.4" fill="#ffc850" opacity="0.55"/>
<rect x="693.0" y="497.8" width="1.3" height="1.3" fill="#ff5030" opacity="0.74"/>
<rect x="738.6" y="502.8" width="2.5" height="1.8" fill="#ff6040" opacity="0.65"/>
<rect x="644.2" y="536.4" width="1.6" height="1.2" fill="#ff5030" opacity="0.57"/>
<rect x="529.5" y="504.8" width="2.9" height="1.0" fill="#ff5030" opacity="1.00"/>
<rect x="303.7" y="493.8" width="1.5" height="1.1" fill="#ffc850" opacity="0.72"/>
<rect x="653.3" y="500.9" width="2.3" height="1.8" fill="#ff8a3a" opacity="0.70"/>
<rect x="281.5" y="491.0" width="1.5" height="1.7" fill="#ff7040" opacity="0.99"/>
<rect x="444.5" y="523.6" width="2.6" height="1.2" fill="#ff7040" opacity="0.88"/>
<rect x="279.9" y="509.8" width="1.5" height="1.5" fill="#ff9a3a" opacity="0.97"/>
<rect x="272.7" y="498.9" width="2.5" height="1.7" fill="#ffe090" opacity="0.55"/>
<rect x="669.3" y="532.9" width="3.0" height="1.1" fill="#ffc850" opacity="0.74"/>
<rect x="738.5" y="526.7" width="2.7" height="1.5" fill="#e83a40" opacity="0.56"/>
<rect x="527.5" y="516.5" width="2.8" height="1.0" fill="#ffc850" opacity="0.94"/>
<rect x="649.6" y="505.6" width="2.1" height="1.8" fill="#ffb060" opacity="0.61"/>
<rect x="512.2" y="528.1" width="2.1" height="1.9" fill="#e83a40" opacity="0.87"/>
<rect x="503.4" y="505.2" width="1.3" height="1.2" fill="#ff8a3a" opacity="0.93"/>
<rect x="409.1" y="500.3" width="2.3" height="1.8" fill="#f0b040" opacity="0.61"/>
<rect x="746.2" y="520.2" width="1.5" height="1.9" fill="#ff6040" opacity="0.67"/>
<rect x="639.6" y="529.0" width="1.7" height="1.5" fill="#ff6040" opacity="0.90"/>
<rect x="573.0" y="533.8" width="1.8" height="1.1" fill="#ff8a3a" opacity="0.98"/>
<rect x="415.4" y="532.8" width="2.0" height="1.7" fill="#ff9a3a" opacity="0.94"/>
<rect x="298.6" y="512.0" width="2.5" height="1.8" fill="#ffc850" opacity="0.80"/>
<rect x="517.6" y="530.2" width="1.6" height="1.4" fill="#ff5030" opacity="0.87"/>
<rect x="717.2" y="519.3" width="2.1" height="1.7" fill="#e83a40" opacity="0.55"/>
<rect x="464.9" y="502.8" width="3.1" height="1.2" fill="#ffd870" opacity="1.00"/>
<rect x="540.7" y="513.3" width="1.3" height="1.1" fill="#ff5030" opacity="0.85"/>
<rect x="458.1" y="505.2" width="2.6" height="1.8" fill="#ffe090" opacity="0.91"/>
<rect x="554.5" y="504.7" width="2.3" height="2.0" fill="#ff6040" opacity="0.90"/>
<rect x="315.6" y="513.5" width="3.1" height="1.3" fill="#ff9a3a" opacity="0.56"/>
<rect x="489.0" y="526.7" width="2.3" height="1.4" fill="#ff9a3a" opacity="0.80"/>
<rect x="304.9" y="507.5" width="2.0" height="1.5" fill="#ffc850" opacity="0.89"/>
<rect x="656.6" y="526.5" width="1.3" height="1.7" fill="#e83a40" opacity="0.66"/>
<rect x="373.5" y="518.4" width="1.8" height="1.9" fill="#ffd870" opacity="0.60"/>
<rect x="688.5" y="536.0" width="3.1" height="1.9" fill="#ff8a3a" opacity="0.83"/>
<rect x="670.3" y="534.6" width="2.9" height="1.0" fill="#e83a40" opacity="0.63"/>
<rect x="577.9" y="513.4" width="1.5" height="1.1" fill="#ffc850" opacity="0.79"/>
<rect x="556.3" y="526.1" width="3.2" height="1.3" fill="#ff5030" opacity="0.65"/>
<rect x="351.8" y="508.4" width="3.0" height="1.9" fill="#ff7040" opacity="0.98"/>
<rect x="564.5" y="510.2" width="1.8" height="1.2" fill="#ff6040" opacity="0.95"/>
<rect x="437.4" y="531.6" width="2.6" height="1.8" fill="#f0b040" opacity="0.96"/>
<rect x="682.8" y="516.7" width="2.3" height="1.3" fill="#ff8a3a" opacity="0.92"/>
<rect x="281.8" y="518.5" width="1.7" height="1.7" fill="#ff9a3a" opacity="0.62"/>
<rect x="685.8" y="518.1" width="3.1" height="2.0" fill="#e83a40" opacity="0.79"/>
<rect x="535.5" y="508.9" width="1.9" height="1.8" fill="#e83a40" opacity="0.74"/>
<rect x="426.4" y="495.6" width="1.5" height="1.5" fill="#ffd870" opacity="0.58"/>
<rect x="349.0" y="536.2" width="2.6" height="1.9" fill="#ffe090" opacity="0.71"/>
<rect x="660.5" y="507.3" width="1.6" height="1.6" fill="#ff6040" opacity="0.97"/>
<rect x="267.6" y="522.5" width="1.4" height="1.8" fill="#f0b040" opacity="0.70"/>
<rect x="601.3" y="516.2" width="1.9" height="2.0" fill="#e83a40" opacity="0.70"/>
<rect x="672.8" y="529.4" width="2.2" height="1.5" fill="#ffc850" opacity="0.93"/>
<rect x="318.3" y="497.5" width="2.6" height="1.1" fill="#ffc850" opacity="0.84"/>
<rect x="552.2" y="528.2" width="2.2" height="1.1" fill="#ff6040" opacity="0.89"/>
<rect x="513.8" y="507.9" width="2.1" height="1.3" fill="#ff8a3a" opacity="0.72"/>
<rect x="347.0" y="528.0" width="1.9" height="1.9" fill="#ff9a3a" opacity="0.56"/>
<rect x="376.9" y="507.3" width="1.4" height="1.7" fill="#ff9a3a" opacity="0.95"/>
<rect x="735.5" y="529.2" width="2.7" height="1.4" fill="#ff8a3a" opacity="0.63"/>
<rect x="477.0" y="516.7" width="2.4" height="1.1" fill="#f0b040" opacity="0.61"/>
<rect x="612.7" y="535.4" width="1.2" height="1.2" fill="#e83a40" opacity="0.75"/>
<rect x="599.9" y="536.2" width="2.5" height="1.6" fill="#ffc850" opacity="0.78"/>
<rect x="637.9" y="520.5" width="3.1" height="1.9" fill="#ffc850" opacity="0.55"/>
<rect x="691.5" y="501.2" width="2.7" height="1.4" fill="#ff6040" opacity="0.93"/>
<rect x="587.1" y="535.6" width="3.1" height="1.5" fill="#ff6040" opacity="1.00"/>
<rect x="710.2" y="510.8" width="3.0" height="1.1" fill="#ffc850" opacity="0.97"/>
<rect x="715.6" y="523.5" width="2.4" height="1.7" fill="#ff6040" opacity="0.82"/>
<rect x="369.3" y="497.4" width="1.8" height="1.5" fill="#ff7040" opacity="0.55"/>
<rect x="315.8" y="509.0" width="3.0" height="1.6" fill="#ff9a3a" opacity="0.89"/>
<rect x="658.8" y="514.5" width="2.6" height="1.2" fill="#e83a40" opacity="0.70"/>
<rect x="291.1" y="505.8" width="2.5" height="1.2" fill="#ff7040" opacity="0.63"/>
<rect x="395.2" y="500.6" width="3.2" height="1.7" fill="#ffe090" opacity="0.69"/>
<rect x="631.2" y="531.5" width="2.2" height="1.1" fill="#ff5030" opacity="0.99"/>
<rect x="578.1" y="525.0" width="2.3" height="1.3" fill="#ff5030" opacity="0.58"/>
<rect x="568.2" y="527.1" width="1.4" height="1.9" fill="#ffb060" opacity="0.75"/>
<rect x="329.6" y="534.2" width="2.3" height="1.5" fill="#ffd870" opacity="0.65"/>
<rect x="516.9" y="502.1" width="2.2" height="1.6" fill="#ff8a3a" opacity="0.90"/>
<rect x="455.8" y="521.4" width="2.3" height="1.8" fill="#ff9a3a" opacity="0.84"/>
<rect x="719.2" y="524.3" width="1.4" height="1.8" fill="#e83a40" opacity="0.69"/>
<rect x="709.4" y="528.7" width="2.7" height="1.4" fill="#ffb060" opacity="0.79"/>
<rect x="642.1" y="499.3" width="2.7" height="1.0" fill="#ff6040" opacity="0.94"/>
<rect x="539.5" y="526.7" width="2.0" height="1.7" fill="#ffc850" opacity="0.96"/>
<rect x="440.9" y="516.6" width="2.0" height="1.8" fill="#ffe090" opacity="0.89"/>
<rect x="453.1" y="523.6" width="1.5" height="2.0" fill="#ffe090" opacity="0.78"/>
<rect x="616.8" y="516.4" width="1.7" height="1.6" fill="#ff8a3a" opacity="0.92"/>
<rect x="402.7" y="502.8" width="1.8" height="1.1" fill="#ffe090" opacity="0.86"/>
<rect x="719.9" y="502.9" width="2.2" height="1.3" fill="#ff5030" opacity="0.80"/>
<rect x="596.1" y="520.1" width="2.4" height="1.1" fill="#ffc850" opacity="0.85"/>
<rect x="496.6" y="528.6" width="1.9" height="1.9" fill="#ffe090" opacity="0.65"/>
<rect x="577.6" y="502.2" width="2.1" height="1.5" fill="#ff5030" opacity="0.77"/>
<rect x="442.4" y="503.9" width="1.6" height="1.3" fill="#ff7040" opacity="0.68"/>
<rect x="451.4" y="523.7" width="1.8" height="1.6" fill="#ffe090" opacity="0.72"/>
<rect x="722.5" y="536.3" width="1.9" height="1.4" fill="#ff5030" opacity="0.78"/>
<rect x="670.1" y="520.4" width="3.0" height="1.1" fill="#ff6040" opacity="0.56"/>
<rect x="315.6" y="501.8" width="1.5" height="1.2" fill="#ffd870" opacity="0.76"/>
<rect x="605.6" y="525.9" width="2.0" height="1.6" fill="#ff8a3a" opacity="0.61"/>
<rect x="558.3" y="532.9" width="1.5" height="1.2" fill="#ffc850" opacity="0.96"/>
<rect x="600.6" y="528.7" width="2.7" height="1.3" fill="#ff8a3a" opacity="0.60"/>
<rect x="407.2" y="535.9" width="1.2" height="1.7" fill="#ff9a3a" opacity="1.00"/>
<rect x="563.2" y="514.8" width="1.6" height="1.8" fill="#ffc850" opacity="0.73"/>
<rect x="646.4" y="505.0" width="2.1" height="1.4" fill="#ffb060" opacity="0.69"/>
<rect x="614.0" y="536.4" width="1.6" height="1.1" fill="#e83a40" opacity="0.67"/>
<rect x="611.5" y="531.3" width="2.7" height="1.7" fill="#ffc850" opacity="0.92"/>
<rect x="708.6" y="535.1" width="3.1" height="1.2" fill="#ff6040" opacity="0.70"/>
<rect x="412.0" y="527.4" width="3.2" height="1.3" fill="#ffd870" opacity="0.97"/>
<rect x="268.7" y="504.4" width="2.5" height="1.7" fill="#ffc850" opacity="0.77"/>
<rect x="305.5" y="528.4" width="2.2" height="1.6" fill="#ff7040" opacity="0.91"/>
<rect x="501.8" y="518.6" width="2.6" height="1.9" fill="#e83a40" opacity="0.77"/>
<rect x="545.6" y="509.4" width="2.5" height="1.4" fill="#ffb060" opacity="0.95"/>
<rect x="718.9" y="528.1" width="3.1" height="1.9" fill="#e83a40" opacity="0.95"/>
<rect x="538.9" y="528.4" width="3.1" height="1.1" fill="#ffc850" opacity="0.95"/>
<rect x="539.7" y="536.9" width="2.0" height="1.0" fill="#ffb060" opacity="0.75"/>
<rect x="562.3" y="508.8" width="3.0" height="1.7" fill="#ff6040" opacity="0.65"/>
<rect x="504.2" y="520.0" width="2.8" height="1.8" fill="#ffc850" opacity="0.74"/>
<rect x="497.9" y="510.3" width="3.0" height="1.2" fill="#ff7040" opacity="0.90"/>
<rect x="446.6" y="519.7" width="2.5" height="1.3" fill="#f0b040" opacity="0.82"/>
<rect x="356.0" y="530.0" width="2.4" height="1.7" fill="#ffe090" opacity="0.60"/>
<rect x="373.0" y="507.3" width="2.2" height="1.6" fill="#ffc850" opacity="0.92"/>
<rect x="694.6" y="512.4" width="2.0" height="1.7" fill="#e83a40" opacity="0.92"/>
<rect x="437.7" y="512.1" width="3.0" height="1.2" fill="#ff9a3a" opacity="0.64"/>
<rect x="585.7" y="508.4" width="2.8" height="1.6" fill="#ff8a3a" opacity="0.84"/>
<rect x="406.9" y="526.9" width="3.0" height="1.8" fill="#ffe090" opacity="0.89"/>
<rect x="321.6" y="513.0" width="2.1" height="1.6" fill="#f0b040" opacity="0.63"/>
<rect x="262.8" y="504.2" width="1.8" height="1.0" fill="#f0b040" opacity="0.57"/>
<rect x="612.0" y="523.1" width="3.1" height="1.2" fill="#ffc850" opacity="0.84"/>
<rect x="356.6" y="519.2" width="2.3" height="1.6" fill="#ffc850" opacity="0.86"/>
<rect x="528.2" y="533.7" width="2.3" height="1.4" fill="#ff8a3a" opacity="0.81"/>
<rect x="432.6" y="504.2" width="2.4" height="1.0" fill="#ffe090" opacity="0.83"/>
<rect x="461.7" y="522.1" width="2.2" height="1.2" fill="#ffd870" opacity="0.64"/>
<rect x="313.0" y="526.5" width="1.7" height="1.5" fill="#ff9a3a" opacity="0.97"/>
<rect x="344.7" y="506.4" width="1.4" height="1.3" fill="#ff9a3a" opacity="0.90"/>
<rect x="521.5" y="512.2" width="2.4" height="1.7" fill="#e83a40" opacity="0.61"/>
<rect x="284.4" y="520.1" width="1.7" height="1.2" fill="#ffc850" opacity="0.59"/>
<rect x="457.0" y="527.0" width="2.9" height="1.9" fill="#ffc850" opacity="0.57"/>
<rect x="716.9" y="535.8" width="2.4" height="1.5" fill="#e83a40" opacity="0.85"/>
<rect x="502.9" y="515.9" width="3.0" height="1.6" fill="#ffc850" opacity="0.79"/>
<rect x="429.0" y="508.5" width="3.0" height="1.1" fill="#ffe090" opacity="0.96"/>
<rect x="614.2" y="524.7" width="1.8" height="1.6" fill="#ff5030" opacity="0.90"/>
<rect x="317.3" y="510.8" width="1.7" height="1.6" fill="#ffd870" opacity="0.93"/>
<rect x="496.4" y="521.6" width="3.1" height="1.8" fill="#ff9a3a" opacity="0.97"/>
<rect x="397.1" y="534.0" width="1.6" height="1.5" fill="#ff7040" opacity="0.98"/>
<rect x="305.5" y="506.1" width="2.7" height="1.7" fill="#ffd870" opacity="0.79"/>
<rect x="543.1" y="508.6" width="2.2" height="1.8" fill="#ffb060" opacity="0.87"/>
<rect x="623.4" y="511.2" width="1.8" height="1.7" fill="#ffc850" opacity="0.99"/>
<rect x="723.7" y="507.0" width="3.0" height="1.9" fill="#ffc850" opacity="0.95"/>
<rect x="296.6" y="516.4" width="3.1" height="1.8" fill="#ff7040" opacity="0.76"/>
<rect x="739.7" y="501.1" width="1.8" height="1.5" fill="#ff6040" opacity="0.81"/>
<rect x="480.4" y="530.6" width="1.4" height="1.7" fill="#ff7040" opacity="0.75"/>
<rect x="286.4" y="520.2" width="1.7" height="1.2" fill="#ffc850" opacity="0.92"/>
<rect x="305.0" y="492.3" width="2.7" height="1.7" fill="#f0b040" opacity="0.83"/>
<rect x="706.2" y="499.2" width="3.0" height="1.7" fill="#ffc850" opacity="0.72"/>
<rect x="629.3" y="505.5" width="3.2" height="1.3" fill="#ff5030" opacity="0.70"/>
<rect x="507.6" y="532.1" width="1.9" height="1.8" fill="#ffc850" opacity="0.55"/>
<rect x="673.3" y="535.1" width="2.8" height="1.1" fill="#e83a40" opacity="0.78"/>
<rect x="744.8" y="521.9" width="1.5" height="1.8" fill="#ff8a3a" opacity="0.85"/>
<rect x="728.6" y="536.3" width="2.6" height="1.9" fill="#ff6040" opacity="0.95"/>
<rect x="674.5" y="514.5" width="2.2" height="1.1" fill="#ff6040" opacity="0.57"/>
<rect x="309.5" y="499.0" width="1.5" height="1.9" fill="#f0b040" opacity="0.69"/>
<rect x="432.6" y="535.9" width="1.4" height="1.5" fill="#ff7040" opacity="0.88"/>
<rect x="399.1" y="526.6" width="2.0" height="2.0" fill="#ffd870" opacity="0.67"/>
<rect x="284.1" y="531.9" width="2.6" height="1.1" fill="#ffc850" opacity="0.57"/>
<rect x="438.2" y="527.1" width="3.2" height="1.6" fill="#ffc850" opacity="0.97"/>
<rect x="714.2" y="512.0" width="1.4" height="1.4" fill="#ffb060" opacity="0.96"/>
<rect x="672.9" y="512.9" width="1.6" height="1.1" fill="#ff5030" opacity="0.58"/>
<rect x="526.0" y="505.7" width="2.0" height="2.0" fill="#e83a40" opacity="0.88"/>
<rect x="469.6" y="508.4" width="3.0" height="1.6" fill="#ffe090" opacity="0.71"/>
<rect x="554.8" y="503.6" width="1.8" height="1.0" fill="#ffb060" opacity="0.84"/>
<rect x="721.5" y="503.2" width="1.5" height="1.9" fill="#ffc850" opacity="0.85"/>
<rect x="307.0" y="494.6" width="1.4" height="1.9" fill="#ff7040" opacity="0.83"/>
<rect x="459.6" y="522.8" width="3.1" height="1.3" fill="#ffe090" opacity="0.95"/>
<rect x="613.3" y="521.9" width="3.0" height="1.7" fill="#ffc850" opacity="0.80"/>
<rect x="282.4" y="497.3" width="2.1" height="1.2" fill="#ff7040" opacity="0.99"/>
<rect x="338.4" y="494.6" width="2.9" height="1.7" fill="#ffe090" opacity="0.75"/>
<rect x="522.1" y="536.5" width="3.0" height="1.6" fill="#ff6040" opacity="0.89"/>
<rect x="618.7" y="527.1" width="1.6" height="1.8" fill="#ffc850" opacity="0.86"/>
<rect x="341.5" y="533.1" width="2.5" height="2.0" fill="#ff7040" opacity="0.91"/>
<rect x="491.4" y="530.9" width="2.6" height="1.1" fill="#ffe090" opacity="0.72"/>
<rect x="603.8" y="514.8" width="2.5" height="2.0" fill="#ff5030" opacity="0.80"/>
<rect x="526.0" y="513.7" width="1.6" height="1.9" fill="#ff8a3a" opacity="0.60"/>
<rect x="568.4" y="524.5" width="2.7" height="1.5" fill="#ff5030" opacity="0.73"/>
<rect x="631.4" y="523.7" width="2.9" height="1.6" fill="#e83a40" opacity="0.66"/>
<rect x="423.7" y="531.8" width="2.4" height="1.5" fill="#ffc850" opacity="0.96"/>
<rect x="742.7" y="534.2" width="2.9" height="1.5" fill="#ff6040" opacity="0.68"/>
<rect x="480.9" y="503.8" width="3.0" height="1.4" fill="#ffc850" opacity="0.69"/>
<rect x="645.6" y="502.7" width="1.8" height="1.5" fill="#ffc850" opacity="0.89"/>
<rect x="507.4" y="531.7" width="2.3" height="1.0" fill="#ffb060" opacity="0.61"/>
<rect x="588.5" y="506.6" width="2.4" height="1.8" fill="#ff8a3a" opacity="0.67"/>
<rect x="352.2" y="515.8" width="1.4" height="1.3" fill="#ff9a3a" opacity="0.72"/>
<rect x="620.3" y="529.4" width="1.4" height="1.9" fill="#ffb060" opacity="0.91"/>
<rect x="385.8" y="500.2" width="3.0" height="1.7" fill="#f0b040" opacity="0.72"/>
<rect x="546.8" y="506.3" width="2.9" height="1.4" fill="#ff8a3a" opacity="0.74"/>
<rect x="542.9" y="518.3" width="2.7" height="1.9" fill="#ff5030" opacity="0.86"/>
<rect x="338.4" y="519.9" width="1.7" height="1.7" fill="#ffc850" opacity="0.91"/>
<rect x="390.5" y="532.8" width="2.5" height="1.9" fill="#ff9a3a" opacity="0.59"/>
<rect x="619.5" y="524.5" width="1.9" height="1.5" fill="#ffb060" opacity="0.81"/>
<rect x="653.1" y="513.7" width="1.6" height="1.5" fill="#ff5030" opacity="0.62"/>
<rect x="344.2" y="506.5" width="2.8" height="1.8" fill="#ffc850" opacity="0.77"/>
<rect x="573.4" y="525.5" width="2.6" height="1.1" fill="#ffb060" opacity="0.70"/>
<rect x="271.3" y="494.2" width="1.5" height="1.6" fill="#ff9a3a" opacity="0.72"/>
<rect x="588.5" y="532.5" width="3.1" height="2.0" fill="#ff8a3a" opacity="0.73"/>
<rect x="742.2" y="527.5" width="2.7" height="2.0" fill="#ffc850" opacity="0.79"/>
<rect x="411.7" y="504.9" width="2.5" height="1.6" fill="#f0b040" opacity="0.73"/>
<rect x="446.8" y="511.5" width="2.1" height="1.1" fill="#ff7040" opacity="0.92"/>
<rect x="541.2" y="535.3" width="3.1" height="1.2" fill="#ffc850" opacity="0.92"/>
<rect x="458.1" y="509.9" width="1.7" height="1.2" fill="#ffc850" opacity="0.99"/>
<rect x="334.3" y="518.7" width="3.0" height="1.8" fill="#ffd870" opacity="0.67"/>
<rect x="457.5" y="516.6" width="1.6" height="1.6" fill="#ff7040" opacity="0.75"/>
<rect x="607.8" y="528.6" width="2.7" height="1.5" fill="#ffc850" opacity="0.58"/>
<rect x="431.0" y="518.5" width="2.9" height="1.5" fill="#ffd870" opacity="0.57"/>
<rect x="319.1" y="522.0" width="1.3" height="1.9" fill="#ffd870" opacity="0.59"/>
<rect x="530.8" y="521.1" width="2.8" height="1.2" fill="#e83a40" opacity="0.89"/>
<rect x="652.9" y="509.6" width="3.0" height="1.6" fill="#ff8a3a" opacity="0.89"/>
<rect x="450.7" y="513.3" width="2.7" height="1.2" fill="#ff7040" opacity="0.69"/>
<rect x="455.4" y="525.5" width="3.0" height="1.5" fill="#ff7040" opacity="0.90"/>
<rect x="314.3" y="518.6" width="2.2" height="1.1" fill="#ff9a3a" opacity="0.77"/>
<rect x="465.8" y="520.4" width="2.6" height="1.9" fill="#ffe090" opacity="0.74"/>
<rect x="292.9" y="527.2" width="2.5" height="1.4" fill="#ff9a3a" opacity="0.75"/>
<rect x="679.1" y="534.6" width="2.7" height="1.5" fill="#ff8a3a" opacity="0.95"/>
<rect x="654.0" y="518.4" width="1.2" height="1.4" fill="#ff6040" opacity="0.79"/>
<rect x="287.2" y="530.4" width="1.4" height="1.9" fill="#ffd870" opacity="0.78"/>
<rect x="624.5" y="531.7" width="1.5" height="1.7" fill="#e83a40" opacity="0.83"/>
<rect x="300.3" y="535.6" width="3.1" height="1.0" fill="#ffc850" opacity="0.55"/>
<rect x="622.6" y="533.5" width="1.4" height="1.6" fill="#ffc850" opacity="0.83"/>
<rect x="386.4" y="509.3" width="2.0" height="1.7" fill="#ffe090" opacity="0.59"/>
<rect x="391.0" y="503.0" width="2.8" height="1.4" fill="#ffd870" opacity="0.73"/>
<rect x="572.1" y="503.4" width="1.5" height="1.7" fill="#ffb060" opacity="0.64"/>
<rect x="586.5" y="513.4" width="2.3" height="1.3" fill="#ff8a3a" opacity="0.80"/>
<rect x="451.4" y="514.0" width="2.6" height="2.0" fill="#f0b040" opacity="0.70"/>
<rect x="488.2" y="514.8" width="1.9" height="1.7" fill="#ff7040" opacity="0.63"/>
<rect x="525.1" y="511.4" width="2.2" height="1.2" fill="#ffc850" opacity="0.72"/>
<rect x="358.9" y="497.8" width="1.6" height="1.2" fill="#ff7040" opacity="0.73"/>
<rect x="326.0" y="490.6" width="2.5" height="1.6" fill="#ff7040" opacity="0.69"/>
<rect x="632.6" y="520.5" width="1.9" height="1.5" fill="#ffc850" opacity="0.96"/>
<rect x="320.3" y="525.5" width="2.0" height="2.0" fill="#ffc850" opacity="0.96"/>
<rect x="587.9" y="517.2" width="1.8" height="1.4" fill="#ff6040" opacity="0.64"/>
<rect x="429.8" y="521.2" width="2.8" height="1.0" fill="#ffe090" opacity="0.73"/>
<rect x="383.1" y="520.1" width="1.8" height="1.7" fill="#ff9a3a" opacity="0.73"/>
<rect x="262.1" y="492.5" width="2.9" height="1.5" fill="#ffe090" opacity="0.75"/>
<rect x="275.6" y="491.3" width="2.2" height="1.8" fill="#ffc850" opacity="0.77"/>
<rect x="603.4" y="504.1" width="1.6" height="1.6" fill="#ff6040" opacity="0.84"/>
<rect x="740.6" y="500.7" width="2.7" height="1.4" fill="#ffc850" opacity="0.65"/>
<rect x="666.4" y="524.0" width="1.8" height="1.7" fill="#ffc850" opacity="0.92"/>
<rect x="648.8" y="498.0" width="1.3" height="1.5" fill="#ff6040" opacity="0.97"/>
<rect x="512.7" y="505.7" width="2.3" height="1.4" fill="#ff8a3a" opacity="0.77"/>
<rect x="490.6" y="508.6" width="1.4" height="1.5" fill="#ff7040" opacity="0.56"/>
<rect x="346.8" y="511.7" width="1.5" height="1.5" fill="#ffe090" opacity="0.86"/>
<rect x="521.2" y="513.6" width="2.9" height="1.2" fill="#ff8a3a" opacity="0.95"/>
<rect x="281.7" y="500.8" width="1.4" height="2.0" fill="#ff7040" opacity="0.89"/>
<rect x="686.0" y="504.4" width="2.3" height="1.2" fill="#ffb060" opacity="0.59"/>
<rect x="372.3" y="529.5" width="1.4" height="1.1" fill="#ffe090" opacity="0.92"/>
<rect x="617.4" y="514.7" width="3.0" height="1.1" fill="#ffb060" opacity="0.61"/>
<rect x="548.6" y="510.4" width="1.4" height="1.7" fill="#e83a40" opacity="0.86"/>
<rect x="631.7" y="504.4" width="1.3" height="1.6" fill="#ff5030" opacity="0.59"/>
<rect x="609.8" y="521.1" width="2.8" height="1.7" fill="#ff8a3a" opacity="0.92"/>
<rect x="508.2" y="512.2" width="2.1" height="1.8" fill="#ff8a3a" opacity="0.89"/>
<rect x="593.9" y="505.8" width="3.0" height="1.4" fill="#ffc850" opacity="0.61"/>
<rect x="724.3" y="527.5" width="3.2" height="1.4" fill="#ffc850" opacity="0.62"/>
<rect x="501.0" y="519.2" width="3.1" height="1.3" fill="#e83a40" opacity="0.75"/>
<rect x="697.5" y="505.3" width="2.9" height="1.2" fill="#e83a40" opacity="0.88"/>
<rect x="394.4" y="511.6" width="3.1" height="1.3" fill="#ffe090" opacity="0.86"/>
<rect x="442.0" y="506.6" width="1.3" height="1.4" fill="#ffe090" opacity="0.88"/>
<rect x="527.4" y="535.6" width="2.6" height="1.3" fill="#ff5030" opacity="0.73"/>
<rect x="292.8" y="506.1" width="1.8" height="1.2" fill="#ff9a3a" opacity="0.79"/>
<rect x="697.4" y="522.8" width="2.4" height="1.3" fill="#ff8a3a" opacity="0.62"/>
<rect x="506.9" y="520.1" width="1.8" height="1.4" fill="#ff5030" opacity="0.99"/>
<rect x="410.3" y="517.2" width="2.7" height="1.1" fill="#ff7040" opacity="0.71"/>
<rect x="423.6" y="525.0" width="2.7" height="1.6" fill="#ffe090" opacity="0.86"/>
<rect x="450.9" y="507.2" width="2.1" height="1.7" fill="#ff9a3a" opacity="0.76"/>
<rect x="486.8" y="535.5" width="2.6" height="1.1" fill="#ffd870" opacity="0.61"/>
<rect x="610.2" y="503.4" width="2.2" height="2.0" fill="#e83a40" opacity="0.94"/>
<rect x="459.7" y="514.0" width="1.9" height="1.2" fill="#ffe090" opacity="0.83"/>
<rect x="512.8" y="502.8" width="2.2" height="1.7" fill="#ffc850" opacity="0.77"/>
<rect x="543.9" y="516.7" width="2.5" height="1.5" fill="#ff6040" opacity="0.88"/>
<rect x="590.5" y="532.9" width="1.7" height="1.7" fill="#ff5030" opacity="0.68"/>
<rect x="551.0" y="529.1" width="1.2" height="1.2" fill="#ff8a3a" opacity="0.82"/>
<rect x="412.1" y="529.4" width="2.7" height="1.2" fill="#ffd870" opacity="0.58"/>
<rect x="373.6" y="521.3" width="1.4" height="1.3" fill="#ffe090" opacity="0.89"/>
<rect x="596.4" y="508.4" width="2.4" height="1.6" fill="#e83a40" opacity="0.66"/>
<rect x="585.6" y="506.9" width="2.3" height="1.9" fill="#ff6040" opacity="0.85"/>
<rect x="365.5" y="525.5" width="2.9" height="1.1" fill="#f0b040" opacity="0.94"/>
<rect x="531.5" y="525.1" width="3.1" height="1.9" fill="#ffb060" opacity="0.75"/>
<rect x="712.3" y="536.7" width="2.2" height="1.5" fill="#ffc850" opacity="0.63"/>
<rect x="476.3" y="512.1" width="2.7" height="1.0" fill="#ffc850" opacity="0.83"/>
<rect x="459.6" y="526.9" width="2.0" height="1.5" fill="#ff9a3a" opacity="0.61"/>
<rect x="310.6" y="502.5" width="3.1" height="1.4" fill="#ff9a3a" opacity="0.73"/>
<rect x="368.8" y="497.0" width="2.8" height="1.8" fill="#ff7040" opacity="0.96"/>
<rect x="373.4" y="496.3" width="2.0" height="1.7" fill="#ffd870" opacity="0.79"/>
<rect x="371.4" y="495.2" width="2.4" height="1.4" fill="#f0b040" opacity="0.61"/>
<rect x="638.7" y="508.5" width="2.7" height="1.4" fill="#ff5030" opacity="0.75"/>
<rect x="360.9" y="500.0" width="2.1" height="1.0" fill="#ff7040" opacity="0.57"/>
<rect x="675.8" y="513.5" width="2.7" height="1.4" fill="#ff8a3a" opacity="0.62"/>
<rect x="686.3" y="503.2" width="1.7" height="1.8" fill="#ff5030" opacity="0.76"/>
<rect x="322.2" y="495.5" width="2.6" height="1.8" fill="#ff7040" opacity="0.74"/>
<rect x="473.8" y="505.3" width="2.5" height="1.2" fill="#ff9a3a" opacity="0.67"/>
<rect x="290.2" y="518.4" width="1.5" height="1.4" fill="#ff7040" opacity="0.93"/>
<rect x="412.6" y="504.5" width="2.2" height="1.7" fill="#ffc850" opacity="0.60"/>
<rect x="463.9" y="530.0" width="1.5" height="1.8" fill="#ff9a3a" opacity="0.94"/>
<rect x="465.6" y="506.6" width="2.6" height="1.7" fill="#f0b040" opacity="0.59"/>
<rect x="585.7" y="515.9" width="1.7" height="1.7" fill="#e83a40" opacity="0.96"/>
<rect x="432.3" y="519.2" width="3.1" height="2.0" fill="#ffd870" opacity="0.57"/>
<rect x="592.6" y="505.3" width="1.3" height="1.1" fill="#ffb060" opacity="0.74"/>
<rect x="332.9" y="517.5" width="3.0" height="1.3" fill="#f0b040" opacity="0.70"/>
<rect x="648.9" y="513.4" width="2.9" height="1.9" fill="#ff8a3a" opacity="0.82"/>
<rect x="664.0" y="519.0" width="2.8" height="1.6" fill="#e83a40" opacity="0.60"/>
<rect x="712.4" y="513.8" width="2.2" height="1.9" fill="#ff6040" opacity="0.72"/>
<rect x="270.1" y="507.7" width="2.0" height="1.8" fill="#f0b040" opacity="0.78"/>
<rect x="471.2" y="523.5" width="2.9" height="1.6" fill="#ff7040" opacity="0.61"/>
<rect x="514.7" y="529.0" width="3.0" height="1.4" fill="#ff5030" opacity="0.74"/>
<rect x="381.0" y="526.4" width="2.4" height="1.9" fill="#ffe090" opacity="0.64"/>
<rect x="283.4" y="513.4" width="2.5" height="1.6" fill="#ff9a3a" opacity="0.97"/>
<rect x="435.1" y="518.9" width="2.3" height="1.3" fill="#f0b040" opacity="0.96"/>
<rect x="385.5" y="506.9" width="2.1" height="1.9" fill="#ffd870" opacity="0.56"/>
<rect x="571.7" y="505.2" width="1.9" height="1.6" fill="#ff6040" opacity="0.84"/>
<rect x="261.7" y="488.3" width="2.9" height="1.1" fill="#ff9a3a" opacity="0.65"/>
<rect x="468.6" y="531.1" width="2.9" height="1.5" fill="#ff9a3a" opacity="0.96"/>
<rect x="264.1" y="532.5" width="3.1" height="1.7" fill="#ff7040" opacity="0.96"/>
<rect x="432.1" y="535.1" width="1.7" height="1.8" fill="#ffc850" opacity="0.96"/>
<rect x="365.1" y="510.8" width="1.9" height="2.0" fill="#f0b040" opacity="0.70"/>
<rect x="392.6" y="510.0" width="2.9" height="1.3" fill="#f0b040" opacity="0.95"/>
<rect x="652.0" y="519.8" width="1.8" height="1.5" fill="#ffc850" opacity="0.82"/>
<rect x="480.1" y="512.1" width="1.8" height="1.9" fill="#ffc850" opacity="0.75"/>
<rect x="440.1" y="533.1" width="1.8" height="1.7" fill="#ff7040" opacity="0.70"/>
<rect x="310.6" y="521.9" width="2.0" height="1.9" fill="#f0b040" opacity="0.96"/>
<rect x="677.0" y="518.7" width="2.4" height="1.9" fill="#ff8a3a" opacity="0.63"/>
<rect x="465.2" y="508.7" width="2.4" height="1.5" fill="#ff9a3a" opacity="0.65"/>
<rect x="669.4" y="535.9" width="3.1" height="2.0" fill="#ff8a3a" opacity="0.72"/>
<rect x="525.7" y="516.5" width="1.5" height="1.2" fill="#ff8a3a" opacity="0.75"/>
<rect x="526.1" y="536.7" width="1.9" height="2.0" fill="#ffc850" opacity="0.91"/>
<rect x="601.7" y="529.1" width="2.4" height="1.8" fill="#ff5030" opacity="0.70"/>
<rect x="556.8" y="535.3" width="2.0" height="1.8" fill="#ff6040" opacity="0.69"/>
<rect x="436.1" y="512.4" width="2.0" height="1.7" fill="#ffd870" opacity="0.71"/>
<rect x="374.3" y="498.3" width="1.3" height="1.3" fill="#f0b040" opacity="0.67"/>
<rect x="292.1" y="513.1" width="2.3" height="1.5" fill="#ffe090" opacity="0.73"/>
<rect x="527.7" y="530.5" width="2.5" height="1.6" fill="#ff6040" opacity="0.59"/>
<rect x="599.8" y="506.6" width="1.8" height="1.0" fill="#ff8a3a" opacity="0.74"/>
<rect x="540.0" y="506.0" width="2.1" height="1.6" fill="#ff6040" opacity="0.74"/>
<rect x="647.9" y="524.2" width="3.0" height="1.8" fill="#ff8a3a" opacity="0.61"/>
<rect x="449.7" y="532.8" width="1.3" height="2.0" fill="#ff9a3a" opacity="0.60"/>
<rect x="383.4" y="534.0" width="2.9" height="1.3" fill="#ffc850" opacity="0.69"/>
<rect x="599.8" y="510.7" width="1.8" height="1.1" fill="#e83a40" opacity="0.65"/>
<rect x="263.4" y="499.7" width="1.5" height="1.2" fill="#f0b040" opacity="0.66"/>
<rect x="428.8" y="528.6" width="2.0" height="1.1" fill="#ffe090" opacity="0.58"/>
<rect x="366.8" y="520.5" width="2.8" height="1.6" fill="#ffc850" opacity="0.82"/>
<rect x="399.9" y="495.1" width="2.4" height="1.7" fill="#f0b040" opacity="0.86"/>
<rect x="472.4" y="513.8" width="1.7" height="1.6" fill="#ff7040" opacity="0.80"/>
<rect x="295.3" y="510.4" width="2.2" height="1.5" fill="#ff9a3a" opacity="0.85"/>
<rect x="553.0" y="536.9" width="1.9" height="1.7" fill="#ffc850" opacity="0.92"/>
<rect x="373.6" y="534.6" width="1.6" height="1.4" fill="#ff9a3a" opacity="0.74"/>
<rect x="471.6" y="511.0" width="2.3" height="1.1" fill="#ffe090" opacity="1.00"/>
<rect x="644.8" y="527.7" width="1.3" height="1.2" fill="#ff5030" opacity="0.57"/>
<rect x="505.7" y="502.7" width="2.4" height="1.0" fill="#ff8a3a" opacity="0.57"/>
<rect x="508.0" y="534.4" width="2.3" height="1.7" fill="#ffb060" opacity="0.70"/>
<rect x="517.2" y="526.2" width="2.0" height="1.1" fill="#ff6040" opacity="0.67"/>
<rect x="605.4" y="529.0" width="1.7" height="1.3" fill="#e83a40" opacity="0.63"/>
<rect x="299.4" y="505.8" width="2.6" height="1.1" fill="#f0b040" opacity="0.68"/>
<rect x="453.3" y="518.8" width="1.3" height="1.2" fill="#ffc850" opacity="0.72"/>
<rect x="350.6" y="503.6" width="3.1" height="1.7" fill="#ff7040" opacity="0.94"/>
<rect x="686.4" y="523.6" width="1.6" height="1.2" fill="#ff8a3a" opacity="0.87"/>
<rect x="562.5" y="514.4" width="2.9" height="1.7" fill="#ff5030" opacity="0.68"/>
<rect x="489.9" y="532.5" width="1.2" height="1.1" fill="#ffd870" opacity="0.87"/>
<rect x="637.4" y="506.0" width="2.0" height="1.5" fill="#ffc850" opacity="0.69"/>
<rect x="432.1" y="535.0" width="3.0" height="1.5" fill="#f0b040" opacity="0.85"/>
<rect x="703.2" y="514.2" width="2.8" height="1.3" fill="#ffc850" opacity="0.71"/>
<rect x="597.3" y="507.7" width="2.8" height="1.1" fill="#ffc850" opacity="0.84"/>
<rect x="404.1" y="516.1" width="2.2" height="1.7" fill="#ff9a3a" opacity="0.86"/>
<rect x="475.9" y="520.2" width="1.9" height="2.0" fill="#ffd870" opacity="0.61"/>
<rect x="688.5" y="509.4" width="1.7" height="1.9" fill="#ff5030" opacity="0.90"/>
<rect x="715.0" y="528.2" width="1.6" height="1.9" fill="#ff5030" opacity="0.60"/>
<rect x="291.5" y="535.6" width="2.4" height="1.0" fill="#ff7040" opacity="0.66"/>
<rect x="622.1" y="525.3" width="1.8" height="1.2" fill="#e83a40" opacity="0.96"/>
<rect x="368.7" y="495.6" width="2.7" height="1.4" fill="#ffe090" opacity="0.90"/>
<rect x="664.0" y="524.7" width="3.1" height="1.0" fill="#ff5030" opacity="0.97"/>
<rect x="481.3" y="529.2" width="2.6" height="1.9" fill="#ff7040" opacity="0.96"/>
<rect x="626.2" y="513.5" width="2.0" height="1.3" fill="#ff5030" opacity="0.91"/>
<rect x="573.1" y="512.4" width="2.8" height="1.8" fill="#ffb060" opacity="0.79"/>
<rect x="317.5" y="501.3" width="3.2" height="1.7" fill="#ff9a3a" opacity="0.76"/>
<rect x="548.6" y="521.8" width="1.5" height="1.7" fill="#ffc850" opacity="0.78"/>
<rect x="303.5" y="500.6" width="2.2" height="1.4" fill="#f0b040" opacity="0.87"/>
<rect x="577.1" y="535.0" width="1.8" height="1.6" fill="#ffb060" opacity="0.95"/>
<rect x="706.2" y="510.3" width="2.0" height="1.1" fill="#ff8a3a" opacity="0.77"/>
<rect x="698.5" y="508.1" width="1.8" height="1.9" fill="#ffb060" opacity="0.72"/>
<rect x="339.7" y="499.7" width="2.3" height="1.8" fill="#f0b040" opacity="0.76"/>
<rect x="362.1" y="498.9" width="1.9" height="1.6" fill="#ffc850" opacity="0.62"/>
<rect x="352.9" y="532.0" width="2.5" height="2.0" fill="#ffe090" opacity="0.84"/>
<rect x="686.7" y="527.5" width="2.4" height="1.4" fill="#e83a40" opacity="0.72"/>
<rect x="363.9" y="503.1" width="1.6" height="1.2" fill="#ff7040" opacity="0.82"/>
<rect x="594.4" y="510.8" width="2.0" height="1.4" fill="#e83a40" opacity="0.99"/>
<rect x="612.2" y="518.1" width="1.6" height="1.7" fill="#e83a40" opacity="0.76"/>
<rect x="367.9" y="516.0" width="1.4" height="1.6" fill="#ffe090" opacity="0.78"/>
<rect x="387.4" y="497.7" width="2.0" height="1.4" fill="#f0b040" opacity="0.59"/>
<rect x="364.1" y="520.7" width="1.5" height="2.0" fill="#ff7040" opacity="0.96"/>
<rect x="439.1" y="517.2" width="2.3" height="1.7" fill="#ff7040" opacity="0.98"/>
<rect x="485.8" y="523.4" width="2.3" height="1.1" fill="#ffe090" opacity="0.76"/>
<rect x="404.4" y="501.2" width="2.5" height="1.5" fill="#f0b040" opacity="1.00"/>
<rect x="493.3" y="523.6" width="1.7" height="1.7" fill="#ffd870" opacity="0.98"/>
<rect x="523.5" y="514.6" width="1.9" height="1.2" fill="#e83a40" opacity="0.91"/>
<rect x="681.4" y="508.2" width="2.1" height="1.0" fill="#ff6040" opacity="0.79"/>
<rect x="565.9" y="511.9" width="3.0" height="1.9" fill="#ffc850" opacity="0.67"/>
<rect x="314.4" y="527.3" width="2.8" height="1.6" fill="#ffc850" opacity="0.73"/>
<rect x="405.8" y="515.8" width="2.9" height="1.5" fill="#ffc850" opacity="0.75"/>
<rect x="734.4" y="528.4" width="1.5" height="1.1" fill="#ff5030" opacity="0.59"/>
<rect x="514.6" y="528.7" width="1.8" height="1.3" fill="#ffc850" opacity="0.64"/>
<rect x="686.6" y="512.2" width="1.3" height="1.9" fill="#ff6040" opacity="0.82"/>
<rect x="727.2" y="517.8" width="2.9" height="1.3" fill="#ff6040" opacity="0.92"/>
<rect x="573.6" y="503.1" width="2.5" height="1.1" fill="#e83a40" opacity="0.85"/>
<rect x="656.5" y="499.4" width="3.2" height="1.3" fill="#ff8a3a" opacity="0.96"/>
<rect x="262.2" y="526.7" width="1.4" height="2.0" fill="#ffc850" opacity="0.85"/>
<rect x="742.9" y="514.5" width="1.6" height="1.2" fill="#e83a40" opacity="0.90"/>
<rect x="518.4" y="502.6" width="1.7" height="2.0" fill="#ffc850" opacity="0.61"/>
<rect x="403.7" y="520.1" width="2.8" height="1.4" fill="#ff7040" opacity="0.85"/>
<rect x="274.5" y="489.3" width="2.7" height="1.4" fill="#ff9a3a" opacity="0.99"/>
<rect x="504.7" y="525.2" width="1.3" height="1.1" fill="#ffc850" opacity="0.59"/>
</g>
<rect x="261" y="522" width="489" height="16" fill="#ff6a30" opacity="0.22" filter="url(#bl1)"/>
<rect x="261" y="531" width="489" height="5" fill="#ffa040" opacity="0.45" filter="url(#bl1)"/>
<rect x="261" y="534" width="489" height="2.5" fill="#ff4030" opacity="0.5"/>
<path d="M518 540V478l4-7h13l4 7v62z" fill="#3a2a4c"/><path d="M522 500q6-14 12 0v20h-12z" fill="#6a4a70"/>
<path d="M261 471L380 480L520 498L600 510L600 518L520 507L380 490L261 486Z" fill="#4e1a34" filter="url(#bl05)"/>
<path d="M261 474L380 482L450 491" stroke="#f03a2a" stroke-width="2.8" opacity="0.9" filter="url(#bl05)" fill="none"/>
<path d="M450 491L520 500L600 512" stroke="#f08040" stroke-width="1.4" opacity="0.7" fill="none"/>
<path d="M518 540V478l4-7h13l4 7v62z" fill="#3a2a4c"/><path d="M522 500q6-14 12 0v20h-12z" fill="#6a4a70"/>
<path d="M539 488q10 12 22 24" stroke="#d080a0" stroke-width="0.8" fill="none"/>
<rect x="261" y="538" width="489" height="96" fill="url(#water)"/>
<rect x="261" y="538" width="489" height="96" fill="url(#waterH)"/>
<g mask="url(#wm)"><g filter="url(#bl2)">
<rect x="262" y="540" width="14" height="94" fill="#a08080" opacity="0.70"/>
<rect x="278" y="540" width="16" height="94" fill="#c08a60" opacity="0.75"/>
<rect x="296" y="540" width="12" height="94" fill="#b07a70" opacity="0.65"/>
<rect x="312" y="540" width="18" height="94" fill="#d09060" opacity="0.75"/>
<rect x="333" y="540" width="14" height="94" fill="#a08090" opacity="0.60"/>
<rect x="352" y="540" width="28" height="94" fill="#e89060" opacity="0.80"/>
<rect x="384" y="540" width="10" height="94" fill="#7a6a90" opacity="0.60"/>
<rect x="398" y="540" width="20" height="94" fill="#d08a70" opacity="0.70"/>
<rect x="422" y="540" width="20" height="94" fill="#f09a50" opacity="0.85"/>
<rect x="446" y="540" width="12" height="94" fill="#c07a70" opacity="0.65"/>
<rect x="462" y="540" width="16" height="94" fill="#d09a70" opacity="0.70"/>
<rect x="482" y="540" width="22" height="94" fill="#f5c850" opacity="0.95"/>
<rect x="508" y="540" width="14" height="94" fill="#d08a60" opacity="0.70"/>
<rect x="526" y="540" width="14" height="94" fill="#b07080" opacity="0.65"/>
<rect x="546" y="540" width="28" height="94" fill="#f8dc60" opacity="1.00"/>
<rect x="578" y="540" width="20" height="94" fill="#e84a30" opacity="0.90"/>
<rect x="600" y="540" width="18" height="94" fill="#e080a8" opacity="0.75"/>
<rect x="620" y="540" width="16" height="94" fill="#e07090" opacity="0.75"/>
<rect x="640" y="540" width="24" height="94" fill="#f06a8a" opacity="0.80"/>
<rect x="666" y="540" width="22" height="94" fill="#3e2a6a" opacity="0.75"/>
<rect x="690" y="540" width="25" height="94" fill="#ff3a48" opacity="0.90"/>
<rect x="718" y="540" width="32" height="94" fill="#9a4a90" opacity="0.70"/>
</g></g>
<g opacity="0.3" filter="url(#bl1)">
<rect x="538" y="572" width="51" height="1.6" fill="#e0a070"/>
<rect x="416" y="617" width="26" height="1.6" fill="#f0d0a0"/>
<rect x="560" y="557" width="15" height="1.6" fill="#5a4a80"/>
<rect x="386" y="580" width="43" height="1.6" fill="#3a3a70"/>
<rect x="568" y="570" width="58" height="1.6" fill="#3a3a70"/>
<rect x="524" y="586" width="34" height="1.6" fill="#e0a070"/>
<rect x="459" y="622" width="67" height="1.6" fill="#f0d0a0"/>
<rect x="547" y="575" width="30" height="1.6" fill="#3a3a70"/>
<rect x="410" y="590" width="40" height="1.6" fill="#3a3a70"/>
<rect x="302" y="620" width="28" height="1.6" fill="#f0d0a0"/>
<rect x="287" y="626" width="48" height="1.6" fill="#5a4a80"/>
<rect x="648" y="577" width="48" height="1.6" fill="#f0d0a0"/>
<rect x="304" y="599" width="43" height="1.6" fill="#e0a070"/>
<rect x="613" y="614" width="52" height="1.6" fill="#5a4a80"/>
<rect x="372" y="563" width="58" height="1.6" fill="#3a3a70"/>
<rect x="310" y="612" width="46" height="1.6" fill="#e0a070"/>
<rect x="583" y="577" width="22" height="1.6" fill="#e0a070"/>
<rect x="291" y="621" width="36" height="1.6" fill="#5a4a80"/>
<rect x="527" y="582" width="52" height="1.6" fill="#5a4a80"/>
<rect x="339" y="604" width="47" height="1.6" fill="#f0d0a0"/>
<rect x="286" y="611" width="55" height="1.6" fill="#f0d0a0"/>
<rect x="370" y="609" width="59" height="1.6" fill="#3a3a70"/>
<rect x="328" y="555" width="35" height="1.6" fill="#5a4a80"/>
<rect x="699" y="561" width="60" height="1.6" fill="#e0a070"/>
<rect x="469" y="559" width="29" height="1.6" fill="#5a4a80"/>
<rect x="460" y="606" width="23" height="1.6" fill="#5a4a80"/>
<rect x="344" y="566" width="36" height="1.6" fill="#5a4a80"/>
<rect x="513" y="570" width="67" height="1.6" fill="#3a3a70"/>
<rect x="402" y="598" width="25" height="1.6" fill="#3a3a70"/>
<rect x="281" y="558" width="63" height="1.6" fill="#5a4a80"/>
<rect x="537" y="596" width="25" height="1.6" fill="#3a3a70"/>
<rect x="691" y="579" width="53" height="1.6" fill="#3a3a70"/>
<rect x="299" y="628" width="58" height="1.6" fill="#5a4a80"/>
<rect x="695" y="630" width="53" height="1.6" fill="#5a4a80"/>
<rect x="520" y="573" width="68" height="1.6" fill="#f0d0a0"/>
<rect x="694" y="593" width="22" height="1.6" fill="#f0d0a0"/>
<rect x="684" y="598" width="33" height="1.6" fill="#f0d0a0"/>
<rect x="563" y="587" width="61" height="1.6" fill="#5a4a80"/>
<rect x="268" y="589" width="57" height="1.6" fill="#f0d0a0"/>
<rect x="450" y="589" width="27" height="1.6" fill="#3a3a70"/>
<rect x="643" y="619" width="68" height="1.6" fill="#5a4a80"/>
<rect x="383" y="607" width="57" height="1.6" fill="#e0a070"/>
<rect x="435" y="600" width="39" height="1.6" fill="#f0d0a0"/>
<rect x="676" y="554" width="39" height="1.6" fill="#5a4a80"/>
<rect x="565" y="590" width="24" height="1.6" fill="#f0d0a0"/>
<rect x="313" y="590" width="35" height="1.6" fill="#5a4a80"/>
<rect x="501" y="555" width="61" height="1.6" fill="#5a4a80"/>
<rect x="499" y="599" width="20" height="1.6" fill="#3a3a70"/>
<rect x="458" y="574" width="34" height="1.6" fill="#3a3a70"/>
<rect x="353" y="628" width="27" height="1.6" fill="#5a4a80"/>
<rect x="476" y="616" width="47" height="1.6" fill="#e0a070"/>
<rect x="427" y="557" width="56" height="1.6" fill="#3a3a70"/>
<rect x="328" y="607" width="41" height="1.6" fill="#5a4a80"/>
<rect x="511" y="611" width="51" height="1.6" fill="#e0a070"/>
<rect x="289" y="556" width="67" height="1.6" fill="#e0a070"/>
<rect x="558" y="594" width="57" height="1.6" fill="#5a4a80"/>
<rect x="615" y="628" width="59" height="1.6" fill="#5a4a80"/>
<rect x="582" y="565" width="68" height="1.6" fill="#e0a070"/>
<rect x="261" y="626" width="44" height="1.6" fill="#f0d0a0"/>
<rect x="626" y="591" width="57" height="1.6" fill="#5a4a80"/>
<rect x="290" y="600" width="64" height="1.6" fill="#3a3a70"/>
<rect x="554" y="624" width="51" height="1.6" fill="#3a3a70"/>
<rect x="565" y="611" width="17" height="1.6" fill="#3a3a70"/>
<rect x="525" y="556" width="66" height="1.6" fill="#3a3a70"/>
<rect x="472" y="566" width="61" height="1.6" fill="#e0a070"/>
<rect x="358" y="559" width="26" height="1.6" fill="#f0d0a0"/>
<rect x="687" y="569" width="38" height="1.6" fill="#5a4a80"/>
<rect x="467" y="597" width="38" height="1.6" fill="#3a3a70"/>
<rect x="316" y="595" width="40" height="1.6" fill="#5a4a80"/>
<rect x="611" y="597" width="30" height="1.6" fill="#3a3a70"/>
<rect x="696" y="621" width="62" height="1.6" fill="#5a4a80"/>
<rect x="506" y="596" width="54" height="1.6" fill="#5a4a80"/>
<rect x="359" y="609" width="62" height="1.6" fill="#5a4a80"/>
<rect x="398" y="619" width="37" height="1.6" fill="#e0a070"/>
<rect x="377" y="629" width="62" height="1.6" fill="#5a4a80"/>
<rect x="579" y="573" width="64" height="1.6" fill="#3a3a70"/>
<rect x="663" y="607" width="50" height="1.6" fill="#5a4a80"/>
<rect x="418" y="612" width="29" height="1.6" fill="#e0a070"/>
<rect x="406" y="552" width="28" height="1.6" fill="#5a4a80"/>
<rect x="452" y="588" width="53" height="1.6" fill="#e0a070"/>
<rect x="540" y="559" width="30" height="1.6" fill="#f0d0a0"/>
<rect x="585" y="554" width="29" height="1.6" fill="#e0a070"/>
<rect x="631" y="594" width="28" height="1.6" fill="#e0a070"/>
<rect x="617" y="625" width="18" height="1.6" fill="#f0d0a0"/>
<rect x="357" y="580" width="64" height="1.6" fill="#3a3a70"/>
<rect x="295" y="577" width="51" height="1.6" fill="#3a3a70"/>
<rect x="397" y="621" width="68" height="1.6" fill="#5a4a80"/>
<rect x="389" y="611" width="69" height="1.6" fill="#e0a070"/>
<rect x="578" y="578" width="24" height="1.6" fill="#f0d0a0"/>
<rect x="328" y="599" width="61" height="1.6" fill="#5a4a80"/>
<rect x="370" y="569" width="56" height="1.6" fill="#3a3a70"/>
<rect x="395" y="575" width="44" height="1.6" fill="#3a3a70"/>
<rect x="605" y="609" width="34" height="1.6" fill="#f0d0a0"/>
<rect x="692" y="551" width="60" height="1.6" fill="#f0d0a0"/>
<rect x="718" y="566" width="50" height="1.6" fill="#3a3a70"/>
<rect x="715" y="552" width="45" height="1.6" fill="#e0a070"/>
<rect x="547" y="623" width="50" height="1.6" fill="#3a3a70"/>
<rect x="457" y="608" width="42" height="1.6" fill="#5a4a80"/>
<rect x="323" y="603" width="62" height="1.6" fill="#f0d0a0"/>
<rect x="735" y="553" width="46" height="1.6" fill="#5a4a80"/>
<rect x="436" y="564" width="59" height="1.6" fill="#e0a070"/>
<rect x="295" y="623" width="56" height="1.6" fill="#5a4a80"/>
<rect x="607" y="570" width="31" height="1.6" fill="#f0d0a0"/>
<rect x="311" y="599" width="63" height="1.6" fill="#5a4a80"/>
<rect x="537" y="624" width="48" height="1.6" fill="#3a3a70"/>
<rect x="499" y="568" width="15" height="1.6" fill="#e0a070"/>
<rect x="698" y="596" width="52" height="1.6" fill="#e0a070"/>
<rect x="473" y="566" width="53" height="1.6" fill="#5a4a80"/>
<rect x="539" y="600" width="59" height="1.6" fill="#3a3a70"/>
<rect x="317" y="560" width="22" height="1.6" fill="#3a3a70"/>
<rect x="634" y="604" width="61" height="1.6" fill="#5a4a80"/>
<rect x="550" y="575" width="46" height="1.6" fill="#f0d0a0"/>
<rect x="736" y="596" width="39" height="1.6" fill="#e0a070"/>
<rect x="689" y="571" width="61" height="1.6" fill="#5a4a80"/>
<rect x="266" y="623" width="41" height="1.6" fill="#e0a070"/>
<rect x="359" y="567" width="15" height="1.6" fill="#3a3a70"/>
<rect x="432" y="597" width="57" height="1.6" fill="#3a3a70"/>
<rect x="279" y="553" width="26" height="1.6" fill="#e0a070"/>
<rect x="364" y="555" width="20" height="1.6" fill="#3a3a70"/>
<rect x="316" y="561" width="54" height="1.6" fill="#3a3a70"/>
<rect x="557" y="563" width="33" height="1.6" fill="#3a3a70"/>
<rect x="501" y="589" width="30" height="1.6" fill="#3a3a70"/>
<rect x="348" y="606" width="69" height="1.6" fill="#e0a070"/>
<rect x="397" y="552" width="43" height="1.6" fill="#e0a070"/>
<rect x="493" y="573" width="40" height="1.6" fill="#e0a070"/>
<rect x="525" y="600" width="43" height="1.6" fill="#e0a070"/>
<rect x="472" y="586" width="67" height="1.6" fill="#3a3a70"/>
<rect x="448" y="607" width="32" height="1.6" fill="#f0d0a0"/>
<rect x="511" y="586" width="27" height="1.6" fill="#3a3a70"/>
<rect x="455" y="583" width="56" height="1.6" fill="#3a3a70"/>
<rect x="464" y="588" width="60" height="1.6" fill="#f0d0a0"/>
<rect x="405" y="617" width="18" height="1.6" fill="#e0a070"/>
<rect x="546" y="565" width="27" height="1.6" fill="#e0a070"/>
<rect x="719" y="558" width="24" height="1.6" fill="#3a3a70"/>
<rect x="553" y="607" width="25" height="1.6" fill="#3a3a70"/>
<rect x="637" y="618" width="47" height="1.6" fill="#5a4a80"/>
<rect x="334" y="586" width="63" height="1.6" fill="#e0a070"/>
<rect x="452" y="569" width="54" height="1.6" fill="#e0a070"/>
<rect x="706" y="621" width="30" height="1.6" fill="#5a4a80"/>
<rect x="455" y="600" width="20" height="1.6" fill="#3a3a70"/>
</g>
<rect x="261" y="539" width="489" height="6" fill="#5a86c0" opacity="0.5" filter="url(#bl1)"/>
<rect x="261" y="538" width="489" height="96" fill="url(#wfade)"/>
<g fill="url(#tex)">
<path d="M334.5 546V421H356L410.8 500.5V421H434.7V546H409L357.8 466V546Z"/>
<path d="M454.9 421H480.8L502.6 463.6L524.5 421H550.3L515.5 489.5V547H490.7V489.5Z"/>
<path d="M684.9 444.8A66 66 0 1 0 684.9 522.4L665.5 508.3A42 42 0 1 1 665.5 458.9Z"/>
</g>
</g></svg>
<!-- selection -->
<div class="a" style="left:314px;top:372px;width:405px;height:218px;border:1px solid rgba(165,165,165,0.9)"></div>
<div class="a" style="left:506px;top:293px;width:1px;height:16px;background:#a0a0a0"></div>
<div class="a" style="left:516px;top:355px;width:1px;height:17px;background:rgba(165,165,165,0.9)"></div>
<svg class="a" style="left:499px;top:278px" width="15" height="15" viewBox="0 0 15 15"><circle cx="7.5" cy="7.5" r="6.6" fill="#fafafa" stroke="#8a8a8a" stroke-width="1"/><path d="M4.6 8.2a3 3 0 1 0 1.2-3.6" fill="none" stroke="#555" stroke-width="1.3"/><path d="M4 3.2l2.6 1.2-1.8 2z" fill="#555"/></svg>
<svg class="a" style="left:510px;top:341px" width="15" height="15" viewBox="0 0 15 15"><circle cx="7.5" cy="7.5" r="6.6" fill="#fafafa" stroke="#8a8a8a" stroke-width="1"/><path d="M4.6 8.2a3 3 0 1 0 1.2-3.6" fill="none" stroke="#555" stroke-width="1.3"/><path d="M4 3.2l2.6 1.2-1.8 2z" fill="#555"/></svg>
<div class="h" style="left:256px;top:304px"></div>
<div class="h" style="left:501px;top:304px"></div>
<div class="h" style="left:745px;top:304px"></div>
<div class="h" style="left:256px;top:467px"></div>
<div class="h" style="left:745px;top:467px"></div>
<div class="h" style="left:256px;top:629px"></div>
<div class="h" style="left:501px;top:629px"></div>
<div class="h" style="left:745px;top:629px"></div>
<div class="h" style="left:309px;top:367px"></div>
<div class="h" style="left:512px;top:367px"></div>
<div class="h" style="left:714px;top:367px"></div>
<div class="h" style="left:309px;top:475px"></div>
<div class="h" style="left:714px;top:475px"></div>
<div class="h" style="left:309px;top:585px"></div>
<div class="h" style="left:512px;top:585px"></div>
<div class="h" style="left:714px;top:585px"></div>


<!-- dropdown menu -->
<div class="a" style="left:113px;top:123px;width:148px;height:140px;background:#eceff0;border:1px solid #d8dbdc;border-radius:0 0 6px 6px;box-shadow:0 3px 8px rgba(0,0,0,0.18)"></div>
<svg class="a" style="left:134px;top:130px" width="24" height="22" viewBox="0 0 24 22"><path d="M7 3a6 6 0 0 1 10 3a6 6 0 0 1 1 11a6 6 0 0 1-11-1a6 6 0 0 1 0-13z" fill="none" stroke="#c3c3c3" stroke-width="1.1"/></svg>
<svg class="a" style="left:134px;top:156px" width="24" height="22" viewBox="0 0 24 22"><circle cx="9" cy="9" r="6.5" fill="none" stroke="#b5b5b5" stroke-width="1.1"/><circle cx="14" cy="13" r="6.5" fill="none" stroke="#b5b5b5" stroke-width="1.1"/></svg>
<svg class="a" style="left:134px;top:182px" width="24" height="22" viewBox="0 0 24 22"><circle cx="9" cy="9" r="6.5" fill="none" stroke="#b5b5b5" stroke-width="1.1"/><circle cx="14" cy="13" r="6.5" fill="none" stroke="#b5b5b5" stroke-width="1.1"/><path d="M10 10l4 3" stroke="#b5b5b5" stroke-width="1"/></svg>
<div class="t mi" style="left:162px;top:134px">Unión</div>
<div class="t mi" style="left:162px;top:160px">Combinar</div>
<div class="t mi" style="left:162px;top:186px">Fragmento</div>
<div class="a" style="left:114px;top:207px;width:146px;height:26px;background:#2150d3"></div>
<svg class="a" style="left:134px;top:208px" width="24" height="22" viewBox="0 0 24 22"><circle cx="9" cy="9" r="6.5" fill="#5b82e0" stroke="#d7e1f8" stroke-width="1.1"/><circle cx="14" cy="13" r="6.5" fill="none" stroke="#d7e1f8" stroke-width="1.1"/><path d="M8 14a6.5 6.5 0 0 1 9-6.5a6.5 6.5 0 0 1-9 6.5z" fill="#f4f6fd"/></svg>
<div class="t mi" style="left:162px;top:213px;color:#fff">Intersecar</div>
<svg class="a" style="left:134px;top:235px" width="24" height="22" viewBox="0 0 24 22"><circle cx="9" cy="9" r="6.5" fill="none" stroke="#c0c0c0" stroke-width="1.1" stroke-dasharray="1.5 1.5"/><circle cx="14" cy="13" r="6.5" fill="none" stroke="#c0c0c0" stroke-width="1.1" stroke-dasharray="1.5 1.5"/></svg>
<div class="t mi" style="left:162px;top:239px">Restar</div>
<div class="redbox" style="left:878px;top:295px;width:117px;height:32px"></div>
<div class="redbox" style="left:97px;top:91px;width:73px;height:43px"></div>
<div class="redbox" style="left:102px;top:199px;width:172px;height:42px"></div>
<div class="redbox" style="left:798px;top:23px;width:173px;height:43px"></div>
</body></html>
